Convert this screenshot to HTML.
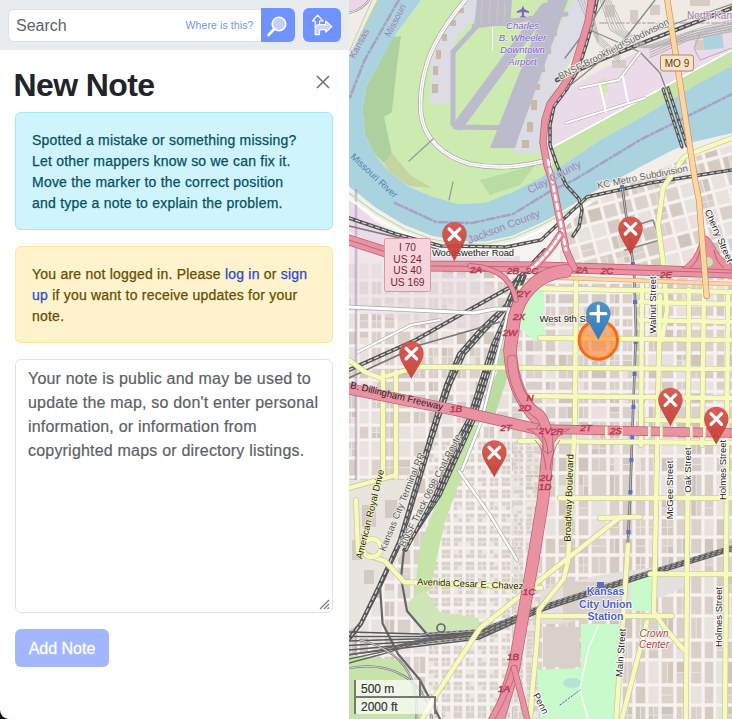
<!DOCTYPE html>
<html><head><meta charset="utf-8">
<style>
*{box-sizing:border-box;margin:0;padding:0}
html,body{width:732px;height:719px;overflow:hidden;background:#111;font-family:"Liberation Sans",sans-serif;color:#212529}
#side{position:absolute;left:0;top:0;width:349px;height:719px;background:#fff;border-bottom-left-radius:9px;overflow:hidden}
#hdr{position:absolute;left:0;top:0;width:349px;height:50px;background:#e9ecef}
#sin{position:absolute;left:7.5px;top:8.5px;width:254px;height:33px;background:#fff;border:1px solid #dee2e6;border-right:none;border-radius:6px 0 0 6px}
#sin .ph{position:absolute;left:7.5px;top:7.5px;font-size:16px;color:#5c6166;line-height:18px}
#sin .wh{position:absolute;right:8px;top:8px;font-size:10.5px;color:#7092ff;line-height:14px;letter-spacing:0.1px}
#sbtn{position:absolute;left:261px;top:8px;width:34px;height:34px;background:#7092ff;border-radius:0 6px 6px 0}
#dbtn{position:absolute;left:303px;top:8px;width:38px;height:34px;background:#7092ff;border-radius:6px}
h1{position:absolute;left:13.5px;top:64.5px;font-size:32px;font-weight:bold;line-height:40px;letter-spacing:-0.6px;color:#212529}
#close{position:absolute;left:316px;top:75px;width:14px;height:14px}
.al{position:absolute;left:15px;width:318px;padding:17px 16px 15px;-webkit-text-stroke:0.25px currentColor;font-size:14px;line-height:21px;border:1px solid;border-radius:6px;letter-spacing:0.22px;white-space:nowrap}
#a1{top:112px;background:#cff4fc;border-color:#9eeaf9;color:#055160}
#a2{top:246px;background:#fff3cd;border-color:#ffe69c;color:#664d03}
#a2 a{color:#2a47d6;text-decoration:none}
#ta{position:absolute;left:15px;top:359px;width:318px;height:254px;border:1px solid #dee2e6;border-radius:6px;padding:6.5px 12px;-webkit-text-stroke:0.2px currentColor;font-size:16px;line-height:24px;color:#5c6166;letter-spacing:0.2px;white-space:nowrap}
#grip{position:absolute;right:2px;bottom:2px;width:12px;height:12px}
#btn{position:absolute;left:15px;top:629px;width:94px;height:38px;background:#a2b7ff;border-radius:6px;color:#fff;font-size:16px;line-height:40px;text-align:center;-webkit-text-stroke:0.3px #fff}
#map{position:absolute;left:349px;top:0;width:383px;height:719px;background:#f2efe9;overflow:hidden}

.sc{position:absolute;left:5px;font-size:12px;line-height:12px;padding:3px 5px 0;-webkit-text-stroke:0.2px #333;color:#333;background:rgba(255,255,255,0.7);border:2px solid #777;white-space:nowrap;text-shadow:1px 1px #fff}
</style></head><body>
<div id="map">
<svg width="383" height="719" viewBox="349 0 383 719" style="position:absolute;left:0;top:0;font-family:'Liberation Sans',sans-serif">
<rect x="349" y="0" width="383" height="719" fill="#f2efe9"/>
<clipPath id="urb"><polygon points="349.0,195.0 376.0,216.0 404.0,232.0 431.0,243.0 458.0,249.0 486.0,249.0 513.0,243.0 540.0,231.0 590.0,204.0 640.0,178.0 671.0,164.0 732.0,145.0 732.0,719.0 349.0,719.0"/></clipPath>
<polygon points="349.0,195.0 376.0,216.0 404.0,232.0 431.0,243.0 458.0,249.0 486.0,249.0 513.0,243.0 540.0,231.0 590.0,204.0 640.0,178.0 671.0,164.0 732.0,145.0 732.0,719.0 349.0,719.0" fill="#f6f2ef" />
<g clip-path="url(#urb)"><rect x="511.4" y="277.4" width="11.2" height="3.2" fill="#e9e1dd"/><rect x="512.0" y="278.0" width="4.4" height="2.0" fill="#d9d0c9"/><rect x="517.6" y="278.0" width="4.4" height="2.0" fill="#d9d0c9"/><rect x="511.4" y="283.4" width="11.2" height="7.7" fill="#e9e1dd"/><rect x="512.0" y="284.0" width="10.0" height="6.5" fill="#dbd2cb"/><rect x="511.4" y="293.9" width="11.2" height="9.7" fill="#eddfdd"/><rect x="512.0" y="294.5" width="10.0" height="8.5" fill="#cfc5bd"/><rect x="511.4" y="306.4" width="11.2" height="9.7" fill="#e9e1dd"/><rect x="512.0" y="307.0" width="10.0" height="8.5" fill="#d9d0c9"/><rect x="511.4" y="318.9" width="11.2" height="7.7" fill="#e8e3df"/><rect x="512.0" y="319.5" width="10.0" height="6.5" fill="#d9d0c9"/><rect x="511.4" y="329.4" width="11.2" height="7.9" fill="#e8e3df"/><rect x="512.0" y="330.0" width="4.4" height="6.7" fill="#d5cbc3"/><rect x="517.6" y="330.0" width="4.4" height="6.7" fill="#dbd2cb"/><rect x="511.4" y="340.1" width="11.2" height="11.5" fill="#e9e1dd"/><rect x="512.0" y="340.7" width="10.0" height="10.3" fill="#dbd2cb"/><rect x="511.4" y="354.4" width="11.2" height="12.0" fill="#e9e1dd"/><rect x="511.4" y="369.2" width="11.2" height="9.4" fill="#e8e3df"/><rect x="512.0" y="369.8" width="4.4" height="8.2" fill="#d9d0c9"/><rect x="517.6" y="369.8" width="4.4" height="8.2" fill="#d9d0c9"/><rect x="511.4" y="381.4" width="11.2" height="8.7" fill="#e8e3df"/><rect x="512.0" y="382.0" width="4.4" height="7.5" fill="#d9d0c9"/><rect x="517.6" y="382.0" width="4.4" height="7.5" fill="#d9d0c9"/><rect x="511.4" y="392.9" width="11.2" height="10.7" fill="#eddfdd"/><rect x="512.0" y="393.5" width="10.0" height="9.5" fill="#cfc5bd"/><rect x="511.4" y="406.4" width="11.2" height="12.2" fill="#e9e1dd"/><rect x="512.0" y="407.0" width="10.0" height="4.9" fill="#d9d0c9"/><rect x="512.0" y="413.1" width="10.0" height="4.9" fill="#d9d0c9"/><rect x="511.4" y="421.4" width="11.2" height="17.6" fill="#e9e1dd"/><rect x="512.0" y="422.0" width="10.0" height="16.4" fill="#d9d0c9"/><rect x="511.4" y="441.8" width="11.2" height="12.8" fill="#e8e3df"/><rect x="512.0" y="442.4" width="4.4" height="11.6" fill="#d5cbc3"/><rect x="517.6" y="442.4" width="4.4" height="11.6" fill="#d5cbc3"/><rect x="511.4" y="457.4" width="11.2" height="14.2" fill="#eddfdd"/><rect x="512.0" y="458.0" width="4.4" height="13.0" fill="#d5cbc3"/><rect x="511.4" y="474.4" width="11.2" height="22.8" fill="#e6e2de"/><rect x="511.4" y="500.0" width="11.2" height="16.1" fill="#e8e3df"/><rect x="512.0" y="500.6" width="4.4" height="6.9" fill="#d9d0c9"/><rect x="517.6" y="500.6" width="4.4" height="6.9" fill="#cfc5bd"/><rect x="517.6" y="508.7" width="4.4" height="6.9" fill="#d9d0c9"/><rect x="511.4" y="518.9" width="11.2" height="16.7" fill="#e6e2de"/><rect x="517.6" y="519.5" width="4.4" height="15.5" fill="#d5cbc3"/><rect x="511.4" y="538.4" width="11.2" height="15.2" fill="#e8e3df"/><rect x="512.0" y="539.0" width="4.4" height="6.4" fill="#d9d0c9"/><rect x="512.0" y="546.6" width="4.4" height="6.4" fill="#d9d0c9"/><rect x="517.6" y="539.0" width="4.4" height="6.4" fill="#cfc5bd"/><rect x="517.6" y="546.6" width="4.4" height="6.4" fill="#d5cbc3"/><rect x="511.4" y="556.4" width="11.2" height="17.2" fill="#e6e2de"/><rect x="511.4" y="576.4" width="11.2" height="17.2" fill="#eddfdd"/><rect x="512.0" y="577.0" width="10.0" height="7.4" fill="#d9d0c9"/><rect x="512.0" y="585.6" width="10.0" height="7.4" fill="#cfc5bd"/><rect x="511.4" y="596.4" width="11.2" height="18.2" fill="#e9e1dd"/><rect x="512.0" y="597.0" width="4.4" height="17.0" fill="#d9d0c9"/><rect x="517.6" y="597.0" width="4.4" height="17.0" fill="#dbd2cb"/><rect x="511.4" y="617.4" width="11.2" height="21.2" fill="#eddfdd"/><rect x="512.0" y="618.0" width="4.4" height="20.0" fill="#d9d0c9"/><rect x="517.6" y="618.0" width="4.4" height="20.0" fill="#d9d0c9"/><rect x="511.4" y="641.4" width="11.2" height="17.2" fill="#eddfdd"/><rect x="511.4" y="661.4" width="11.2" height="22.2" fill="#e8e3df"/><rect x="512.0" y="662.0" width="4.4" height="9.9" fill="#d9d0c9"/><rect x="512.0" y="673.1" width="4.4" height="9.9" fill="#dbd2cb"/><rect x="517.6" y="662.0" width="4.4" height="9.9" fill="#d5cbc3"/><rect x="517.6" y="673.1" width="4.4" height="9.9" fill="#d9d0c9"/><rect x="511.4" y="686.4" width="11.2" height="17.2" fill="#e6e2de"/><rect x="511.4" y="706.4" width="11.2" height="17.2" fill="#e6e2de"/><rect x="512.0" y="707.0" width="10.0" height="16.0" fill="#cfc5bd"/><rect x="525.4" y="277.4" width="17.2" height="3.2" fill="#e6e2de"/><rect x="526.0" y="278.0" width="16.0" height="2.0" fill="#d9d0c9"/><rect x="525.4" y="283.4" width="17.2" height="7.7" fill="#e9e1dd"/><rect x="525.4" y="293.9" width="17.2" height="9.7" fill="#e6e2de"/><rect x="525.4" y="306.4" width="17.2" height="9.7" fill="#e8e3df"/><rect x="526.0" y="307.0" width="16.0" height="8.5" fill="#dbd2cb"/><rect x="525.4" y="318.9" width="17.2" height="7.7" fill="#e6e2de"/><rect x="525.4" y="329.4" width="17.2" height="7.9" fill="#e6e2de"/><rect x="526.0" y="330.0" width="16.0" height="6.7" fill="#dbd2cb"/><rect x="525.4" y="340.1" width="17.2" height="11.5" fill="#e6e2de"/><rect x="526.0" y="340.7" width="7.4" height="10.3" fill="#cfc5bd"/><rect x="534.6" y="340.7" width="7.4" height="10.3" fill="#d9d0c9"/><rect x="525.4" y="354.4" width="17.2" height="12.0" fill="#e9e1dd"/><rect x="526.0" y="355.0" width="7.4" height="10.8" fill="#d9d0c9"/><rect x="525.4" y="369.2" width="17.2" height="9.4" fill="#e8e3df"/><rect x="526.0" y="369.8" width="7.4" height="8.2" fill="#dbd2cb"/><rect x="534.6" y="369.8" width="7.4" height="8.2" fill="#d9d0c9"/><rect x="525.4" y="381.4" width="17.2" height="8.7" fill="#e9e1dd"/><rect x="526.0" y="382.0" width="16.0" height="7.5" fill="#d9d0c9"/><rect x="525.4" y="392.9" width="17.2" height="10.7" fill="#e8e3df"/><rect x="526.0" y="393.5" width="16.0" height="9.5" fill="#d5cbc3"/><rect x="525.4" y="406.4" width="17.2" height="12.2" fill="#e8e3df"/><rect x="526.0" y="407.0" width="7.4" height="11.0" fill="#dbd2cb"/><rect x="534.6" y="407.0" width="7.4" height="11.0" fill="#d9d0c9"/><rect x="525.4" y="421.4" width="17.2" height="17.6" fill="#eddfdd"/><rect x="526.0" y="422.0" width="7.4" height="7.6" fill="#cfc5bd"/><rect x="526.0" y="430.8" width="7.4" height="7.6" fill="#dbd2cb"/><rect x="534.6" y="422.0" width="7.4" height="7.6" fill="#dbd2cb"/><rect x="534.6" y="430.8" width="7.4" height="7.6" fill="#cfc5bd"/><rect x="525.4" y="441.8" width="17.2" height="12.8" fill="#eddfdd"/><rect x="526.0" y="442.4" width="7.4" height="11.6" fill="#dbd2cb"/><rect x="534.6" y="442.4" width="7.4" height="11.6" fill="#d5cbc3"/><rect x="525.4" y="457.4" width="17.2" height="14.2" fill="#e9e1dd"/><rect x="526.0" y="465.1" width="16.0" height="5.9" fill="#d5cbc3"/><rect x="525.4" y="474.4" width="17.2" height="22.8" fill="#e8e3df"/><rect x="526.0" y="475.0" width="7.4" height="21.6" fill="#cfc5bd"/><rect x="534.6" y="475.0" width="7.4" height="21.6" fill="#cfc5bd"/><rect x="525.4" y="500.0" width="17.2" height="16.1" fill="#e6e2de"/><rect x="525.4" y="518.9" width="17.2" height="16.7" fill="#e8e3df"/><rect x="526.0" y="519.5" width="7.4" height="7.2" fill="#d9d0c9"/><rect x="534.6" y="519.5" width="7.4" height="7.2" fill="#cfc5bd"/><rect x="534.6" y="527.9" width="7.4" height="7.2" fill="#dbd2cb"/><rect x="525.4" y="538.4" width="17.2" height="15.2" fill="#eddfdd"/><rect x="526.0" y="539.0" width="16.0" height="6.4" fill="#d9d0c9"/><rect x="526.0" y="546.6" width="16.0" height="6.4" fill="#dbd2cb"/><rect x="525.4" y="556.4" width="17.2" height="17.2" fill="#e8e3df"/><rect x="526.0" y="557.0" width="16.0" height="16.0" fill="#d9d0c9"/><rect x="525.4" y="576.4" width="17.2" height="17.2" fill="#e9e1dd"/><rect x="526.0" y="577.0" width="16.0" height="16.0" fill="#dbd2cb"/><rect x="525.4" y="596.4" width="17.2" height="18.2" fill="#eddfdd"/><rect x="526.0" y="597.0" width="16.0" height="17.0" fill="#cfc5bd"/><rect x="525.4" y="617.4" width="17.2" height="21.2" fill="#eddfdd"/><rect x="526.0" y="618.0" width="16.0" height="9.4" fill="#d9d0c9"/><rect x="526.0" y="628.6" width="16.0" height="9.4" fill="#d9d0c9"/><rect x="525.4" y="641.4" width="17.2" height="17.2" fill="#e6e2de"/><rect x="526.0" y="642.0" width="16.0" height="16.0" fill="#d9d0c9"/><rect x="525.4" y="661.4" width="17.2" height="22.2" fill="#eddfdd"/><rect x="526.0" y="662.0" width="7.4" height="21.0" fill="#d9d0c9"/><rect x="534.6" y="662.0" width="7.4" height="21.0" fill="#dbd2cb"/><rect x="525.4" y="686.4" width="17.2" height="17.2" fill="#e6e2de"/><rect x="525.4" y="706.4" width="17.2" height="17.2" fill="#e8e3df"/><rect x="526.0" y="707.0" width="16.0" height="16.0" fill="#d9d0c9"/><rect x="545.4" y="277.4" width="10.2" height="3.2" fill="#e9e1dd"/><rect x="546.0" y="278.0" width="3.9" height="2.0" fill="#d5cbc3"/><rect x="551.1" y="278.0" width="3.9" height="2.0" fill="#d9d0c9"/><rect x="545.4" y="283.4" width="10.2" height="7.7" fill="#e9e1dd"/><rect x="546.0" y="284.0" width="9.0" height="6.5" fill="#d5cbc3"/><rect x="545.4" y="293.9" width="10.2" height="9.7" fill="#e9e1dd"/><rect x="546.0" y="294.5" width="3.9" height="8.5" fill="#cfc5bd"/><rect x="551.1" y="294.5" width="3.9" height="8.5" fill="#d9d0c9"/><rect x="545.4" y="306.4" width="10.2" height="9.7" fill="#eddfdd"/><rect x="546.0" y="307.0" width="3.9" height="8.5" fill="#d9d0c9"/><rect x="551.1" y="307.0" width="3.9" height="8.5" fill="#d9d0c9"/><rect x="545.4" y="318.9" width="10.2" height="7.7" fill="#e6e2de"/><rect x="546.0" y="319.5" width="3.9" height="6.5" fill="#d9d0c9"/><rect x="551.1" y="319.5" width="3.9" height="6.5" fill="#d5cbc3"/><rect x="545.4" y="329.4" width="10.2" height="7.9" fill="#e6e2de"/><rect x="546.0" y="330.0" width="9.0" height="6.7" fill="#d9d0c9"/><rect x="545.4" y="340.1" width="10.2" height="11.5" fill="#e8e3df"/><rect x="546.0" y="340.7" width="9.0" height="10.3" fill="#d9d0c9"/><rect x="545.4" y="354.4" width="10.2" height="12.0" fill="#e9e1dd"/><rect x="546.0" y="355.0" width="9.0" height="10.8" fill="#d5cbc3"/><rect x="545.4" y="369.2" width="10.2" height="9.4" fill="#e8e3df"/><rect x="545.4" y="381.4" width="10.2" height="8.7" fill="#e9e1dd"/><rect x="546.0" y="382.0" width="3.9" height="7.5" fill="#cfc5bd"/><rect x="551.1" y="382.0" width="3.9" height="7.5" fill="#dbd2cb"/><rect x="545.4" y="392.9" width="10.2" height="10.7" fill="#e9e1dd"/><rect x="545.4" y="406.4" width="10.2" height="12.2" fill="#e9e1dd"/><rect x="546.0" y="407.0" width="9.0" height="11.0" fill="#d9d0c9"/><rect x="545.4" y="421.4" width="10.2" height="17.6" fill="#e6e2de"/><rect x="546.0" y="422.0" width="9.0" height="16.4" fill="#d5cbc3"/><rect x="545.4" y="441.8" width="10.2" height="12.8" fill="#e8e3df"/><rect x="546.0" y="442.4" width="3.9" height="5.2" fill="#d9d0c9"/><rect x="546.0" y="448.8" width="3.9" height="5.2" fill="#cfc5bd"/><rect x="551.1" y="442.4" width="3.9" height="5.2" fill="#d9d0c9"/><rect x="551.1" y="448.8" width="3.9" height="5.2" fill="#d9d0c9"/><rect x="545.4" y="457.4" width="10.2" height="14.2" fill="#e6e2de"/><rect x="546.0" y="458.0" width="3.9" height="13.0" fill="#cfc5bd"/><rect x="551.1" y="458.0" width="3.9" height="13.0" fill="#d9d0c9"/><rect x="545.4" y="474.4" width="10.2" height="22.8" fill="#eddfdd"/><rect x="546.0" y="475.0" width="9.0" height="10.2" fill="#d9d0c9"/><rect x="546.0" y="486.4" width="9.0" height="10.2" fill="#d5cbc3"/><rect x="545.4" y="500.0" width="10.2" height="16.1" fill="#eddfdd"/><rect x="545.4" y="518.9" width="10.2" height="16.7" fill="#e6e2de"/><rect x="545.4" y="538.4" width="10.2" height="15.2" fill="#e6e2de"/><rect x="546.0" y="539.0" width="9.0" height="14.0" fill="#d5cbc3"/><rect x="545.4" y="556.4" width="10.2" height="17.2" fill="#e8e3df"/><rect x="546.0" y="557.0" width="9.0" height="16.0" fill="#dbd2cb"/><rect x="545.4" y="576.4" width="10.2" height="17.2" fill="#e9e1dd"/><rect x="546.0" y="577.0" width="3.9" height="7.4" fill="#d5cbc3"/><rect x="546.0" y="585.6" width="3.9" height="7.4" fill="#d9d0c9"/><rect x="551.1" y="577.0" width="3.9" height="7.4" fill="#d9d0c9"/><rect x="551.1" y="585.6" width="3.9" height="7.4" fill="#dbd2cb"/><rect x="545.4" y="596.4" width="10.2" height="18.2" fill="#e8e3df"/><rect x="546.0" y="597.0" width="3.9" height="7.9" fill="#d5cbc3"/><rect x="546.0" y="606.1" width="3.9" height="7.9" fill="#cfc5bd"/><rect x="551.1" y="597.0" width="3.9" height="7.9" fill="#d9d0c9"/><rect x="551.1" y="606.1" width="3.9" height="7.9" fill="#d9d0c9"/><rect x="545.4" y="617.4" width="10.2" height="21.2" fill="#e9e1dd"/><rect x="546.0" y="618.0" width="9.0" height="20.0" fill="#d5cbc3"/><rect x="545.4" y="641.4" width="10.2" height="17.2" fill="#e6e2de"/><rect x="545.4" y="661.4" width="10.2" height="22.2" fill="#e8e3df"/><rect x="546.0" y="662.0" width="9.0" height="9.9" fill="#d9d0c9"/><rect x="546.0" y="673.1" width="9.0" height="9.9" fill="#cfc5bd"/><rect x="545.4" y="686.4" width="10.2" height="17.2" fill="#e9e1dd"/><rect x="546.0" y="687.0" width="3.9" height="16.0" fill="#d9d0c9"/><rect x="551.1" y="687.0" width="3.9" height="16.0" fill="#d9d0c9"/><rect x="545.4" y="706.4" width="10.2" height="17.2" fill="#eddfdd"/><rect x="546.0" y="707.0" width="3.9" height="16.0" fill="#cfc5bd"/><rect x="551.1" y="707.0" width="3.9" height="16.0" fill="#d9d0c9"/><rect x="558.4" y="277.4" width="17.2" height="3.2" fill="#eddfdd"/><rect x="559.0" y="278.0" width="16.0" height="2.0" fill="#d9d0c9"/><rect x="558.4" y="283.4" width="17.2" height="7.7" fill="#e9e1dd"/><rect x="559.0" y="284.0" width="16.0" height="6.5" fill="#dbd2cb"/><rect x="558.4" y="293.9" width="17.2" height="9.7" fill="#e6e2de"/><rect x="559.0" y="294.5" width="16.0" height="8.5" fill="#d5cbc3"/><rect x="558.4" y="306.4" width="17.2" height="9.7" fill="#e9e1dd"/><rect x="559.0" y="307.0" width="7.4" height="8.5" fill="#dbd2cb"/><rect x="567.6" y="307.0" width="7.4" height="8.5" fill="#d5cbc3"/><rect x="558.4" y="318.9" width="17.2" height="7.7" fill="#e9e1dd"/><rect x="558.4" y="329.4" width="17.2" height="7.9" fill="#e6e2de"/><rect x="558.4" y="340.1" width="17.2" height="11.5" fill="#e6e2de"/><rect x="558.4" y="354.4" width="17.2" height="12.0" fill="#e8e3df"/><rect x="559.0" y="355.0" width="7.4" height="10.8" fill="#cfc5bd"/><rect x="567.6" y="355.0" width="7.4" height="10.8" fill="#d9d0c9"/><rect x="558.4" y="369.2" width="17.2" height="9.4" fill="#e8e3df"/><rect x="559.0" y="369.8" width="7.4" height="8.2" fill="#d9d0c9"/><rect x="567.6" y="369.8" width="7.4" height="8.2" fill="#d9d0c9"/><rect x="558.4" y="381.4" width="17.2" height="8.7" fill="#e8e3df"/><rect x="559.0" y="382.0" width="16.0" height="7.5" fill="#dbd2cb"/><rect x="558.4" y="392.9" width="17.2" height="10.7" fill="#e9e1dd"/><rect x="559.0" y="393.5" width="16.0" height="9.5" fill="#cfc5bd"/><rect x="558.4" y="406.4" width="17.2" height="12.2" fill="#e8e3df"/><rect x="559.0" y="407.0" width="7.4" height="11.0" fill="#d9d0c9"/><rect x="567.6" y="407.0" width="7.4" height="11.0" fill="#cfc5bd"/><rect x="558.4" y="421.4" width="17.2" height="17.6" fill="#e8e3df"/><rect x="559.0" y="422.0" width="16.0" height="7.6" fill="#d9d0c9"/><rect x="559.0" y="430.8" width="16.0" height="7.6" fill="#d5cbc3"/><rect x="558.4" y="441.8" width="17.2" height="12.8" fill="#e9e1dd"/><rect x="559.0" y="442.4" width="16.0" height="11.6" fill="#d9d0c9"/><rect x="558.4" y="457.4" width="17.2" height="14.2" fill="#e8e3df"/><rect x="559.0" y="458.0" width="7.4" height="13.0" fill="#cfc5bd"/><rect x="567.6" y="458.0" width="7.4" height="13.0" fill="#dbd2cb"/><rect x="558.4" y="474.4" width="17.2" height="22.8" fill="#e6e2de"/><rect x="559.0" y="475.0" width="7.4" height="10.2" fill="#dbd2cb"/><rect x="567.6" y="475.0" width="7.4" height="10.2" fill="#d9d0c9"/><rect x="558.4" y="500.0" width="17.2" height="16.1" fill="#eddfdd"/><rect x="559.0" y="500.6" width="7.4" height="14.9" fill="#cfc5bd"/><rect x="558.4" y="518.9" width="17.2" height="16.7" fill="#e6e2de"/><rect x="559.0" y="519.5" width="16.0" height="15.5" fill="#dbd2cb"/><rect x="558.4" y="538.4" width="17.2" height="15.2" fill="#eddfdd"/><rect x="559.0" y="539.0" width="16.0" height="6.4" fill="#d5cbc3"/><rect x="559.0" y="546.6" width="16.0" height="6.4" fill="#d5cbc3"/><rect x="558.4" y="556.4" width="17.2" height="17.2" fill="#e8e3df"/><rect x="559.0" y="557.0" width="7.4" height="16.0" fill="#d9d0c9"/><rect x="567.6" y="557.0" width="7.4" height="16.0" fill="#d5cbc3"/><rect x="558.4" y="576.4" width="17.2" height="17.2" fill="#e8e3df"/><rect x="559.0" y="577.0" width="16.0" height="7.4" fill="#d9d0c9"/><rect x="559.0" y="585.6" width="16.0" height="7.4" fill="#d9d0c9"/><rect x="558.4" y="596.4" width="17.2" height="18.2" fill="#e9e1dd"/><rect x="559.0" y="597.0" width="16.0" height="17.0" fill="#d5cbc3"/><rect x="558.4" y="617.4" width="17.2" height="21.2" fill="#e9e1dd"/><rect x="559.0" y="618.0" width="7.4" height="9.4" fill="#dbd2cb"/><rect x="559.0" y="628.6" width="7.4" height="9.4" fill="#d9d0c9"/><rect x="567.6" y="618.0" width="7.4" height="9.4" fill="#d9d0c9"/><rect x="567.6" y="628.6" width="7.4" height="9.4" fill="#d5cbc3"/><rect x="558.4" y="641.4" width="17.2" height="17.2" fill="#e6e2de"/><rect x="559.0" y="642.0" width="16.0" height="16.0" fill="#d5cbc3"/><rect x="558.4" y="661.4" width="17.2" height="22.2" fill="#e8e3df"/><rect x="559.0" y="662.0" width="16.0" height="21.0" fill="#d9d0c9"/><rect x="558.4" y="686.4" width="17.2" height="17.2" fill="#e8e3df"/><rect x="559.0" y="687.0" width="7.4" height="16.0" fill="#d5cbc3"/><rect x="567.6" y="687.0" width="7.4" height="16.0" fill="#dbd2cb"/><rect x="558.4" y="706.4" width="17.2" height="17.2" fill="#e9e1dd"/><rect x="559.0" y="707.0" width="16.0" height="16.0" fill="#d5cbc3"/><rect x="578.4" y="277.4" width="10.2" height="3.2" fill="#e8e3df"/><rect x="579.0" y="278.0" width="3.9" height="2.0" fill="#d9d0c9"/><rect x="584.1" y="278.0" width="3.9" height="2.0" fill="#d5cbc3"/><rect x="578.4" y="283.4" width="10.2" height="7.7" fill="#e9e1dd"/><rect x="579.0" y="284.0" width="3.9" height="6.5" fill="#d5cbc3"/><rect x="584.1" y="284.0" width="3.9" height="6.5" fill="#d9d0c9"/><rect x="578.4" y="293.9" width="10.2" height="9.7" fill="#e6e2de"/><rect x="579.0" y="294.5" width="9.0" height="8.5" fill="#dbd2cb"/><rect x="578.4" y="306.4" width="10.2" height="9.7" fill="#e8e3df"/><rect x="584.1" y="307.0" width="3.9" height="8.5" fill="#d9d0c9"/><rect x="578.4" y="318.9" width="10.2" height="7.7" fill="#e9e1dd"/><rect x="579.0" y="319.5" width="3.9" height="6.5" fill="#d9d0c9"/><rect x="578.4" y="329.4" width="10.2" height="7.9" fill="#eddfdd"/><rect x="578.4" y="340.1" width="10.2" height="11.5" fill="#e8e3df"/><rect x="579.0" y="340.7" width="3.9" height="10.3" fill="#dbd2cb"/><rect x="584.1" y="340.7" width="3.9" height="10.3" fill="#d5cbc3"/><rect x="578.4" y="354.4" width="10.2" height="12.0" fill="#eddfdd"/><rect x="579.0" y="355.0" width="3.9" height="10.8" fill="#dbd2cb"/><rect x="584.1" y="355.0" width="3.9" height="10.8" fill="#d9d0c9"/><rect x="578.4" y="369.2" width="10.2" height="9.4" fill="#e6e2de"/><rect x="579.0" y="369.8" width="3.9" height="8.2" fill="#d5cbc3"/><rect x="584.1" y="369.8" width="3.9" height="8.2" fill="#d9d0c9"/><rect x="578.4" y="381.4" width="10.2" height="8.7" fill="#eddfdd"/><rect x="584.1" y="382.0" width="3.9" height="7.5" fill="#d9d0c9"/><rect x="578.4" y="392.9" width="10.2" height="10.7" fill="#e9e1dd"/><rect x="579.0" y="393.5" width="3.9" height="9.5" fill="#d9d0c9"/><rect x="584.1" y="393.5" width="3.9" height="9.5" fill="#d9d0c9"/><rect x="578.4" y="406.4" width="10.2" height="12.2" fill="#eddfdd"/><rect x="579.0" y="407.0" width="3.9" height="11.0" fill="#d5cbc3"/><rect x="584.1" y="407.0" width="3.9" height="11.0" fill="#d9d0c9"/><rect x="578.4" y="421.4" width="10.2" height="17.6" fill="#eddfdd"/><rect x="579.0" y="422.0" width="9.0" height="7.6" fill="#cfc5bd"/><rect x="578.4" y="441.8" width="10.2" height="12.8" fill="#e6e2de"/><rect x="579.0" y="442.4" width="9.0" height="11.6" fill="#d9d0c9"/><rect x="578.4" y="457.4" width="10.2" height="14.2" fill="#e6e2de"/><rect x="579.0" y="458.0" width="9.0" height="13.0" fill="#cfc5bd"/><rect x="578.4" y="474.4" width="10.2" height="22.8" fill="#eddfdd"/><rect x="579.0" y="475.0" width="3.9" height="10.2" fill="#cfc5bd"/><rect x="579.0" y="486.4" width="3.9" height="10.2" fill="#dbd2cb"/><rect x="584.1" y="475.0" width="3.9" height="10.2" fill="#dbd2cb"/><rect x="584.1" y="486.4" width="3.9" height="10.2" fill="#cfc5bd"/><rect x="578.4" y="500.0" width="10.2" height="16.1" fill="#e9e1dd"/><rect x="579.0" y="500.6" width="9.0" height="6.9" fill="#d9d0c9"/><rect x="579.0" y="508.7" width="9.0" height="6.9" fill="#dbd2cb"/><rect x="578.4" y="518.9" width="10.2" height="16.7" fill="#e8e3df"/><rect x="579.0" y="519.5" width="9.0" height="15.5" fill="#d9d0c9"/><rect x="578.4" y="538.4" width="10.2" height="15.2" fill="#e6e2de"/><rect x="579.0" y="539.0" width="9.0" height="14.0" fill="#d5cbc3"/><rect x="578.4" y="556.4" width="10.2" height="17.2" fill="#eddfdd"/><rect x="579.0" y="557.0" width="3.9" height="7.4" fill="#d5cbc3"/><rect x="579.0" y="565.6" width="3.9" height="7.4" fill="#d9d0c9"/><rect x="584.1" y="557.0" width="3.9" height="7.4" fill="#d9d0c9"/><rect x="584.1" y="565.6" width="3.9" height="7.4" fill="#d9d0c9"/><rect x="578.4" y="576.4" width="10.2" height="17.2" fill="#e6e2de"/><rect x="579.0" y="577.0" width="9.0" height="16.0" fill="#d9d0c9"/><rect x="578.4" y="596.4" width="10.2" height="18.2" fill="#e9e1dd"/><rect x="578.4" y="617.4" width="10.2" height="21.2" fill="#e8e3df"/><rect x="579.0" y="618.0" width="9.0" height="20.0" fill="#d9d0c9"/><rect x="578.4" y="641.4" width="10.2" height="17.2" fill="#eddfdd"/><rect x="579.0" y="642.0" width="3.9" height="7.4" fill="#cfc5bd"/><rect x="579.0" y="650.6" width="3.9" height="7.4" fill="#dbd2cb"/><rect x="584.1" y="642.0" width="3.9" height="7.4" fill="#dbd2cb"/><rect x="584.1" y="650.6" width="3.9" height="7.4" fill="#d9d0c9"/><rect x="578.4" y="661.4" width="10.2" height="22.2" fill="#e9e1dd"/><rect x="579.0" y="662.0" width="3.9" height="21.0" fill="#dbd2cb"/><rect x="584.1" y="662.0" width="3.9" height="21.0" fill="#d9d0c9"/><rect x="578.4" y="686.4" width="10.2" height="17.2" fill="#e9e1dd"/><rect x="579.0" y="687.0" width="3.9" height="16.0" fill="#d5cbc3"/><rect x="584.1" y="687.0" width="3.9" height="16.0" fill="#cfc5bd"/><rect x="578.4" y="706.4" width="10.2" height="17.2" fill="#e6e2de"/><rect x="579.0" y="707.0" width="9.0" height="7.4" fill="#d9d0c9"/><rect x="579.0" y="715.6" width="9.0" height="7.4" fill="#dbd2cb"/><rect x="591.4" y="277.4" width="15.2" height="3.2" fill="#e9e1dd"/><rect x="592.0" y="278.0" width="6.4" height="2.0" fill="#d5cbc3"/><rect x="599.6" y="278.0" width="6.4" height="2.0" fill="#dbd2cb"/><rect x="591.4" y="283.4" width="15.2" height="7.7" fill="#eddfdd"/><rect x="592.0" y="284.0" width="14.0" height="6.5" fill="#d9d0c9"/><rect x="591.4" y="293.9" width="15.2" height="9.7" fill="#e6e2de"/><rect x="592.0" y="294.5" width="14.0" height="8.5" fill="#d5cbc3"/><rect x="591.4" y="306.4" width="15.2" height="9.7" fill="#e8e3df"/><rect x="592.0" y="307.0" width="14.0" height="8.5" fill="#d9d0c9"/><rect x="591.4" y="318.9" width="15.2" height="7.7" fill="#e6e2de"/><rect x="592.0" y="319.5" width="14.0" height="6.5" fill="#cfc5bd"/><rect x="591.4" y="329.4" width="15.2" height="7.9" fill="#e8e3df"/><rect x="591.4" y="340.1" width="15.2" height="11.5" fill="#e6e2de"/><rect x="592.0" y="340.7" width="14.0" height="10.3" fill="#d9d0c9"/><rect x="591.4" y="354.4" width="15.2" height="12.0" fill="#e9e1dd"/><rect x="592.0" y="355.0" width="6.4" height="4.8" fill="#dbd2cb"/><rect x="592.0" y="361.0" width="6.4" height="4.8" fill="#cfc5bd"/><rect x="599.6" y="361.0" width="6.4" height="4.8" fill="#cfc5bd"/><rect x="591.4" y="369.2" width="15.2" height="9.4" fill="#e8e3df"/><rect x="592.0" y="369.8" width="14.0" height="8.2" fill="#cfc5bd"/><rect x="591.4" y="381.4" width="15.2" height="8.7" fill="#e9e1dd"/><rect x="592.0" y="382.0" width="14.0" height="7.5" fill="#d9d0c9"/><rect x="591.4" y="392.9" width="15.2" height="10.7" fill="#e9e1dd"/><rect x="592.0" y="393.5" width="6.4" height="9.5" fill="#d9d0c9"/><rect x="599.6" y="393.5" width="6.4" height="9.5" fill="#d9d0c9"/><rect x="591.4" y="406.4" width="15.2" height="12.2" fill="#eddfdd"/><rect x="591.4" y="421.4" width="15.2" height="17.6" fill="#eddfdd"/><rect x="592.0" y="422.0" width="6.4" height="7.6" fill="#dbd2cb"/><rect x="592.0" y="430.8" width="6.4" height="7.6" fill="#d9d0c9"/><rect x="599.6" y="422.0" width="6.4" height="7.6" fill="#dbd2cb"/><rect x="599.6" y="430.8" width="6.4" height="7.6" fill="#cfc5bd"/><rect x="591.4" y="441.8" width="15.2" height="12.8" fill="#e8e3df"/><rect x="592.0" y="442.4" width="6.4" height="5.2" fill="#dbd2cb"/><rect x="592.0" y="448.8" width="6.4" height="5.2" fill="#cfc5bd"/><rect x="599.6" y="442.4" width="6.4" height="5.2" fill="#d5cbc3"/><rect x="599.6" y="448.8" width="6.4" height="5.2" fill="#d5cbc3"/><rect x="591.4" y="457.4" width="15.2" height="14.2" fill="#eddfdd"/><rect x="592.0" y="458.0" width="6.4" height="13.0" fill="#d9d0c9"/><rect x="599.6" y="458.0" width="6.4" height="13.0" fill="#d9d0c9"/><rect x="591.4" y="474.4" width="15.2" height="22.8" fill="#eddfdd"/><rect x="592.0" y="475.0" width="14.0" height="21.6" fill="#d9d0c9"/><rect x="591.4" y="500.0" width="15.2" height="16.1" fill="#e6e2de"/><rect x="591.4" y="518.9" width="15.2" height="16.7" fill="#e9e1dd"/><rect x="591.4" y="538.4" width="15.2" height="15.2" fill="#eddfdd"/><rect x="592.0" y="539.0" width="14.0" height="6.4" fill="#dbd2cb"/><rect x="592.0" y="546.6" width="14.0" height="6.4" fill="#d9d0c9"/><rect x="591.4" y="556.4" width="15.2" height="17.2" fill="#e8e3df"/><rect x="592.0" y="557.0" width="6.4" height="16.0" fill="#d9d0c9"/><rect x="599.6" y="557.0" width="6.4" height="16.0" fill="#dbd2cb"/><rect x="591.4" y="576.4" width="15.2" height="17.2" fill="#e6e2de"/><rect x="592.0" y="577.0" width="6.4" height="7.4" fill="#d9d0c9"/><rect x="592.0" y="585.6" width="6.4" height="7.4" fill="#d9d0c9"/><rect x="599.6" y="577.0" width="6.4" height="7.4" fill="#dbd2cb"/><rect x="599.6" y="585.6" width="6.4" height="7.4" fill="#d9d0c9"/><rect x="591.4" y="596.4" width="15.2" height="18.2" fill="#eddfdd"/><rect x="592.0" y="597.0" width="6.4" height="7.9" fill="#d9d0c9"/><rect x="592.0" y="606.1" width="6.4" height="7.9" fill="#d5cbc3"/><rect x="599.6" y="597.0" width="6.4" height="7.9" fill="#d5cbc3"/><rect x="599.6" y="606.1" width="6.4" height="7.9" fill="#d9d0c9"/><rect x="591.4" y="617.4" width="15.2" height="21.2" fill="#eddfdd"/><rect x="592.0" y="618.0" width="14.0" height="9.4" fill="#d9d0c9"/><rect x="592.0" y="628.6" width="14.0" height="9.4" fill="#cfc5bd"/><rect x="591.4" y="641.4" width="15.2" height="17.2" fill="#e9e1dd"/><rect x="592.0" y="642.0" width="6.4" height="16.0" fill="#dbd2cb"/><rect x="599.6" y="642.0" width="6.4" height="16.0" fill="#d9d0c9"/><rect x="591.4" y="661.4" width="15.2" height="22.2" fill="#e9e1dd"/><rect x="591.4" y="686.4" width="15.2" height="17.2" fill="#eddfdd"/><rect x="592.0" y="687.0" width="14.0" height="7.4" fill="#d5cbc3"/><rect x="592.0" y="695.6" width="14.0" height="7.4" fill="#dbd2cb"/><rect x="591.4" y="706.4" width="15.2" height="17.2" fill="#eddfdd"/><rect x="592.0" y="707.0" width="14.0" height="16.0" fill="#dbd2cb"/><rect x="609.4" y="277.4" width="10.2" height="3.2" fill="#eddfdd"/><rect x="610.0" y="278.0" width="3.9" height="2.0" fill="#d5cbc3"/><rect x="615.1" y="278.0" width="3.9" height="2.0" fill="#d9d0c9"/><rect x="609.4" y="283.4" width="10.2" height="7.7" fill="#e9e1dd"/><rect x="610.0" y="284.0" width="9.0" height="6.5" fill="#d5cbc3"/><rect x="609.4" y="293.9" width="10.2" height="9.7" fill="#e6e2de"/><rect x="610.0" y="294.5" width="3.9" height="8.5" fill="#d9d0c9"/><rect x="615.1" y="294.5" width="3.9" height="8.5" fill="#cfc5bd"/><rect x="609.4" y="306.4" width="10.2" height="9.7" fill="#e9e1dd"/><rect x="610.0" y="307.0" width="3.9" height="8.5" fill="#cfc5bd"/><rect x="615.1" y="307.0" width="3.9" height="8.5" fill="#d9d0c9"/><rect x="609.4" y="318.9" width="10.2" height="7.7" fill="#eddfdd"/><rect x="615.1" y="319.5" width="3.9" height="6.5" fill="#d5cbc3"/><rect x="609.4" y="329.4" width="10.2" height="7.9" fill="#e9e1dd"/><rect x="609.4" y="340.1" width="10.2" height="11.5" fill="#e8e3df"/><rect x="610.0" y="340.7" width="3.9" height="10.3" fill="#d9d0c9"/><rect x="615.1" y="340.7" width="3.9" height="10.3" fill="#dbd2cb"/><rect x="609.4" y="354.4" width="10.2" height="12.0" fill="#e9e1dd"/><rect x="610.0" y="355.0" width="3.9" height="4.8" fill="#cfc5bd"/><rect x="610.0" y="361.0" width="3.9" height="4.8" fill="#d9d0c9"/><rect x="615.1" y="355.0" width="3.9" height="4.8" fill="#d9d0c9"/><rect x="615.1" y="361.0" width="3.9" height="4.8" fill="#d9d0c9"/><rect x="609.4" y="369.2" width="10.2" height="9.4" fill="#e9e1dd"/><rect x="610.0" y="369.8" width="9.0" height="8.2" fill="#d9d0c9"/><rect x="609.4" y="381.4" width="10.2" height="8.7" fill="#e6e2de"/><rect x="610.0" y="382.0" width="3.9" height="7.5" fill="#d9d0c9"/><rect x="615.1" y="382.0" width="3.9" height="7.5" fill="#dbd2cb"/><rect x="609.4" y="392.9" width="10.2" height="10.7" fill="#e8e3df"/><rect x="610.0" y="393.5" width="3.9" height="9.5" fill="#cfc5bd"/><rect x="615.1" y="393.5" width="3.9" height="9.5" fill="#cfc5bd"/><rect x="609.4" y="406.4" width="10.2" height="12.2" fill="#e8e3df"/><rect x="610.0" y="407.0" width="9.0" height="4.9" fill="#cfc5bd"/><rect x="610.0" y="413.1" width="9.0" height="4.9" fill="#d9d0c9"/><rect x="609.4" y="421.4" width="10.2" height="17.6" fill="#e6e2de"/><rect x="610.0" y="422.0" width="3.9" height="7.6" fill="#d5cbc3"/><rect x="610.0" y="430.8" width="3.9" height="7.6" fill="#cfc5bd"/><rect x="615.1" y="422.0" width="3.9" height="7.6" fill="#d9d0c9"/><rect x="615.1" y="430.8" width="3.9" height="7.6" fill="#d5cbc3"/><rect x="609.4" y="441.8" width="10.2" height="12.8" fill="#e8e3df"/><rect x="610.0" y="442.4" width="3.9" height="11.6" fill="#dbd2cb"/><rect x="609.4" y="457.4" width="10.2" height="14.2" fill="#eddfdd"/><rect x="610.0" y="458.0" width="3.9" height="5.9" fill="#dbd2cb"/><rect x="610.0" y="465.1" width="3.9" height="5.9" fill="#d5cbc3"/><rect x="609.4" y="474.4" width="10.2" height="22.8" fill="#e6e2de"/><rect x="610.0" y="475.0" width="3.9" height="21.6" fill="#cfc5bd"/><rect x="615.1" y="475.0" width="3.9" height="21.6" fill="#d5cbc3"/><rect x="609.4" y="500.0" width="10.2" height="16.1" fill="#e6e2de"/><rect x="610.0" y="500.6" width="9.0" height="14.9" fill="#dbd2cb"/><rect x="609.4" y="518.9" width="10.2" height="16.7" fill="#e9e1dd"/><rect x="610.0" y="519.5" width="9.0" height="7.2" fill="#d5cbc3"/><rect x="610.0" y="527.9" width="9.0" height="7.2" fill="#d9d0c9"/><rect x="609.4" y="538.4" width="10.2" height="15.2" fill="#e8e3df"/><rect x="610.0" y="539.0" width="3.9" height="14.0" fill="#d5cbc3"/><rect x="615.1" y="539.0" width="3.9" height="14.0" fill="#cfc5bd"/><rect x="609.4" y="556.4" width="10.2" height="17.2" fill="#e9e1dd"/><rect x="610.0" y="557.0" width="9.0" height="16.0" fill="#d5cbc3"/><rect x="609.4" y="576.4" width="10.2" height="17.2" fill="#e6e2de"/><rect x="610.0" y="577.0" width="9.0" height="7.4" fill="#dbd2cb"/><rect x="610.0" y="585.6" width="9.0" height="7.4" fill="#d9d0c9"/><rect x="609.4" y="596.4" width="10.2" height="18.2" fill="#e8e3df"/><rect x="610.0" y="597.0" width="9.0" height="17.0" fill="#d5cbc3"/><rect x="609.4" y="617.4" width="10.2" height="21.2" fill="#eddfdd"/><rect x="610.0" y="618.0" width="9.0" height="20.0" fill="#cfc5bd"/><rect x="609.4" y="641.4" width="10.2" height="17.2" fill="#e8e3df"/><rect x="610.0" y="642.0" width="9.0" height="16.0" fill="#dbd2cb"/><rect x="609.4" y="661.4" width="10.2" height="22.2" fill="#e6e2de"/><rect x="610.0" y="662.0" width="9.0" height="21.0" fill="#d5cbc3"/><rect x="609.4" y="686.4" width="10.2" height="17.2" fill="#eddfdd"/><rect x="610.0" y="687.0" width="9.0" height="16.0" fill="#d5cbc3"/><rect x="609.4" y="706.4" width="10.2" height="17.2" fill="#e8e3df"/><rect x="610.0" y="707.0" width="3.9" height="16.0" fill="#cfc5bd"/><rect x="622.4" y="277.4" width="10.2" height="3.2" fill="#e8e3df"/><rect x="623.0" y="278.0" width="3.9" height="2.0" fill="#cfc5bd"/><rect x="628.1" y="278.0" width="3.9" height="2.0" fill="#d9d0c9"/><rect x="622.4" y="283.4" width="10.2" height="7.7" fill="#e6e2de"/><rect x="623.0" y="284.0" width="9.0" height="6.5" fill="#d5cbc3"/><rect x="622.4" y="293.9" width="10.2" height="9.7" fill="#e8e3df"/><rect x="623.0" y="294.5" width="9.0" height="8.5" fill="#d9d0c9"/><rect x="622.4" y="306.4" width="10.2" height="9.7" fill="#e6e2de"/><rect x="623.0" y="307.0" width="9.0" height="8.5" fill="#d9d0c9"/><rect x="622.4" y="318.9" width="10.2" height="7.7" fill="#eddfdd"/><rect x="623.0" y="319.5" width="3.9" height="6.5" fill="#d5cbc3"/><rect x="628.1" y="319.5" width="3.9" height="6.5" fill="#d9d0c9"/><rect x="622.4" y="329.4" width="10.2" height="7.9" fill="#e9e1dd"/><rect x="623.0" y="330.0" width="9.0" height="6.7" fill="#d9d0c9"/><rect x="622.4" y="340.1" width="10.2" height="11.5" fill="#e8e3df"/><rect x="623.0" y="340.7" width="3.9" height="10.3" fill="#dbd2cb"/><rect x="628.1" y="340.7" width="3.9" height="10.3" fill="#d9d0c9"/><rect x="622.4" y="354.4" width="10.2" height="12.0" fill="#e8e3df"/><rect x="623.0" y="355.0" width="9.0" height="4.8" fill="#d9d0c9"/><rect x="623.0" y="361.0" width="9.0" height="4.8" fill="#d5cbc3"/><rect x="622.4" y="369.2" width="10.2" height="9.4" fill="#eddfdd"/><rect x="628.1" y="369.8" width="3.9" height="8.2" fill="#d9d0c9"/><rect x="622.4" y="381.4" width="10.2" height="8.7" fill="#e6e2de"/><rect x="623.0" y="382.0" width="3.9" height="7.5" fill="#d9d0c9"/><rect x="628.1" y="382.0" width="3.9" height="7.5" fill="#dbd2cb"/><rect x="622.4" y="392.9" width="10.2" height="10.7" fill="#eddfdd"/><rect x="628.1" y="393.5" width="3.9" height="9.5" fill="#dbd2cb"/><rect x="622.4" y="406.4" width="10.2" height="12.2" fill="#eddfdd"/><rect x="623.0" y="407.0" width="9.0" height="11.0" fill="#d9d0c9"/><rect x="622.4" y="421.4" width="10.2" height="17.6" fill="#eddfdd"/><rect x="623.0" y="422.0" width="3.9" height="7.6" fill="#d9d0c9"/><rect x="628.1" y="422.0" width="3.9" height="7.6" fill="#d9d0c9"/><rect x="628.1" y="430.8" width="3.9" height="7.6" fill="#cfc5bd"/><rect x="622.4" y="441.8" width="10.2" height="12.8" fill="#e6e2de"/><rect x="623.0" y="442.4" width="9.0" height="11.6" fill="#d9d0c9"/><rect x="622.4" y="457.4" width="10.2" height="14.2" fill="#eddfdd"/><rect x="623.0" y="458.0" width="9.0" height="5.9" fill="#cfc5bd"/><rect x="623.0" y="465.1" width="9.0" height="5.9" fill="#d5cbc3"/><rect x="622.4" y="474.4" width="10.2" height="22.8" fill="#e6e2de"/><rect x="623.0" y="475.0" width="9.0" height="21.6" fill="#d9d0c9"/><rect x="622.4" y="500.0" width="10.2" height="16.1" fill="#e8e3df"/><rect x="623.0" y="500.6" width="9.0" height="14.9" fill="#d5cbc3"/><rect x="622.4" y="518.9" width="10.2" height="16.7" fill="#e9e1dd"/><rect x="623.0" y="519.5" width="9.0" height="15.5" fill="#d5cbc3"/><rect x="622.4" y="538.4" width="10.2" height="15.2" fill="#eddfdd"/><rect x="623.0" y="539.0" width="9.0" height="14.0" fill="#d5cbc3"/><rect x="622.4" y="556.4" width="10.2" height="17.2" fill="#e9e1dd"/><rect x="623.0" y="557.0" width="3.9" height="16.0" fill="#d5cbc3"/><rect x="628.1" y="557.0" width="3.9" height="16.0" fill="#d5cbc3"/><rect x="622.4" y="576.4" width="10.2" height="17.2" fill="#e9e1dd"/><rect x="623.0" y="577.0" width="9.0" height="7.4" fill="#dbd2cb"/><rect x="623.0" y="585.6" width="9.0" height="7.4" fill="#d9d0c9"/><rect x="622.4" y="596.4" width="10.2" height="18.2" fill="#eddfdd"/><rect x="623.0" y="597.0" width="3.9" height="7.9" fill="#d5cbc3"/><rect x="623.0" y="606.1" width="3.9" height="7.9" fill="#dbd2cb"/><rect x="628.1" y="606.1" width="3.9" height="7.9" fill="#dbd2cb"/><rect x="622.4" y="617.4" width="10.2" height="21.2" fill="#eddfdd"/><rect x="623.0" y="618.0" width="9.0" height="20.0" fill="#cfc5bd"/><rect x="622.4" y="641.4" width="10.2" height="17.2" fill="#e9e1dd"/><rect x="623.0" y="642.0" width="3.9" height="16.0" fill="#d9d0c9"/><rect x="628.1" y="642.0" width="3.9" height="16.0" fill="#dbd2cb"/><rect x="622.4" y="661.4" width="10.2" height="22.2" fill="#e9e1dd"/><rect x="623.0" y="662.0" width="3.9" height="21.0" fill="#d9d0c9"/><rect x="628.1" y="662.0" width="3.9" height="21.0" fill="#d9d0c9"/><rect x="622.4" y="686.4" width="10.2" height="17.2" fill="#eddfdd"/><rect x="623.0" y="687.0" width="3.9" height="16.0" fill="#d5cbc3"/><rect x="628.1" y="687.0" width="3.9" height="16.0" fill="#d9d0c9"/><rect x="622.4" y="706.4" width="10.2" height="17.2" fill="#e6e2de"/><rect x="623.0" y="707.0" width="3.9" height="7.4" fill="#d5cbc3"/><rect x="623.0" y="715.6" width="3.9" height="7.4" fill="#d9d0c9"/><rect x="628.1" y="707.0" width="3.9" height="7.4" fill="#cfc5bd"/><rect x="628.1" y="715.6" width="3.9" height="7.4" fill="#d9d0c9"/><rect x="635.4" y="277.4" width="10.2" height="3.2" fill="#e6e2de"/><rect x="636.0" y="278.0" width="3.9" height="2.0" fill="#d9d0c9"/><rect x="641.1" y="278.0" width="3.9" height="2.0" fill="#d9d0c9"/><rect x="635.4" y="283.4" width="10.2" height="7.7" fill="#e8e3df"/><rect x="636.0" y="284.0" width="3.9" height="6.5" fill="#dbd2cb"/><rect x="641.1" y="284.0" width="3.9" height="6.5" fill="#d9d0c9"/><rect x="635.4" y="293.9" width="10.2" height="9.7" fill="#eddfdd"/><rect x="636.0" y="294.5" width="3.9" height="8.5" fill="#dbd2cb"/><rect x="641.1" y="294.5" width="3.9" height="8.5" fill="#dbd2cb"/><rect x="635.4" y="306.4" width="10.2" height="9.7" fill="#e8e3df"/><rect x="636.0" y="307.0" width="9.0" height="8.5" fill="#d9d0c9"/><rect x="635.4" y="318.9" width="10.2" height="7.7" fill="#e9e1dd"/><rect x="636.0" y="319.5" width="3.9" height="6.5" fill="#dbd2cb"/><rect x="641.1" y="319.5" width="3.9" height="6.5" fill="#cfc5bd"/><rect x="635.4" y="329.4" width="10.2" height="7.9" fill="#eddfdd"/><rect x="636.0" y="330.0" width="9.0" height="6.7" fill="#d5cbc3"/><rect x="635.4" y="340.1" width="10.2" height="11.5" fill="#e8e3df"/><rect x="636.0" y="340.7" width="3.9" height="10.3" fill="#cfc5bd"/><rect x="641.1" y="340.7" width="3.9" height="10.3" fill="#d9d0c9"/><rect x="635.4" y="354.4" width="10.2" height="12.0" fill="#e6e2de"/><rect x="636.0" y="355.0" width="9.0" height="10.8" fill="#d9d0c9"/><rect x="635.4" y="369.2" width="10.2" height="9.4" fill="#e9e1dd"/><rect x="636.0" y="369.8" width="3.9" height="8.2" fill="#d9d0c9"/><rect x="641.1" y="369.8" width="3.9" height="8.2" fill="#dbd2cb"/><rect x="635.4" y="381.4" width="10.2" height="8.7" fill="#e6e2de"/><rect x="636.0" y="382.0" width="9.0" height="7.5" fill="#dbd2cb"/><rect x="635.4" y="392.9" width="10.2" height="10.7" fill="#e6e2de"/><rect x="636.0" y="393.5" width="9.0" height="9.5" fill="#cfc5bd"/><rect x="635.4" y="406.4" width="10.2" height="12.2" fill="#e6e2de"/><rect x="635.4" y="421.4" width="10.2" height="17.6" fill="#e6e2de"/><rect x="636.0" y="422.0" width="9.0" height="16.4" fill="#d9d0c9"/><rect x="635.4" y="441.8" width="10.2" height="12.8" fill="#e9e1dd"/><rect x="635.4" y="457.4" width="10.2" height="14.2" fill="#e9e1dd"/><rect x="641.1" y="458.0" width="3.9" height="13.0" fill="#d9d0c9"/><rect x="635.4" y="474.4" width="10.2" height="22.8" fill="#e6e2de"/><rect x="636.0" y="475.0" width="3.9" height="21.6" fill="#d5cbc3"/><rect x="641.1" y="475.0" width="3.9" height="21.6" fill="#dbd2cb"/><rect x="635.4" y="500.0" width="10.2" height="16.1" fill="#eddfdd"/><rect x="636.0" y="500.6" width="9.0" height="14.9" fill="#d9d0c9"/><rect x="635.4" y="518.9" width="10.2" height="16.7" fill="#e9e1dd"/><rect x="636.0" y="519.5" width="3.9" height="7.2" fill="#d9d0c9"/><rect x="636.0" y="527.9" width="3.9" height="7.2" fill="#d9d0c9"/><rect x="641.1" y="519.5" width="3.9" height="7.2" fill="#dbd2cb"/><rect x="641.1" y="527.9" width="3.9" height="7.2" fill="#d9d0c9"/><rect x="635.4" y="538.4" width="10.2" height="15.2" fill="#e8e3df"/><rect x="636.0" y="539.0" width="9.0" height="6.4" fill="#d5cbc3"/><rect x="636.0" y="546.6" width="9.0" height="6.4" fill="#d5cbc3"/><rect x="635.4" y="556.4" width="10.2" height="17.2" fill="#eddfdd"/><rect x="636.0" y="557.0" width="3.9" height="7.4" fill="#cfc5bd"/><rect x="636.0" y="565.6" width="3.9" height="7.4" fill="#d9d0c9"/><rect x="641.1" y="557.0" width="3.9" height="7.4" fill="#d5cbc3"/><rect x="641.1" y="565.6" width="3.9" height="7.4" fill="#d5cbc3"/><rect x="635.4" y="576.4" width="10.2" height="17.2" fill="#eddfdd"/><rect x="636.0" y="577.0" width="9.0" height="16.0" fill="#dbd2cb"/><rect x="635.4" y="596.4" width="10.2" height="18.2" fill="#e8e3df"/><rect x="636.0" y="597.0" width="3.9" height="17.0" fill="#cfc5bd"/><rect x="641.1" y="597.0" width="3.9" height="17.0" fill="#d9d0c9"/><rect x="635.4" y="617.4" width="10.2" height="21.2" fill="#e6e2de"/><rect x="636.0" y="618.0" width="3.9" height="20.0" fill="#dbd2cb"/><rect x="641.1" y="618.0" width="3.9" height="20.0" fill="#dbd2cb"/><rect x="635.4" y="641.4" width="10.2" height="17.2" fill="#eddfdd"/><rect x="636.0" y="642.0" width="9.0" height="7.4" fill="#d9d0c9"/><rect x="636.0" y="650.6" width="9.0" height="7.4" fill="#d5cbc3"/><rect x="635.4" y="661.4" width="10.2" height="22.2" fill="#e6e2de"/><rect x="636.0" y="662.0" width="9.0" height="21.0" fill="#dbd2cb"/><rect x="635.4" y="686.4" width="10.2" height="17.2" fill="#eddfdd"/><rect x="636.0" y="687.0" width="9.0" height="16.0" fill="#d5cbc3"/><rect x="635.4" y="706.4" width="10.2" height="17.2" fill="#e6e2de"/><rect x="636.0" y="707.0" width="3.9" height="16.0" fill="#cfc5bd"/><rect x="641.1" y="707.0" width="3.9" height="16.0" fill="#d5cbc3"/><rect x="648.4" y="277.4" width="10.2" height="3.2" fill="#e8e3df"/><rect x="649.0" y="278.0" width="9.0" height="2.0" fill="#d5cbc3"/><rect x="648.4" y="283.4" width="10.2" height="7.7" fill="#e6e2de"/><rect x="649.0" y="284.0" width="9.0" height="6.5" fill="#d9d0c9"/><rect x="648.4" y="293.9" width="10.2" height="9.7" fill="#e9e1dd"/><rect x="649.0" y="294.5" width="9.0" height="8.5" fill="#dbd2cb"/><rect x="648.4" y="306.4" width="10.2" height="9.7" fill="#eddfdd"/><rect x="649.0" y="307.0" width="3.9" height="8.5" fill="#d9d0c9"/><rect x="654.1" y="307.0" width="3.9" height="8.5" fill="#d5cbc3"/><rect x="648.4" y="318.9" width="10.2" height="7.7" fill="#e6e2de"/><rect x="649.0" y="319.5" width="9.0" height="6.5" fill="#d9d0c9"/><rect x="648.4" y="329.4" width="10.2" height="7.9" fill="#e6e2de"/><rect x="649.0" y="330.0" width="3.9" height="6.7" fill="#dbd2cb"/><rect x="654.1" y="330.0" width="3.9" height="6.7" fill="#dbd2cb"/><rect x="648.4" y="340.1" width="10.2" height="11.5" fill="#eddfdd"/><rect x="649.0" y="340.7" width="3.9" height="10.3" fill="#d5cbc3"/><rect x="654.1" y="340.7" width="3.9" height="10.3" fill="#d5cbc3"/><rect x="648.4" y="354.4" width="10.2" height="12.0" fill="#e6e2de"/><rect x="648.4" y="369.2" width="10.2" height="9.4" fill="#e6e2de"/><rect x="649.0" y="369.8" width="9.0" height="8.2" fill="#cfc5bd"/><rect x="648.4" y="381.4" width="10.2" height="8.7" fill="#eddfdd"/><rect x="648.4" y="392.9" width="10.2" height="10.7" fill="#eddfdd"/><rect x="648.4" y="406.4" width="10.2" height="12.2" fill="#e9e1dd"/><rect x="649.0" y="407.0" width="3.9" height="11.0" fill="#cfc5bd"/><rect x="654.1" y="407.0" width="3.9" height="11.0" fill="#d5cbc3"/><rect x="648.4" y="421.4" width="10.2" height="17.6" fill="#e6e2de"/><rect x="649.0" y="422.0" width="3.9" height="16.4" fill="#cfc5bd"/><rect x="654.1" y="422.0" width="3.9" height="16.4" fill="#d9d0c9"/><rect x="648.4" y="441.8" width="10.2" height="12.8" fill="#eddfdd"/><rect x="649.0" y="442.4" width="9.0" height="5.2" fill="#d9d0c9"/><rect x="649.0" y="448.8" width="9.0" height="5.2" fill="#d9d0c9"/><rect x="648.4" y="457.4" width="10.2" height="14.2" fill="#e6e2de"/><rect x="649.0" y="458.0" width="3.9" height="13.0" fill="#d9d0c9"/><rect x="654.1" y="458.0" width="3.9" height="13.0" fill="#d9d0c9"/><rect x="648.4" y="474.4" width="10.2" height="22.8" fill="#e6e2de"/><rect x="649.0" y="475.0" width="3.9" height="21.6" fill="#d9d0c9"/><rect x="654.1" y="475.0" width="3.9" height="21.6" fill="#d9d0c9"/><rect x="648.4" y="500.0" width="10.2" height="16.1" fill="#e9e1dd"/><rect x="649.0" y="500.6" width="3.9" height="14.9" fill="#d9d0c9"/><rect x="648.4" y="518.9" width="10.2" height="16.7" fill="#eddfdd"/><rect x="649.0" y="519.5" width="3.9" height="7.2" fill="#dbd2cb"/><rect x="649.0" y="527.9" width="3.9" height="7.2" fill="#dbd2cb"/><rect x="654.1" y="519.5" width="3.9" height="7.2" fill="#cfc5bd"/><rect x="654.1" y="527.9" width="3.9" height="7.2" fill="#dbd2cb"/><rect x="648.4" y="538.4" width="10.2" height="15.2" fill="#e8e3df"/><rect x="648.4" y="556.4" width="10.2" height="17.2" fill="#e6e2de"/><rect x="649.0" y="557.0" width="3.9" height="16.0" fill="#d5cbc3"/><rect x="654.1" y="557.0" width="3.9" height="16.0" fill="#d5cbc3"/><rect x="648.4" y="576.4" width="10.2" height="17.2" fill="#e6e2de"/><rect x="649.0" y="577.0" width="9.0" height="16.0" fill="#d5cbc3"/><rect x="648.4" y="596.4" width="10.2" height="18.2" fill="#e6e2de"/><rect x="654.1" y="597.0" width="3.9" height="17.0" fill="#cfc5bd"/><rect x="648.4" y="617.4" width="10.2" height="21.2" fill="#e8e3df"/><rect x="649.0" y="618.0" width="9.0" height="20.0" fill="#dbd2cb"/><rect x="648.4" y="641.4" width="10.2" height="17.2" fill="#e8e3df"/><rect x="649.0" y="642.0" width="9.0" height="7.4" fill="#cfc5bd"/><rect x="649.0" y="650.6" width="9.0" height="7.4" fill="#d5cbc3"/><rect x="648.4" y="661.4" width="10.2" height="22.2" fill="#e9e1dd"/><rect x="648.4" y="686.4" width="10.2" height="17.2" fill="#e9e1dd"/><rect x="648.4" y="706.4" width="10.2" height="17.2" fill="#e6e2de"/><rect x="649.0" y="707.0" width="3.9" height="7.4" fill="#d5cbc3"/><rect x="649.0" y="715.6" width="3.9" height="7.4" fill="#cfc5bd"/><rect x="654.1" y="707.0" width="3.9" height="7.4" fill="#d9d0c9"/><rect x="654.1" y="715.6" width="3.9" height="7.4" fill="#d9d0c9"/><rect x="661.4" y="277.4" width="12.2" height="3.2" fill="#e6e2de"/><rect x="662.0" y="278.0" width="4.9" height="2.0" fill="#d9d0c9"/><rect x="668.1" y="278.0" width="4.9" height="2.0" fill="#d9d0c9"/><rect x="661.4" y="283.4" width="12.2" height="7.7" fill="#e9e1dd"/><rect x="662.0" y="284.0" width="4.9" height="6.5" fill="#cfc5bd"/><rect x="668.1" y="284.0" width="4.9" height="6.5" fill="#cfc5bd"/><rect x="661.4" y="293.9" width="12.2" height="9.7" fill="#e8e3df"/><rect x="662.0" y="294.5" width="11.0" height="8.5" fill="#cfc5bd"/><rect x="661.4" y="306.4" width="12.2" height="9.7" fill="#e9e1dd"/><rect x="662.0" y="307.0" width="11.0" height="8.5" fill="#dbd2cb"/><rect x="661.4" y="318.9" width="12.2" height="7.7" fill="#eddfdd"/><rect x="662.0" y="319.5" width="4.9" height="6.5" fill="#d9d0c9"/><rect x="668.1" y="319.5" width="4.9" height="6.5" fill="#cfc5bd"/><rect x="661.4" y="329.4" width="12.2" height="7.9" fill="#e9e1dd"/><rect x="662.0" y="330.0" width="11.0" height="6.7" fill="#cfc5bd"/><rect x="661.4" y="340.1" width="12.2" height="11.5" fill="#e8e3df"/><rect x="662.0" y="340.7" width="11.0" height="10.3" fill="#d9d0c9"/><rect x="661.4" y="354.4" width="12.2" height="12.0" fill="#e6e2de"/><rect x="661.4" y="369.2" width="12.2" height="9.4" fill="#e8e3df"/><rect x="662.0" y="369.8" width="11.0" height="8.2" fill="#dbd2cb"/><rect x="661.4" y="381.4" width="12.2" height="8.7" fill="#e6e2de"/><rect x="662.0" y="382.0" width="11.0" height="7.5" fill="#d5cbc3"/><rect x="661.4" y="392.9" width="12.2" height="10.7" fill="#e9e1dd"/><rect x="661.4" y="406.4" width="12.2" height="12.2" fill="#e9e1dd"/><rect x="668.1" y="407.0" width="4.9" height="11.0" fill="#d9d0c9"/><rect x="661.4" y="421.4" width="12.2" height="17.6" fill="#e8e3df"/><rect x="662.0" y="422.0" width="11.0" height="16.4" fill="#dbd2cb"/><rect x="661.4" y="441.8" width="12.2" height="12.8" fill="#e8e3df"/><rect x="661.4" y="457.4" width="12.2" height="14.2" fill="#eddfdd"/><rect x="662.0" y="458.0" width="11.0" height="13.0" fill="#cfc5bd"/><rect x="661.4" y="474.4" width="12.2" height="22.8" fill="#e8e3df"/><rect x="668.1" y="475.0" width="4.9" height="21.6" fill="#d5cbc3"/><rect x="661.4" y="500.0" width="12.2" height="16.1" fill="#e6e2de"/><rect x="662.0" y="500.6" width="11.0" height="6.9" fill="#cfc5bd"/><rect x="662.0" y="508.7" width="11.0" height="6.9" fill="#dbd2cb"/><rect x="661.4" y="518.9" width="12.2" height="16.7" fill="#e6e2de"/><rect x="662.0" y="519.5" width="4.9" height="7.2" fill="#d5cbc3"/><rect x="662.0" y="527.9" width="4.9" height="7.2" fill="#d5cbc3"/><rect x="668.1" y="519.5" width="4.9" height="7.2" fill="#d9d0c9"/><rect x="668.1" y="527.9" width="4.9" height="7.2" fill="#d5cbc3"/><rect x="661.4" y="538.4" width="12.2" height="15.2" fill="#e6e2de"/><rect x="662.0" y="539.0" width="4.9" height="6.4" fill="#dbd2cb"/><rect x="662.0" y="546.6" width="4.9" height="6.4" fill="#d9d0c9"/><rect x="668.1" y="539.0" width="4.9" height="6.4" fill="#dbd2cb"/><rect x="668.1" y="546.6" width="4.9" height="6.4" fill="#cfc5bd"/><rect x="661.4" y="556.4" width="12.2" height="17.2" fill="#eddfdd"/><rect x="662.0" y="557.0" width="4.9" height="16.0" fill="#d9d0c9"/><rect x="668.1" y="557.0" width="4.9" height="16.0" fill="#cfc5bd"/><rect x="661.4" y="576.4" width="12.2" height="17.2" fill="#eddfdd"/><rect x="662.0" y="577.0" width="11.0" height="16.0" fill="#cfc5bd"/><rect x="661.4" y="596.4" width="12.2" height="18.2" fill="#eddfdd"/><rect x="662.0" y="597.0" width="11.0" height="17.0" fill="#dbd2cb"/><rect x="661.4" y="617.4" width="12.2" height="21.2" fill="#e8e3df"/><rect x="662.0" y="618.0" width="4.9" height="20.0" fill="#cfc5bd"/><rect x="668.1" y="618.0" width="4.9" height="20.0" fill="#cfc5bd"/><rect x="661.4" y="641.4" width="12.2" height="17.2" fill="#eddfdd"/><rect x="662.0" y="642.0" width="11.0" height="16.0" fill="#dbd2cb"/><rect x="661.4" y="661.4" width="12.2" height="22.2" fill="#e9e1dd"/><rect x="662.0" y="662.0" width="4.9" height="21.0" fill="#d9d0c9"/><rect x="668.1" y="662.0" width="4.9" height="21.0" fill="#d5cbc3"/><rect x="661.4" y="686.4" width="12.2" height="17.2" fill="#e8e3df"/><rect x="662.0" y="687.0" width="11.0" height="7.4" fill="#dbd2cb"/><rect x="662.0" y="695.6" width="11.0" height="7.4" fill="#dbd2cb"/><rect x="661.4" y="706.4" width="12.2" height="17.2" fill="#e6e2de"/><rect x="662.0" y="707.0" width="11.0" height="7.4" fill="#cfc5bd"/><rect x="662.0" y="715.6" width="11.0" height="7.4" fill="#d9d0c9"/><rect x="676.4" y="277.4" width="11.7" height="3.2" fill="#e6e2de"/><rect x="677.0" y="278.0" width="10.5" height="2.0" fill="#dbd2cb"/><rect x="676.4" y="283.4" width="11.7" height="7.7" fill="#e8e3df"/><rect x="677.0" y="284.0" width="10.5" height="6.5" fill="#dbd2cb"/><rect x="676.4" y="293.9" width="11.7" height="9.7" fill="#eddfdd"/><rect x="677.0" y="294.5" width="4.7" height="8.5" fill="#d9d0c9"/><rect x="676.4" y="306.4" width="11.7" height="9.7" fill="#eddfdd"/><rect x="676.4" y="318.9" width="11.7" height="7.7" fill="#e9e1dd"/><rect x="677.0" y="319.5" width="10.5" height="6.5" fill="#d9d0c9"/><rect x="676.4" y="329.4" width="11.7" height="7.9" fill="#e8e3df"/><rect x="677.0" y="330.0" width="4.7" height="6.7" fill="#d5cbc3"/><rect x="682.9" y="330.0" width="4.7" height="6.7" fill="#d9d0c9"/><rect x="676.4" y="340.1" width="11.7" height="11.5" fill="#eddfdd"/><rect x="677.0" y="340.7" width="10.5" height="10.3" fill="#d9d0c9"/><rect x="676.4" y="354.4" width="11.7" height="12.0" fill="#e8e3df"/><rect x="677.0" y="355.0" width="4.7" height="4.8" fill="#cfc5bd"/><rect x="677.0" y="361.0" width="4.7" height="4.8" fill="#d9d0c9"/><rect x="682.9" y="355.0" width="4.7" height="4.8" fill="#d5cbc3"/><rect x="676.4" y="369.2" width="11.7" height="9.4" fill="#e6e2de"/><rect x="676.4" y="381.4" width="11.7" height="8.7" fill="#e8e3df"/><rect x="677.0" y="382.0" width="4.7" height="7.5" fill="#d9d0c9"/><rect x="682.9" y="382.0" width="4.7" height="7.5" fill="#d9d0c9"/><rect x="676.4" y="392.9" width="11.7" height="10.7" fill="#e6e2de"/><rect x="676.4" y="406.4" width="11.7" height="12.2" fill="#e8e3df"/><rect x="677.0" y="407.0" width="10.5" height="11.0" fill="#d9d0c9"/><rect x="676.4" y="421.4" width="11.7" height="17.6" fill="#e6e2de"/><rect x="677.0" y="422.0" width="10.5" height="16.4" fill="#cfc5bd"/><rect x="676.4" y="441.8" width="11.7" height="12.8" fill="#e8e3df"/><rect x="676.4" y="457.4" width="11.7" height="14.2" fill="#e9e1dd"/><rect x="677.0" y="458.0" width="10.5" height="13.0" fill="#d9d0c9"/><rect x="676.4" y="474.4" width="11.7" height="22.8" fill="#eddfdd"/><rect x="677.0" y="475.0" width="10.5" height="21.6" fill="#d9d0c9"/><rect x="676.4" y="500.0" width="11.7" height="16.1" fill="#e9e1dd"/><rect x="677.0" y="500.6" width="10.5" height="14.9" fill="#d9d0c9"/><rect x="676.4" y="518.9" width="11.7" height="16.7" fill="#e9e1dd"/><rect x="677.0" y="519.5" width="10.5" height="15.5" fill="#dbd2cb"/><rect x="676.4" y="538.4" width="11.7" height="15.2" fill="#e8e3df"/><rect x="677.0" y="539.0" width="4.7" height="14.0" fill="#d9d0c9"/><rect x="682.9" y="539.0" width="4.7" height="14.0" fill="#cfc5bd"/><rect x="676.4" y="556.4" width="11.7" height="17.2" fill="#e6e2de"/><rect x="677.0" y="557.0" width="10.5" height="7.4" fill="#d9d0c9"/><rect x="677.0" y="565.6" width="10.5" height="7.4" fill="#d9d0c9"/><rect x="676.4" y="576.4" width="11.7" height="17.2" fill="#e8e3df"/><rect x="677.0" y="577.0" width="4.7" height="16.0" fill="#dbd2cb"/><rect x="682.9" y="577.0" width="4.7" height="16.0" fill="#d9d0c9"/><rect x="676.4" y="596.4" width="11.7" height="18.2" fill="#e9e1dd"/><rect x="677.0" y="597.0" width="4.7" height="17.0" fill="#dbd2cb"/><rect x="682.9" y="597.0" width="4.7" height="17.0" fill="#d9d0c9"/><rect x="676.4" y="617.4" width="11.7" height="21.2" fill="#e6e2de"/><rect x="677.0" y="618.0" width="10.5" height="20.0" fill="#d9d0c9"/><rect x="676.4" y="641.4" width="11.7" height="17.2" fill="#e6e2de"/><rect x="677.0" y="642.0" width="10.5" height="7.4" fill="#dbd2cb"/><rect x="676.4" y="661.4" width="11.7" height="22.2" fill="#e6e2de"/><rect x="677.0" y="662.0" width="10.5" height="9.9" fill="#cfc5bd"/><rect x="677.0" y="673.1" width="10.5" height="9.9" fill="#dbd2cb"/><rect x="676.4" y="686.4" width="11.7" height="17.2" fill="#e9e1dd"/><rect x="677.0" y="687.0" width="10.5" height="16.0" fill="#dbd2cb"/><rect x="676.4" y="706.4" width="11.7" height="17.2" fill="#eddfdd"/><rect x="677.0" y="707.0" width="4.7" height="16.0" fill="#d9d0c9"/><rect x="690.9" y="277.4" width="10.7" height="3.2" fill="#eddfdd"/><rect x="696.9" y="278.0" width="4.2" height="2.0" fill="#dbd2cb"/><rect x="690.9" y="283.4" width="10.7" height="7.7" fill="#e6e2de"/><rect x="691.5" y="284.0" width="4.2" height="6.5" fill="#dbd2cb"/><rect x="696.9" y="284.0" width="4.2" height="6.5" fill="#dbd2cb"/><rect x="690.9" y="293.9" width="10.7" height="9.7" fill="#e8e3df"/><rect x="691.5" y="294.5" width="9.5" height="8.5" fill="#dbd2cb"/><rect x="690.9" y="306.4" width="10.7" height="9.7" fill="#e8e3df"/><rect x="691.5" y="307.0" width="9.5" height="8.5" fill="#dbd2cb"/><rect x="690.9" y="318.9" width="10.7" height="7.7" fill="#e8e3df"/><rect x="690.9" y="329.4" width="10.7" height="7.9" fill="#e9e1dd"/><rect x="691.5" y="330.0" width="9.5" height="6.7" fill="#dbd2cb"/><rect x="690.9" y="340.1" width="10.7" height="11.5" fill="#e8e3df"/><rect x="691.5" y="340.7" width="9.5" height="10.3" fill="#d9d0c9"/><rect x="690.9" y="354.4" width="10.7" height="12.0" fill="#e9e1dd"/><rect x="691.5" y="355.0" width="9.5" height="10.8" fill="#cfc5bd"/><rect x="690.9" y="369.2" width="10.7" height="9.4" fill="#eddfdd"/><rect x="691.5" y="369.8" width="4.2" height="8.2" fill="#d9d0c9"/><rect x="696.9" y="369.8" width="4.2" height="8.2" fill="#d9d0c9"/><rect x="690.9" y="381.4" width="10.7" height="8.7" fill="#e8e3df"/><rect x="690.9" y="392.9" width="10.7" height="10.7" fill="#e6e2de"/><rect x="691.5" y="393.5" width="9.5" height="9.5" fill="#cfc5bd"/><rect x="690.9" y="406.4" width="10.7" height="12.2" fill="#e6e2de"/><rect x="691.5" y="407.0" width="9.5" height="11.0" fill="#dbd2cb"/><rect x="690.9" y="421.4" width="10.7" height="17.6" fill="#eddfdd"/><rect x="691.5" y="422.0" width="9.5" height="16.4" fill="#cfc5bd"/><rect x="690.9" y="441.8" width="10.7" height="12.8" fill="#e9e1dd"/><rect x="691.5" y="442.4" width="4.2" height="11.6" fill="#cfc5bd"/><rect x="696.9" y="442.4" width="4.2" height="11.6" fill="#cfc5bd"/><rect x="690.9" y="457.4" width="10.7" height="14.2" fill="#e9e1dd"/><rect x="691.5" y="458.0" width="9.5" height="5.9" fill="#d9d0c9"/><rect x="691.5" y="465.1" width="9.5" height="5.9" fill="#d5cbc3"/><rect x="690.9" y="474.4" width="10.7" height="22.8" fill="#e6e2de"/><rect x="691.5" y="475.0" width="4.2" height="21.6" fill="#cfc5bd"/><rect x="696.9" y="475.0" width="4.2" height="21.6" fill="#d9d0c9"/><rect x="690.9" y="500.0" width="10.7" height="16.1" fill="#eddfdd"/><rect x="691.5" y="500.6" width="4.2" height="14.9" fill="#cfc5bd"/><rect x="696.9" y="500.6" width="4.2" height="14.9" fill="#dbd2cb"/><rect x="690.9" y="518.9" width="10.7" height="16.7" fill="#e6e2de"/><rect x="691.5" y="519.5" width="9.5" height="15.5" fill="#dbd2cb"/><rect x="690.9" y="538.4" width="10.7" height="15.2" fill="#e9e1dd"/><rect x="691.5" y="539.0" width="9.5" height="14.0" fill="#d9d0c9"/><rect x="690.9" y="556.4" width="10.7" height="17.2" fill="#eddfdd"/><rect x="690.9" y="576.4" width="10.7" height="17.2" fill="#e9e1dd"/><rect x="691.5" y="577.0" width="9.5" height="16.0" fill="#d9d0c9"/><rect x="690.9" y="596.4" width="10.7" height="18.2" fill="#e8e3df"/><rect x="691.5" y="597.0" width="9.5" height="17.0" fill="#dbd2cb"/><rect x="690.9" y="617.4" width="10.7" height="21.2" fill="#eddfdd"/><rect x="691.5" y="618.0" width="4.2" height="20.0" fill="#dbd2cb"/><rect x="696.9" y="618.0" width="4.2" height="20.0" fill="#d9d0c9"/><rect x="690.9" y="641.4" width="10.7" height="17.2" fill="#eddfdd"/><rect x="691.5" y="642.0" width="9.5" height="16.0" fill="#d9d0c9"/><rect x="690.9" y="661.4" width="10.7" height="22.2" fill="#e6e2de"/><rect x="691.5" y="662.0" width="9.5" height="9.9" fill="#dbd2cb"/><rect x="691.5" y="673.1" width="9.5" height="9.9" fill="#dbd2cb"/><rect x="690.9" y="686.4" width="10.7" height="17.2" fill="#e8e3df"/><rect x="690.9" y="706.4" width="10.7" height="17.2" fill="#e6e2de"/><rect x="691.5" y="707.0" width="4.2" height="16.0" fill="#d9d0c9"/><rect x="696.9" y="707.0" width="4.2" height="16.0" fill="#dbd2cb"/><rect x="704.4" y="277.4" width="9.2" height="3.2" fill="#e6e2de"/><rect x="705.0" y="278.0" width="8.0" height="2.0" fill="#dbd2cb"/><rect x="704.4" y="283.4" width="9.2" height="7.7" fill="#e9e1dd"/><rect x="704.4" y="293.9" width="9.2" height="9.7" fill="#e6e2de"/><rect x="704.4" y="306.4" width="9.2" height="9.7" fill="#eddfdd"/><rect x="705.0" y="307.0" width="8.0" height="8.5" fill="#d9d0c9"/><rect x="704.4" y="318.9" width="9.2" height="7.7" fill="#eddfdd"/><rect x="705.0" y="319.5" width="8.0" height="6.5" fill="#d5cbc3"/><rect x="704.4" y="329.4" width="9.2" height="7.9" fill="#e6e2de"/><rect x="705.0" y="330.0" width="8.0" height="6.7" fill="#dbd2cb"/><rect x="704.4" y="340.1" width="9.2" height="11.5" fill="#eddfdd"/><rect x="705.0" y="340.7" width="8.0" height="10.3" fill="#dbd2cb"/><rect x="704.4" y="354.4" width="9.2" height="12.0" fill="#eddfdd"/><rect x="704.4" y="369.2" width="9.2" height="9.4" fill="#e6e2de"/><rect x="705.0" y="369.8" width="8.0" height="8.2" fill="#d5cbc3"/><rect x="704.4" y="381.4" width="9.2" height="8.7" fill="#e8e3df"/><rect x="704.4" y="392.9" width="9.2" height="10.7" fill="#e8e3df"/><rect x="705.0" y="393.5" width="8.0" height="9.5" fill="#d9d0c9"/><rect x="704.4" y="406.4" width="9.2" height="12.2" fill="#e6e2de"/><rect x="704.4" y="421.4" width="9.2" height="17.6" fill="#e8e3df"/><rect x="704.4" y="441.8" width="9.2" height="12.8" fill="#e8e3df"/><rect x="705.0" y="442.4" width="8.0" height="11.6" fill="#d5cbc3"/><rect x="704.4" y="457.4" width="9.2" height="14.2" fill="#e8e3df"/><rect x="704.4" y="474.4" width="9.2" height="22.8" fill="#e8e3df"/><rect x="705.0" y="475.0" width="8.0" height="21.6" fill="#d9d0c9"/><rect x="704.4" y="500.0" width="9.2" height="16.1" fill="#e8e3df"/><rect x="705.0" y="500.6" width="8.0" height="6.9" fill="#d9d0c9"/><rect x="705.0" y="508.7" width="8.0" height="6.9" fill="#d9d0c9"/><rect x="704.4" y="518.9" width="9.2" height="16.7" fill="#e9e1dd"/><rect x="704.4" y="538.4" width="9.2" height="15.2" fill="#e8e3df"/><rect x="705.0" y="539.0" width="8.0" height="14.0" fill="#cfc5bd"/><rect x="704.4" y="556.4" width="9.2" height="17.2" fill="#e8e3df"/><rect x="705.0" y="557.0" width="8.0" height="7.4" fill="#dbd2cb"/><rect x="705.0" y="565.6" width="8.0" height="7.4" fill="#d5cbc3"/><rect x="704.4" y="576.4" width="9.2" height="17.2" fill="#e6e2de"/><rect x="704.4" y="596.4" width="9.2" height="18.2" fill="#eddfdd"/><rect x="705.0" y="597.0" width="8.0" height="17.0" fill="#d9d0c9"/><rect x="704.4" y="617.4" width="9.2" height="21.2" fill="#e6e2de"/><rect x="704.4" y="641.4" width="9.2" height="17.2" fill="#e8e3df"/><rect x="705.0" y="642.0" width="8.0" height="16.0" fill="#d9d0c9"/><rect x="704.4" y="661.4" width="9.2" height="22.2" fill="#e8e3df"/><rect x="705.0" y="662.0" width="8.0" height="21.0" fill="#d9d0c9"/><rect x="704.4" y="686.4" width="9.2" height="17.2" fill="#e9e1dd"/><rect x="705.0" y="687.0" width="8.0" height="16.0" fill="#d9d0c9"/><rect x="704.4" y="706.4" width="9.2" height="17.2" fill="#e8e3df"/><rect x="705.0" y="707.0" width="8.0" height="16.0" fill="#d5cbc3"/><rect x="716.4" y="277.4" width="8.2" height="3.2" fill="#e9e1dd"/><rect x="717.0" y="278.0" width="7.0" height="2.0" fill="#dbd2cb"/><rect x="716.4" y="283.4" width="8.2" height="7.7" fill="#eddfdd"/><rect x="716.4" y="293.9" width="8.2" height="9.7" fill="#eddfdd"/><rect x="717.0" y="294.5" width="7.0" height="8.5" fill="#d9d0c9"/><rect x="716.4" y="306.4" width="8.2" height="9.7" fill="#e6e2de"/><rect x="717.0" y="307.0" width="7.0" height="8.5" fill="#d5cbc3"/><rect x="716.4" y="318.9" width="8.2" height="7.7" fill="#e9e1dd"/><rect x="717.0" y="319.5" width="7.0" height="6.5" fill="#dbd2cb"/><rect x="716.4" y="329.4" width="8.2" height="7.9" fill="#e9e1dd"/><rect x="717.0" y="330.0" width="7.0" height="6.7" fill="#dbd2cb"/><rect x="716.4" y="340.1" width="8.2" height="11.5" fill="#eddfdd"/><rect x="717.0" y="340.7" width="7.0" height="10.3" fill="#dbd2cb"/><rect x="716.4" y="354.4" width="8.2" height="12.0" fill="#e6e2de"/><rect x="717.0" y="355.0" width="7.0" height="10.8" fill="#d5cbc3"/><rect x="716.4" y="369.2" width="8.2" height="9.4" fill="#e8e3df"/><rect x="717.0" y="369.8" width="7.0" height="8.2" fill="#d5cbc3"/><rect x="716.4" y="381.4" width="8.2" height="8.7" fill="#e8e3df"/><rect x="717.0" y="382.0" width="7.0" height="7.5" fill="#d9d0c9"/><rect x="716.4" y="392.9" width="8.2" height="10.7" fill="#eddfdd"/><rect x="716.4" y="406.4" width="8.2" height="12.2" fill="#eddfdd"/><rect x="716.4" y="421.4" width="8.2" height="17.6" fill="#e8e3df"/><rect x="716.4" y="441.8" width="8.2" height="12.8" fill="#e9e1dd"/><rect x="716.4" y="457.4" width="8.2" height="14.2" fill="#e9e1dd"/><rect x="717.0" y="458.0" width="7.0" height="13.0" fill="#d5cbc3"/><rect x="716.4" y="474.4" width="8.2" height="22.8" fill="#e9e1dd"/><rect x="716.4" y="500.0" width="8.2" height="16.1" fill="#e8e3df"/><rect x="716.4" y="518.9" width="8.2" height="16.7" fill="#e8e3df"/><rect x="717.0" y="519.5" width="7.0" height="15.5" fill="#d5cbc3"/><rect x="716.4" y="538.4" width="8.2" height="15.2" fill="#eddfdd"/><rect x="717.0" y="539.0" width="7.0" height="14.0" fill="#d5cbc3"/><rect x="716.4" y="556.4" width="8.2" height="17.2" fill="#e6e2de"/><rect x="717.0" y="557.0" width="7.0" height="16.0" fill="#dbd2cb"/><rect x="716.4" y="576.4" width="8.2" height="17.2" fill="#e8e3df"/><rect x="717.0" y="577.0" width="7.0" height="16.0" fill="#d5cbc3"/><rect x="716.4" y="596.4" width="8.2" height="18.2" fill="#e9e1dd"/><rect x="717.0" y="597.0" width="7.0" height="7.9" fill="#dbd2cb"/><rect x="717.0" y="606.1" width="7.0" height="7.9" fill="#d9d0c9"/><rect x="716.4" y="617.4" width="8.2" height="21.2" fill="#eddfdd"/><rect x="717.0" y="628.6" width="7.0" height="9.4" fill="#d5cbc3"/><rect x="716.4" y="641.4" width="8.2" height="17.2" fill="#e8e3df"/><rect x="717.0" y="642.0" width="7.0" height="7.4" fill="#d9d0c9"/><rect x="717.0" y="650.6" width="7.0" height="7.4" fill="#d9d0c9"/><rect x="716.4" y="661.4" width="8.2" height="22.2" fill="#e6e2de"/><rect x="716.4" y="686.4" width="8.2" height="17.2" fill="#e8e3df"/><rect x="716.4" y="706.4" width="8.2" height="17.2" fill="#e6e2de"/><rect x="727.4" y="277.4" width="11.2" height="3.2" fill="#eddfdd"/><rect x="728.0" y="278.0" width="4.4" height="2.0" fill="#d9d0c9"/><rect x="733.6" y="278.0" width="4.4" height="2.0" fill="#d9d0c9"/><rect x="727.4" y="283.4" width="11.2" height="7.7" fill="#e9e1dd"/><rect x="728.0" y="284.0" width="4.4" height="6.5" fill="#d5cbc3"/><rect x="733.6" y="284.0" width="4.4" height="6.5" fill="#cfc5bd"/><rect x="727.4" y="293.9" width="11.2" height="9.7" fill="#e8e3df"/><rect x="728.0" y="294.5" width="4.4" height="8.5" fill="#dbd2cb"/><rect x="733.6" y="294.5" width="4.4" height="8.5" fill="#d5cbc3"/><rect x="727.4" y="306.4" width="11.2" height="9.7" fill="#e9e1dd"/><rect x="728.0" y="307.0" width="10.0" height="8.5" fill="#d9d0c9"/><rect x="727.4" y="318.9" width="11.2" height="7.7" fill="#eddfdd"/><rect x="728.0" y="319.5" width="4.4" height="6.5" fill="#d9d0c9"/><rect x="733.6" y="319.5" width="4.4" height="6.5" fill="#d5cbc3"/><rect x="727.4" y="329.4" width="11.2" height="7.9" fill="#e6e2de"/><rect x="728.0" y="330.0" width="4.4" height="6.7" fill="#dbd2cb"/><rect x="733.6" y="330.0" width="4.4" height="6.7" fill="#d9d0c9"/><rect x="727.4" y="340.1" width="11.2" height="11.5" fill="#e6e2de"/><rect x="728.0" y="340.7" width="4.4" height="10.3" fill="#dbd2cb"/><rect x="733.6" y="340.7" width="4.4" height="10.3" fill="#d5cbc3"/><rect x="727.4" y="354.4" width="11.2" height="12.0" fill="#e9e1dd"/><rect x="728.0" y="355.0" width="4.4" height="10.8" fill="#cfc5bd"/><rect x="733.6" y="355.0" width="4.4" height="10.8" fill="#d9d0c9"/><rect x="727.4" y="369.2" width="11.2" height="9.4" fill="#eddfdd"/><rect x="728.0" y="369.8" width="4.4" height="8.2" fill="#dbd2cb"/><rect x="733.6" y="369.8" width="4.4" height="8.2" fill="#d9d0c9"/><rect x="727.4" y="381.4" width="11.2" height="8.7" fill="#e9e1dd"/><rect x="728.0" y="382.0" width="4.4" height="7.5" fill="#d9d0c9"/><rect x="733.6" y="382.0" width="4.4" height="7.5" fill="#d9d0c9"/><rect x="727.4" y="392.9" width="11.2" height="10.7" fill="#e6e2de"/><rect x="728.0" y="393.5" width="10.0" height="9.5" fill="#d9d0c9"/><rect x="727.4" y="406.4" width="11.2" height="12.2" fill="#e9e1dd"/><rect x="728.0" y="407.0" width="4.4" height="11.0" fill="#d9d0c9"/><rect x="733.6" y="407.0" width="4.4" height="11.0" fill="#d9d0c9"/><rect x="727.4" y="421.4" width="11.2" height="17.6" fill="#e9e1dd"/><rect x="728.0" y="422.0" width="4.4" height="16.4" fill="#d9d0c9"/><rect x="733.6" y="422.0" width="4.4" height="16.4" fill="#d9d0c9"/><rect x="727.4" y="441.8" width="11.2" height="12.8" fill="#e6e2de"/><rect x="728.0" y="442.4" width="10.0" height="11.6" fill="#d9d0c9"/><rect x="727.4" y="457.4" width="11.2" height="14.2" fill="#eddfdd"/><rect x="728.0" y="458.0" width="4.4" height="13.0" fill="#d9d0c9"/><rect x="733.6" y="458.0" width="4.4" height="13.0" fill="#dbd2cb"/><rect x="727.4" y="474.4" width="11.2" height="22.8" fill="#e8e3df"/><rect x="727.4" y="500.0" width="11.2" height="16.1" fill="#e9e1dd"/><rect x="728.0" y="500.6" width="10.0" height="14.9" fill="#d9d0c9"/><rect x="727.4" y="518.9" width="11.2" height="16.7" fill="#e6e2de"/><rect x="727.4" y="538.4" width="11.2" height="15.2" fill="#eddfdd"/><rect x="728.0" y="539.0" width="4.4" height="14.0" fill="#d5cbc3"/><rect x="733.6" y="539.0" width="4.4" height="14.0" fill="#dbd2cb"/><rect x="727.4" y="556.4" width="11.2" height="17.2" fill="#e6e2de"/><rect x="728.0" y="557.0" width="10.0" height="16.0" fill="#dbd2cb"/><rect x="727.4" y="576.4" width="11.2" height="17.2" fill="#eddfdd"/><rect x="728.0" y="577.0" width="10.0" height="7.4" fill="#cfc5bd"/><rect x="728.0" y="585.6" width="10.0" height="7.4" fill="#d9d0c9"/><rect x="727.4" y="596.4" width="11.2" height="18.2" fill="#e9e1dd"/><rect x="727.4" y="617.4" width="11.2" height="21.2" fill="#e8e3df"/><rect x="727.4" y="641.4" width="11.2" height="17.2" fill="#eddfdd"/><rect x="728.0" y="642.0" width="4.4" height="16.0" fill="#d5cbc3"/><rect x="733.6" y="642.0" width="4.4" height="16.0" fill="#dbd2cb"/><rect x="727.4" y="661.4" width="11.2" height="22.2" fill="#eddfdd"/><rect x="728.0" y="662.0" width="10.0" height="21.0" fill="#cfc5bd"/><rect x="727.4" y="686.4" width="11.2" height="17.2" fill="#e8e3df"/><rect x="728.0" y="687.0" width="4.4" height="7.4" fill="#d5cbc3"/><rect x="728.0" y="695.6" width="4.4" height="7.4" fill="#dbd2cb"/><rect x="733.6" y="695.6" width="4.4" height="7.4" fill="#cfc5bd"/><rect x="727.4" y="706.4" width="11.2" height="17.2" fill="#eddfdd"/><rect x="728.0" y="707.0" width="10.0" height="7.4" fill="#cfc5bd"/><rect x="728.0" y="715.6" width="10.0" height="7.4" fill="#dbd2cb"/><rect x="346.4" y="263.4" width="10.2" height="15.2" fill="#eddfdd"/><rect x="347.0" y="264.0" width="3.9" height="6.4" fill="#d9d0c9"/><rect x="347.0" y="271.6" width="3.9" height="6.4" fill="#d9d0c9"/><rect x="352.1" y="264.0" width="3.9" height="6.4" fill="#dbd2cb"/><rect x="352.1" y="271.6" width="3.9" height="6.4" fill="#d9d0c9"/><rect x="346.4" y="281.4" width="10.2" height="13.2" fill="#e6e2de"/><rect x="346.4" y="297.4" width="10.2" height="13.2" fill="#e8e3df"/><rect x="347.0" y="298.0" width="3.9" height="12.0" fill="#cfc5bd"/><rect x="346.4" y="313.4" width="10.2" height="15.2" fill="#e8e3df"/><rect x="346.4" y="331.4" width="10.2" height="13.2" fill="#e8e3df"/><rect x="347.0" y="332.0" width="9.0" height="12.0" fill="#d9d0c9"/><rect x="346.4" y="347.4" width="10.2" height="18.2" fill="#e6e2de"/><rect x="346.4" y="368.4" width="10.2" height="10.2" fill="#e6e2de"/><rect x="347.0" y="369.0" width="3.9" height="9.0" fill="#d5cbc3"/><rect x="352.1" y="369.0" width="3.9" height="9.0" fill="#d9d0c9"/><rect x="346.4" y="381.4" width="10.2" height="10.2" fill="#e8e3df"/><rect x="347.0" y="382.0" width="3.9" height="9.0" fill="#d9d0c9"/><rect x="352.1" y="382.0" width="3.9" height="9.0" fill="#d9d0c9"/><rect x="346.4" y="394.4" width="10.2" height="14.2" fill="#e6e2de"/><rect x="347.0" y="395.0" width="3.9" height="13.0" fill="#d5cbc3"/><rect x="352.1" y="395.0" width="3.9" height="13.0" fill="#d9d0c9"/><rect x="346.4" y="411.4" width="10.2" height="12.2" fill="#eddfdd"/><rect x="347.0" y="412.0" width="3.9" height="4.9" fill="#dbd2cb"/><rect x="347.0" y="418.1" width="3.9" height="4.9" fill="#d9d0c9"/><rect x="352.1" y="412.0" width="3.9" height="4.9" fill="#cfc5bd"/><rect x="346.4" y="426.4" width="10.2" height="12.2" fill="#e8e3df"/><rect x="359.4" y="263.4" width="9.2" height="15.2" fill="#eddfdd"/><rect x="359.4" y="281.4" width="9.2" height="13.2" fill="#e8e3df"/><rect x="360.0" y="282.0" width="8.0" height="12.0" fill="#d9d0c9"/><rect x="359.4" y="297.4" width="9.2" height="13.2" fill="#e9e1dd"/><rect x="359.4" y="313.4" width="9.2" height="15.2" fill="#e9e1dd"/><rect x="360.0" y="314.0" width="8.0" height="6.4" fill="#d5cbc3"/><rect x="360.0" y="321.6" width="8.0" height="6.4" fill="#d9d0c9"/><rect x="359.4" y="331.4" width="9.2" height="13.2" fill="#e9e1dd"/><rect x="360.0" y="332.0" width="8.0" height="5.4" fill="#d5cbc3"/><rect x="359.4" y="347.4" width="9.2" height="18.2" fill="#e9e1dd"/><rect x="359.4" y="368.4" width="9.2" height="10.2" fill="#e9e1dd"/><rect x="360.0" y="369.0" width="8.0" height="9.0" fill="#d5cbc3"/><rect x="359.4" y="381.4" width="9.2" height="10.2" fill="#eddfdd"/><rect x="359.4" y="394.4" width="9.2" height="14.2" fill="#e9e1dd"/><rect x="359.4" y="411.4" width="9.2" height="12.2" fill="#e6e2de"/><rect x="359.4" y="426.4" width="9.2" height="12.2" fill="#e8e3df"/><rect x="360.0" y="427.0" width="8.0" height="11.0" fill="#d9d0c9"/><rect x="371.4" y="263.4" width="10.2" height="15.2" fill="#e9e1dd"/><rect x="371.4" y="281.4" width="10.2" height="13.2" fill="#e8e3df"/><rect x="372.0" y="282.0" width="3.9" height="12.0" fill="#cfc5bd"/><rect x="377.1" y="282.0" width="3.9" height="12.0" fill="#cfc5bd"/><rect x="371.4" y="297.4" width="10.2" height="13.2" fill="#e6e2de"/><rect x="372.0" y="298.0" width="9.0" height="12.0" fill="#d9d0c9"/><rect x="371.4" y="313.4" width="10.2" height="15.2" fill="#e8e3df"/><rect x="372.0" y="314.0" width="3.9" height="6.4" fill="#cfc5bd"/><rect x="372.0" y="321.6" width="3.9" height="6.4" fill="#d9d0c9"/><rect x="377.1" y="314.0" width="3.9" height="6.4" fill="#cfc5bd"/><rect x="377.1" y="321.6" width="3.9" height="6.4" fill="#d9d0c9"/><rect x="371.4" y="331.4" width="10.2" height="13.2" fill="#eddfdd"/><rect x="372.0" y="332.0" width="3.9" height="12.0" fill="#dbd2cb"/><rect x="377.1" y="332.0" width="3.9" height="12.0" fill="#d9d0c9"/><rect x="371.4" y="347.4" width="10.2" height="18.2" fill="#e6e2de"/><rect x="372.0" y="348.0" width="3.9" height="17.0" fill="#dbd2cb"/><rect x="377.1" y="348.0" width="3.9" height="17.0" fill="#dbd2cb"/><rect x="371.4" y="368.4" width="10.2" height="10.2" fill="#e8e3df"/><rect x="372.0" y="369.0" width="9.0" height="9.0" fill="#dbd2cb"/><rect x="371.4" y="381.4" width="10.2" height="10.2" fill="#eddfdd"/><rect x="377.1" y="382.0" width="3.9" height="9.0" fill="#d5cbc3"/><rect x="371.4" y="394.4" width="10.2" height="14.2" fill="#e9e1dd"/><rect x="372.0" y="395.0" width="3.9" height="5.9" fill="#cfc5bd"/><rect x="372.0" y="402.1" width="3.9" height="5.9" fill="#d9d0c9"/><rect x="377.1" y="395.0" width="3.9" height="5.9" fill="#d5cbc3"/><rect x="377.1" y="402.1" width="3.9" height="5.9" fill="#d5cbc3"/><rect x="371.4" y="411.4" width="10.2" height="12.2" fill="#e6e2de"/><rect x="371.4" y="426.4" width="10.2" height="12.2" fill="#e8e3df"/><rect x="372.0" y="427.0" width="3.9" height="4.9" fill="#dbd2cb"/><rect x="372.0" y="433.1" width="3.9" height="4.9" fill="#cfc5bd"/><rect x="377.1" y="427.0" width="3.9" height="4.9" fill="#dbd2cb"/><rect x="377.1" y="433.1" width="3.9" height="4.9" fill="#cfc5bd"/><rect x="384.4" y="263.4" width="10.2" height="15.2" fill="#eddfdd"/><rect x="385.0" y="264.0" width="9.0" height="14.0" fill="#d9d0c9"/><rect x="384.4" y="281.4" width="10.2" height="13.2" fill="#e9e1dd"/><rect x="385.0" y="282.0" width="3.9" height="12.0" fill="#d9d0c9"/><rect x="384.4" y="297.4" width="10.2" height="13.2" fill="#e6e2de"/><rect x="385.0" y="298.0" width="9.0" height="5.4" fill="#d5cbc3"/><rect x="385.0" y="304.6" width="9.0" height="5.4" fill="#dbd2cb"/><rect x="384.4" y="313.4" width="10.2" height="15.2" fill="#eddfdd"/><rect x="385.0" y="314.0" width="9.0" height="6.4" fill="#cfc5bd"/><rect x="385.0" y="321.6" width="9.0" height="6.4" fill="#dbd2cb"/><rect x="384.4" y="331.4" width="10.2" height="13.2" fill="#eddfdd"/><rect x="385.0" y="332.0" width="9.0" height="12.0" fill="#d9d0c9"/><rect x="384.4" y="347.4" width="10.2" height="18.2" fill="#eddfdd"/><rect x="385.0" y="348.0" width="3.9" height="17.0" fill="#d9d0c9"/><rect x="390.1" y="348.0" width="3.9" height="17.0" fill="#dbd2cb"/><rect x="384.4" y="368.4" width="10.2" height="10.2" fill="#e6e2de"/><rect x="385.0" y="369.0" width="3.9" height="9.0" fill="#dbd2cb"/><rect x="390.1" y="369.0" width="3.9" height="9.0" fill="#d5cbc3"/><rect x="384.4" y="381.4" width="10.2" height="10.2" fill="#e9e1dd"/><rect x="385.0" y="382.0" width="9.0" height="9.0" fill="#d9d0c9"/><rect x="384.4" y="394.4" width="10.2" height="14.2" fill="#e6e2de"/><rect x="385.0" y="395.0" width="3.9" height="13.0" fill="#d9d0c9"/><rect x="390.1" y="395.0" width="3.9" height="13.0" fill="#d5cbc3"/><rect x="384.4" y="411.4" width="10.2" height="12.2" fill="#e6e2de"/><rect x="385.0" y="412.0" width="3.9" height="11.0" fill="#d9d0c9"/><rect x="390.1" y="412.0" width="3.9" height="11.0" fill="#d5cbc3"/><rect x="384.4" y="426.4" width="10.2" height="12.2" fill="#e9e1dd"/><rect x="385.0" y="427.0" width="3.9" height="11.0" fill="#dbd2cb"/><rect x="390.1" y="427.0" width="3.9" height="11.0" fill="#d5cbc3"/><rect x="397.4" y="263.4" width="13.2" height="15.2" fill="#e9e1dd"/><rect x="398.0" y="264.0" width="12.0" height="14.0" fill="#d9d0c9"/><rect x="397.4" y="281.4" width="13.2" height="13.2" fill="#e8e3df"/><rect x="398.0" y="282.0" width="12.0" height="12.0" fill="#d9d0c9"/><rect x="397.4" y="297.4" width="13.2" height="13.2" fill="#e6e2de"/><rect x="398.0" y="298.0" width="5.4" height="5.4" fill="#cfc5bd"/><rect x="404.6" y="298.0" width="5.4" height="5.4" fill="#d9d0c9"/><rect x="404.6" y="304.6" width="5.4" height="5.4" fill="#d9d0c9"/><rect x="397.4" y="313.4" width="13.2" height="15.2" fill="#eddfdd"/><rect x="398.0" y="314.0" width="12.0" height="6.4" fill="#dbd2cb"/><rect x="397.4" y="331.4" width="13.2" height="13.2" fill="#e6e2de"/><rect x="398.0" y="332.0" width="12.0" height="12.0" fill="#d9d0c9"/><rect x="397.4" y="347.4" width="13.2" height="18.2" fill="#eddfdd"/><rect x="397.4" y="368.4" width="13.2" height="10.2" fill="#e6e2de"/><rect x="398.0" y="369.0" width="12.0" height="9.0" fill="#cfc5bd"/><rect x="397.4" y="381.4" width="13.2" height="10.2" fill="#eddfdd"/><rect x="398.0" y="382.0" width="12.0" height="9.0" fill="#d9d0c9"/><rect x="397.4" y="394.4" width="13.2" height="14.2" fill="#e9e1dd"/><rect x="398.0" y="395.0" width="12.0" height="13.0" fill="#d9d0c9"/><rect x="397.4" y="411.4" width="13.2" height="12.2" fill="#e9e1dd"/><rect x="398.0" y="412.0" width="12.0" height="11.0" fill="#dbd2cb"/><rect x="397.4" y="426.4" width="13.2" height="12.2" fill="#e6e2de"/><rect x="413.4" y="263.4" width="12.2" height="15.2" fill="#e6e2de"/><rect x="414.0" y="264.0" width="11.0" height="6.4" fill="#d9d0c9"/><rect x="414.0" y="271.6" width="11.0" height="6.4" fill="#d9d0c9"/><rect x="413.4" y="281.4" width="12.2" height="13.2" fill="#e9e1dd"/><rect x="414.0" y="282.0" width="4.9" height="12.0" fill="#d9d0c9"/><rect x="420.1" y="282.0" width="4.9" height="12.0" fill="#d9d0c9"/><rect x="413.4" y="297.4" width="12.2" height="13.2" fill="#eddfdd"/><rect x="414.0" y="298.0" width="11.0" height="5.4" fill="#d9d0c9"/><rect x="414.0" y="304.6" width="11.0" height="5.4" fill="#d9d0c9"/><rect x="413.4" y="313.4" width="12.2" height="15.2" fill="#e6e2de"/><rect x="414.0" y="314.0" width="4.9" height="6.4" fill="#d9d0c9"/><rect x="414.0" y="321.6" width="4.9" height="6.4" fill="#d9d0c9"/><rect x="420.1" y="321.6" width="4.9" height="6.4" fill="#cfc5bd"/><rect x="413.4" y="331.4" width="12.2" height="13.2" fill="#e8e3df"/><rect x="414.0" y="332.0" width="4.9" height="5.4" fill="#d9d0c9"/><rect x="420.1" y="332.0" width="4.9" height="5.4" fill="#d9d0c9"/><rect x="420.1" y="338.6" width="4.9" height="5.4" fill="#d5cbc3"/><rect x="413.4" y="347.4" width="12.2" height="18.2" fill="#e9e1dd"/><rect x="414.0" y="348.0" width="4.9" height="7.9" fill="#dbd2cb"/><rect x="414.0" y="357.1" width="4.9" height="7.9" fill="#d9d0c9"/><rect x="420.1" y="357.1" width="4.9" height="7.9" fill="#d5cbc3"/><rect x="413.4" y="368.4" width="12.2" height="10.2" fill="#e8e3df"/><rect x="414.0" y="369.0" width="4.9" height="9.0" fill="#d9d0c9"/><rect x="420.1" y="369.0" width="4.9" height="9.0" fill="#d5cbc3"/><rect x="413.4" y="381.4" width="12.2" height="10.2" fill="#e6e2de"/><rect x="414.0" y="382.0" width="11.0" height="9.0" fill="#d9d0c9"/><rect x="413.4" y="394.4" width="12.2" height="14.2" fill="#e6e2de"/><rect x="414.0" y="395.0" width="11.0" height="13.0" fill="#d5cbc3"/><rect x="413.4" y="411.4" width="12.2" height="12.2" fill="#e9e1dd"/><rect x="414.0" y="412.0" width="4.9" height="11.0" fill="#d5cbc3"/><rect x="420.1" y="412.0" width="4.9" height="11.0" fill="#d9d0c9"/><rect x="413.4" y="426.4" width="12.2" height="12.2" fill="#e8e3df"/><rect x="428.4" y="263.4" width="10.2" height="15.2" fill="#e8e3df"/><rect x="428.4" y="281.4" width="10.2" height="13.2" fill="#e6e2de"/><rect x="429.0" y="282.0" width="3.9" height="12.0" fill="#d5cbc3"/><rect x="434.1" y="282.0" width="3.9" height="12.0" fill="#d9d0c9"/><rect x="428.4" y="297.4" width="10.2" height="13.2" fill="#eddfdd"/><rect x="429.0" y="298.0" width="3.9" height="12.0" fill="#d9d0c9"/><rect x="434.1" y="298.0" width="3.9" height="12.0" fill="#d5cbc3"/><rect x="428.4" y="313.4" width="10.2" height="15.2" fill="#e9e1dd"/><rect x="429.0" y="314.0" width="9.0" height="6.4" fill="#cfc5bd"/><rect x="429.0" y="321.6" width="9.0" height="6.4" fill="#dbd2cb"/><rect x="428.4" y="331.4" width="10.2" height="13.2" fill="#e9e1dd"/><rect x="429.0" y="332.0" width="3.9" height="12.0" fill="#d9d0c9"/><rect x="434.1" y="332.0" width="3.9" height="12.0" fill="#d9d0c9"/><rect x="428.4" y="347.4" width="10.2" height="18.2" fill="#e8e3df"/><rect x="429.0" y="348.0" width="3.9" height="7.9" fill="#d5cbc3"/><rect x="429.0" y="357.1" width="3.9" height="7.9" fill="#d9d0c9"/><rect x="434.1" y="348.0" width="3.9" height="7.9" fill="#d9d0c9"/><rect x="428.4" y="368.4" width="10.2" height="10.2" fill="#eddfdd"/><rect x="429.0" y="369.0" width="3.9" height="9.0" fill="#d9d0c9"/><rect x="434.1" y="369.0" width="3.9" height="9.0" fill="#d9d0c9"/><rect x="428.4" y="381.4" width="10.2" height="10.2" fill="#eddfdd"/><rect x="429.0" y="382.0" width="3.9" height="9.0" fill="#cfc5bd"/><rect x="434.1" y="382.0" width="3.9" height="9.0" fill="#d5cbc3"/><rect x="428.4" y="394.4" width="10.2" height="14.2" fill="#e6e2de"/><rect x="429.0" y="395.0" width="9.0" height="13.0" fill="#d5cbc3"/><rect x="428.4" y="411.4" width="10.2" height="12.2" fill="#e6e2de"/><rect x="429.0" y="412.0" width="9.0" height="11.0" fill="#cfc5bd"/><rect x="428.4" y="426.4" width="10.2" height="12.2" fill="#eddfdd"/><rect x="429.0" y="427.0" width="9.0" height="11.0" fill="#d9d0c9"/><rect x="441.4" y="263.4" width="12.2" height="15.2" fill="#e8e3df"/><rect x="442.0" y="264.0" width="11.0" height="14.0" fill="#cfc5bd"/><rect x="441.4" y="281.4" width="12.2" height="13.2" fill="#e8e3df"/><rect x="442.0" y="282.0" width="11.0" height="5.4" fill="#d9d0c9"/><rect x="442.0" y="288.6" width="11.0" height="5.4" fill="#d9d0c9"/><rect x="441.4" y="297.4" width="12.2" height="13.2" fill="#e9e1dd"/><rect x="442.0" y="298.0" width="4.9" height="5.4" fill="#d9d0c9"/><rect x="442.0" y="304.6" width="4.9" height="5.4" fill="#cfc5bd"/><rect x="448.1" y="298.0" width="4.9" height="5.4" fill="#d9d0c9"/><rect x="441.4" y="313.4" width="12.2" height="15.2" fill="#e6e2de"/><rect x="441.4" y="331.4" width="12.2" height="13.2" fill="#e9e1dd"/><rect x="441.4" y="347.4" width="12.2" height="18.2" fill="#e9e1dd"/><rect x="442.0" y="348.0" width="4.9" height="7.9" fill="#cfc5bd"/><rect x="442.0" y="357.1" width="4.9" height="7.9" fill="#dbd2cb"/><rect x="448.1" y="348.0" width="4.9" height="7.9" fill="#d9d0c9"/><rect x="448.1" y="357.1" width="4.9" height="7.9" fill="#d9d0c9"/><rect x="441.4" y="368.4" width="12.2" height="10.2" fill="#e6e2de"/><rect x="442.0" y="369.0" width="4.9" height="9.0" fill="#d9d0c9"/><rect x="448.1" y="369.0" width="4.9" height="9.0" fill="#d5cbc3"/><rect x="441.4" y="381.4" width="12.2" height="10.2" fill="#e9e1dd"/><rect x="441.4" y="394.4" width="12.2" height="14.2" fill="#e6e2de"/><rect x="442.0" y="395.0" width="11.0" height="5.9" fill="#cfc5bd"/><rect x="442.0" y="402.1" width="11.0" height="5.9" fill="#dbd2cb"/><rect x="441.4" y="411.4" width="12.2" height="12.2" fill="#e6e2de"/><rect x="441.4" y="426.4" width="12.2" height="12.2" fill="#e9e1dd"/><rect x="442.0" y="427.0" width="11.0" height="11.0" fill="#d9d0c9"/><rect x="456.4" y="263.4" width="10.2" height="15.2" fill="#e8e3df"/><rect x="457.0" y="264.0" width="9.0" height="14.0" fill="#dbd2cb"/><rect x="456.4" y="281.4" width="10.2" height="13.2" fill="#eddfdd"/><rect x="457.0" y="282.0" width="3.9" height="12.0" fill="#d9d0c9"/><rect x="462.1" y="282.0" width="3.9" height="12.0" fill="#dbd2cb"/><rect x="456.4" y="297.4" width="10.2" height="13.2" fill="#eddfdd"/><rect x="457.0" y="298.0" width="3.9" height="12.0" fill="#d9d0c9"/><rect x="462.1" y="298.0" width="3.9" height="12.0" fill="#d9d0c9"/><rect x="456.4" y="313.4" width="10.2" height="15.2" fill="#e8e3df"/><rect x="457.0" y="314.0" width="9.0" height="6.4" fill="#dbd2cb"/><rect x="457.0" y="321.6" width="9.0" height="6.4" fill="#d9d0c9"/><rect x="456.4" y="331.4" width="10.2" height="13.2" fill="#e8e3df"/><rect x="457.0" y="332.0" width="9.0" height="12.0" fill="#cfc5bd"/><rect x="456.4" y="347.4" width="10.2" height="18.2" fill="#e9e1dd"/><rect x="456.4" y="368.4" width="10.2" height="10.2" fill="#e9e1dd"/><rect x="457.0" y="369.0" width="3.9" height="9.0" fill="#cfc5bd"/><rect x="462.1" y="369.0" width="3.9" height="9.0" fill="#d9d0c9"/><rect x="456.4" y="381.4" width="10.2" height="10.2" fill="#eddfdd"/><rect x="456.4" y="394.4" width="10.2" height="14.2" fill="#eddfdd"/><rect x="457.0" y="402.1" width="9.0" height="5.9" fill="#d5cbc3"/><rect x="456.4" y="411.4" width="10.2" height="12.2" fill="#eddfdd"/><rect x="457.0" y="418.1" width="3.9" height="4.9" fill="#d9d0c9"/><rect x="462.1" y="412.0" width="3.9" height="4.9" fill="#dbd2cb"/><rect x="462.1" y="418.1" width="3.9" height="4.9" fill="#d9d0c9"/><rect x="456.4" y="426.4" width="10.2" height="12.2" fill="#e9e1dd"/><rect x="469.4" y="263.4" width="11.2" height="15.2" fill="#e6e2de"/><rect x="469.4" y="281.4" width="11.2" height="13.2" fill="#e8e3df"/><rect x="470.0" y="282.0" width="10.0" height="12.0" fill="#d9d0c9"/><rect x="469.4" y="297.4" width="11.2" height="13.2" fill="#eddfdd"/><rect x="469.4" y="313.4" width="11.2" height="15.2" fill="#eddfdd"/><rect x="470.0" y="314.0" width="10.0" height="14.0" fill="#dbd2cb"/><rect x="469.4" y="331.4" width="11.2" height="13.2" fill="#e8e3df"/><rect x="470.0" y="332.0" width="4.4" height="12.0" fill="#d9d0c9"/><rect x="475.6" y="332.0" width="4.4" height="12.0" fill="#d9d0c9"/><rect x="469.4" y="347.4" width="11.2" height="18.2" fill="#e6e2de"/><rect x="470.0" y="348.0" width="4.4" height="7.9" fill="#d5cbc3"/><rect x="475.6" y="348.0" width="4.4" height="7.9" fill="#dbd2cb"/><rect x="475.6" y="357.1" width="4.4" height="7.9" fill="#d9d0c9"/><rect x="469.4" y="368.4" width="11.2" height="10.2" fill="#eddfdd"/><rect x="470.0" y="369.0" width="10.0" height="9.0" fill="#dbd2cb"/><rect x="469.4" y="381.4" width="11.2" height="10.2" fill="#e6e2de"/><rect x="475.6" y="382.0" width="4.4" height="9.0" fill="#cfc5bd"/><rect x="469.4" y="394.4" width="11.2" height="14.2" fill="#e6e2de"/><rect x="470.0" y="395.0" width="4.4" height="13.0" fill="#dbd2cb"/><rect x="475.6" y="395.0" width="4.4" height="13.0" fill="#d9d0c9"/><rect x="469.4" y="411.4" width="11.2" height="12.2" fill="#e8e3df"/><rect x="470.0" y="412.0" width="10.0" height="4.9" fill="#cfc5bd"/><rect x="470.0" y="418.1" width="10.0" height="4.9" fill="#cfc5bd"/><rect x="469.4" y="426.4" width="11.2" height="12.2" fill="#e8e3df"/><rect x="470.0" y="427.0" width="10.0" height="11.0" fill="#dbd2cb"/><rect x="483.4" y="263.4" width="11.2" height="15.2" fill="#e6e2de"/><rect x="484.0" y="271.6" width="10.0" height="6.4" fill="#cfc5bd"/><rect x="483.4" y="281.4" width="11.2" height="13.2" fill="#eddfdd"/><rect x="484.0" y="282.0" width="10.0" height="12.0" fill="#d9d0c9"/><rect x="483.4" y="297.4" width="11.2" height="13.2" fill="#eddfdd"/><rect x="484.0" y="298.0" width="4.4" height="12.0" fill="#d9d0c9"/><rect x="489.6" y="298.0" width="4.4" height="12.0" fill="#d9d0c9"/><rect x="483.4" y="313.4" width="11.2" height="15.2" fill="#e6e2de"/><rect x="484.0" y="314.0" width="4.4" height="14.0" fill="#d9d0c9"/><rect x="489.6" y="314.0" width="4.4" height="14.0" fill="#dbd2cb"/><rect x="483.4" y="331.4" width="11.2" height="13.2" fill="#e9e1dd"/><rect x="484.0" y="332.0" width="10.0" height="12.0" fill="#d5cbc3"/><rect x="483.4" y="347.4" width="11.2" height="18.2" fill="#e9e1dd"/><rect x="484.0" y="348.0" width="4.4" height="17.0" fill="#d9d0c9"/><rect x="489.6" y="348.0" width="4.4" height="17.0" fill="#d5cbc3"/><rect x="483.4" y="368.4" width="11.2" height="10.2" fill="#e9e1dd"/><rect x="489.6" y="369.0" width="4.4" height="9.0" fill="#d9d0c9"/><rect x="483.4" y="381.4" width="11.2" height="10.2" fill="#eddfdd"/><rect x="484.0" y="382.0" width="4.4" height="9.0" fill="#d9d0c9"/><rect x="489.6" y="382.0" width="4.4" height="9.0" fill="#d5cbc3"/><rect x="483.4" y="394.4" width="11.2" height="14.2" fill="#e6e2de"/><rect x="484.0" y="395.0" width="4.4" height="5.9" fill="#d5cbc3"/><rect x="484.0" y="402.1" width="4.4" height="5.9" fill="#d9d0c9"/><rect x="489.6" y="395.0" width="4.4" height="5.9" fill="#d5cbc3"/><rect x="489.6" y="402.1" width="4.4" height="5.9" fill="#cfc5bd"/><rect x="483.4" y="411.4" width="11.2" height="12.2" fill="#e9e1dd"/><rect x="483.4" y="426.4" width="11.2" height="12.2" fill="#e9e1dd"/><rect x="484.0" y="427.0" width="4.4" height="11.0" fill="#d9d0c9"/><rect x="489.6" y="427.0" width="4.4" height="11.0" fill="#d5cbc3"/><rect x="497.4" y="263.4" width="11.2" height="15.2" fill="#e8e3df"/><rect x="498.0" y="264.0" width="4.4" height="14.0" fill="#dbd2cb"/><rect x="503.6" y="264.0" width="4.4" height="14.0" fill="#dbd2cb"/><rect x="497.4" y="281.4" width="11.2" height="13.2" fill="#e8e3df"/><rect x="498.0" y="282.0" width="4.4" height="12.0" fill="#dbd2cb"/><rect x="503.6" y="282.0" width="4.4" height="12.0" fill="#d5cbc3"/><rect x="497.4" y="297.4" width="11.2" height="13.2" fill="#e6e2de"/><rect x="498.0" y="298.0" width="10.0" height="12.0" fill="#d9d0c9"/><rect x="497.4" y="313.4" width="11.2" height="15.2" fill="#e8e3df"/><rect x="497.4" y="331.4" width="11.2" height="13.2" fill="#eddfdd"/><rect x="497.4" y="347.4" width="11.2" height="18.2" fill="#e6e2de"/><rect x="498.0" y="348.0" width="10.0" height="7.9" fill="#d9d0c9"/><rect x="498.0" y="357.1" width="10.0" height="7.9" fill="#d9d0c9"/><rect x="497.4" y="368.4" width="11.2" height="10.2" fill="#e6e2de"/><rect x="498.0" y="369.0" width="4.4" height="9.0" fill="#d9d0c9"/><rect x="503.6" y="369.0" width="4.4" height="9.0" fill="#cfc5bd"/><rect x="497.4" y="381.4" width="11.2" height="10.2" fill="#eddfdd"/><rect x="497.4" y="394.4" width="11.2" height="14.2" fill="#e9e1dd"/><rect x="497.4" y="411.4" width="11.2" height="12.2" fill="#e6e2de"/><rect x="498.0" y="412.0" width="10.0" height="11.0" fill="#dbd2cb"/><rect x="497.4" y="426.4" width="11.2" height="12.2" fill="#e9e1dd"/><rect x="346.4" y="441.4" width="10.2" height="15.2" fill="#e8e3df"/><rect x="347.0" y="442.0" width="3.9" height="6.4" fill="#dbd2cb"/><rect x="352.1" y="442.0" width="3.9" height="6.4" fill="#dbd2cb"/><rect x="352.1" y="449.6" width="3.9" height="6.4" fill="#d5cbc3"/><rect x="346.4" y="459.4" width="10.2" height="16.2" fill="#e6e2de"/><rect x="347.0" y="460.0" width="9.0" height="15.0" fill="#d9d0c9"/><rect x="346.4" y="478.4" width="10.2" height="15.2" fill="#eddfdd"/><rect x="347.0" y="479.0" width="9.0" height="6.4" fill="#cfc5bd"/><rect x="347.0" y="486.6" width="9.0" height="6.4" fill="#dbd2cb"/><rect x="346.4" y="496.4" width="10.2" height="14.2" fill="#e6e2de"/><rect x="347.0" y="497.0" width="3.9" height="13.0" fill="#d9d0c9"/><rect x="352.1" y="497.0" width="3.9" height="13.0" fill="#dbd2cb"/><rect x="346.4" y="513.4" width="10.2" height="15.2" fill="#e8e3df"/><rect x="347.0" y="514.0" width="3.9" height="6.4" fill="#d9d0c9"/><rect x="347.0" y="521.6" width="3.9" height="6.4" fill="#cfc5bd"/><rect x="352.1" y="514.0" width="3.9" height="6.4" fill="#d5cbc3"/><rect x="352.1" y="521.6" width="3.9" height="6.4" fill="#d5cbc3"/><rect x="346.4" y="531.4" width="10.2" height="15.2" fill="#e6e2de"/><rect x="347.0" y="532.0" width="9.0" height="14.0" fill="#d9d0c9"/><rect x="346.4" y="549.4" width="10.2" height="15.2" fill="#e6e2de"/><rect x="347.0" y="550.0" width="3.9" height="14.0" fill="#cfc5bd"/><rect x="346.4" y="567.4" width="10.2" height="13.2" fill="#e9e1dd"/><rect x="347.0" y="568.0" width="9.0" height="12.0" fill="#d9d0c9"/><rect x="346.4" y="583.4" width="10.2" height="15.2" fill="#eddfdd"/><rect x="347.0" y="584.0" width="9.0" height="14.0" fill="#dbd2cb"/><rect x="346.4" y="601.4" width="10.2" height="15.2" fill="#e8e3df"/><rect x="347.0" y="602.0" width="9.0" height="6.4" fill="#d5cbc3"/><rect x="347.0" y="609.6" width="9.0" height="6.4" fill="#d9d0c9"/><rect x="346.4" y="619.4" width="10.2" height="15.2" fill="#e9e1dd"/><rect x="347.0" y="620.0" width="9.0" height="6.4" fill="#d5cbc3"/><rect x="347.0" y="627.6" width="9.0" height="6.4" fill="#cfc5bd"/><rect x="346.4" y="637.4" width="10.2" height="16.2" fill="#eddfdd"/><rect x="347.0" y="638.0" width="3.9" height="6.9" fill="#d9d0c9"/><rect x="347.0" y="646.1" width="3.9" height="6.9" fill="#cfc5bd"/><rect x="352.1" y="638.0" width="3.9" height="6.9" fill="#d9d0c9"/><rect x="352.1" y="646.1" width="3.9" height="6.9" fill="#cfc5bd"/><rect x="346.4" y="656.4" width="10.2" height="17.2" fill="#eddfdd"/><rect x="346.4" y="676.4" width="10.2" height="17.2" fill="#e8e3df"/><rect x="347.0" y="677.0" width="3.9" height="16.0" fill="#d9d0c9"/><rect x="352.1" y="677.0" width="3.9" height="16.0" fill="#dbd2cb"/><rect x="346.4" y="696.4" width="10.2" height="22.2" fill="#e9e1dd"/><rect x="347.0" y="697.0" width="3.9" height="9.9" fill="#d5cbc3"/><rect x="352.1" y="697.0" width="3.9" height="9.9" fill="#dbd2cb"/><rect x="352.1" y="708.1" width="3.9" height="9.9" fill="#d9d0c9"/><rect x="359.4" y="441.4" width="9.2" height="15.2" fill="#e8e3df"/><rect x="359.4" y="459.4" width="9.2" height="16.2" fill="#eddfdd"/><rect x="359.4" y="478.4" width="9.2" height="15.2" fill="#e8e3df"/><rect x="360.0" y="479.0" width="8.0" height="14.0" fill="#dbd2cb"/><rect x="359.4" y="496.4" width="9.2" height="14.2" fill="#eddfdd"/><rect x="360.0" y="497.0" width="8.0" height="5.9" fill="#cfc5bd"/><rect x="360.0" y="504.1" width="8.0" height="5.9" fill="#d5cbc3"/><rect x="359.4" y="513.4" width="9.2" height="15.2" fill="#e8e3df"/><rect x="360.0" y="514.0" width="8.0" height="14.0" fill="#d5cbc3"/><rect x="359.4" y="531.4" width="9.2" height="15.2" fill="#eddfdd"/><rect x="360.0" y="532.0" width="8.0" height="14.0" fill="#cfc5bd"/><rect x="359.4" y="549.4" width="9.2" height="15.2" fill="#e6e2de"/><rect x="360.0" y="550.0" width="8.0" height="14.0" fill="#dbd2cb"/><rect x="359.4" y="567.4" width="9.2" height="13.2" fill="#e8e3df"/><rect x="360.0" y="568.0" width="8.0" height="12.0" fill="#d9d0c9"/><rect x="359.4" y="583.4" width="9.2" height="15.2" fill="#e6e2de"/><rect x="359.4" y="601.4" width="9.2" height="15.2" fill="#e8e3df"/><rect x="359.4" y="619.4" width="9.2" height="15.2" fill="#e6e2de"/><rect x="359.4" y="637.4" width="9.2" height="16.2" fill="#e8e3df"/><rect x="360.0" y="638.0" width="8.0" height="15.0" fill="#d5cbc3"/><rect x="359.4" y="656.4" width="9.2" height="17.2" fill="#e8e3df"/><rect x="359.4" y="676.4" width="9.2" height="17.2" fill="#e6e2de"/><rect x="360.0" y="677.0" width="8.0" height="16.0" fill="#d9d0c9"/><rect x="359.4" y="696.4" width="9.2" height="22.2" fill="#e8e3df"/><rect x="360.0" y="697.0" width="8.0" height="21.0" fill="#cfc5bd"/><rect x="371.4" y="441.4" width="10.2" height="15.2" fill="#e9e1dd"/><rect x="371.4" y="459.4" width="10.2" height="16.2" fill="#e9e1dd"/><rect x="372.0" y="460.0" width="9.0" height="15.0" fill="#dbd2cb"/><rect x="371.4" y="478.4" width="10.2" height="15.2" fill="#e9e1dd"/><rect x="372.0" y="479.0" width="9.0" height="14.0" fill="#dbd2cb"/><rect x="371.4" y="496.4" width="10.2" height="14.2" fill="#e6e2de"/><rect x="377.1" y="497.0" width="3.9" height="13.0" fill="#dbd2cb"/><rect x="371.4" y="513.4" width="10.2" height="15.2" fill="#e9e1dd"/><rect x="372.0" y="514.0" width="9.0" height="14.0" fill="#d9d0c9"/><rect x="371.4" y="531.4" width="10.2" height="15.2" fill="#e6e2de"/><rect x="372.0" y="532.0" width="9.0" height="14.0" fill="#cfc5bd"/><rect x="371.4" y="549.4" width="10.2" height="15.2" fill="#e8e3df"/><rect x="371.4" y="567.4" width="10.2" height="13.2" fill="#eddfdd"/><rect x="372.0" y="568.0" width="9.0" height="12.0" fill="#d9d0c9"/><rect x="371.4" y="583.4" width="10.2" height="15.2" fill="#e9e1dd"/><rect x="372.0" y="584.0" width="3.9" height="14.0" fill="#d5cbc3"/><rect x="377.1" y="584.0" width="3.9" height="14.0" fill="#cfc5bd"/><rect x="371.4" y="601.4" width="10.2" height="15.2" fill="#e8e3df"/><rect x="371.4" y="619.4" width="10.2" height="15.2" fill="#e8e3df"/><rect x="371.4" y="637.4" width="10.2" height="16.2" fill="#eddfdd"/><rect x="371.4" y="656.4" width="10.2" height="17.2" fill="#e6e2de"/><rect x="372.0" y="657.0" width="3.9" height="16.0" fill="#dbd2cb"/><rect x="377.1" y="657.0" width="3.9" height="16.0" fill="#cfc5bd"/><rect x="371.4" y="676.4" width="10.2" height="17.2" fill="#e8e3df"/><rect x="372.0" y="677.0" width="3.9" height="7.4" fill="#dbd2cb"/><rect x="372.0" y="685.6" width="3.9" height="7.4" fill="#cfc5bd"/><rect x="377.1" y="677.0" width="3.9" height="7.4" fill="#d9d0c9"/><rect x="377.1" y="685.6" width="3.9" height="7.4" fill="#d9d0c9"/><rect x="371.4" y="696.4" width="10.2" height="22.2" fill="#e8e3df"/><rect x="372.0" y="697.0" width="3.9" height="21.0" fill="#d9d0c9"/><rect x="377.1" y="697.0" width="3.9" height="21.0" fill="#cfc5bd"/><rect x="384.4" y="441.4" width="10.2" height="15.2" fill="#e9e1dd"/><rect x="385.0" y="442.0" width="3.9" height="14.0" fill="#d9d0c9"/><rect x="390.1" y="442.0" width="3.9" height="14.0" fill="#dbd2cb"/><rect x="384.4" y="459.4" width="10.2" height="16.2" fill="#e9e1dd"/><rect x="385.0" y="460.0" width="3.9" height="6.9" fill="#d9d0c9"/><rect x="385.0" y="468.1" width="3.9" height="6.9" fill="#d9d0c9"/><rect x="390.1" y="460.0" width="3.9" height="6.9" fill="#d9d0c9"/><rect x="390.1" y="468.1" width="3.9" height="6.9" fill="#d5cbc3"/><rect x="384.4" y="478.4" width="10.2" height="15.2" fill="#eddfdd"/><rect x="385.0" y="479.0" width="3.9" height="6.4" fill="#dbd2cb"/><rect x="385.0" y="486.6" width="3.9" height="6.4" fill="#d9d0c9"/><rect x="390.1" y="479.0" width="3.9" height="6.4" fill="#d5cbc3"/><rect x="390.1" y="486.6" width="3.9" height="6.4" fill="#d9d0c9"/><rect x="384.4" y="496.4" width="10.2" height="14.2" fill="#eddfdd"/><rect x="385.0" y="497.0" width="9.0" height="13.0" fill="#dbd2cb"/><rect x="384.4" y="513.4" width="10.2" height="15.2" fill="#e8e3df"/><rect x="385.0" y="514.0" width="3.9" height="6.4" fill="#d5cbc3"/><rect x="385.0" y="521.6" width="3.9" height="6.4" fill="#d9d0c9"/><rect x="390.1" y="514.0" width="3.9" height="6.4" fill="#d9d0c9"/><rect x="390.1" y="521.6" width="3.9" height="6.4" fill="#dbd2cb"/><rect x="384.4" y="531.4" width="10.2" height="15.2" fill="#eddfdd"/><rect x="385.0" y="532.0" width="9.0" height="14.0" fill="#d9d0c9"/><rect x="384.4" y="549.4" width="10.2" height="15.2" fill="#e8e3df"/><rect x="384.4" y="567.4" width="10.2" height="13.2" fill="#e9e1dd"/><rect x="384.4" y="583.4" width="10.2" height="15.2" fill="#e6e2de"/><rect x="385.0" y="584.0" width="9.0" height="6.4" fill="#d9d0c9"/><rect x="384.4" y="601.4" width="10.2" height="15.2" fill="#e8e3df"/><rect x="385.0" y="602.0" width="3.9" height="14.0" fill="#cfc5bd"/><rect x="390.1" y="602.0" width="3.9" height="14.0" fill="#d5cbc3"/><rect x="384.4" y="619.4" width="10.2" height="15.2" fill="#e6e2de"/><rect x="385.0" y="620.0" width="3.9" height="14.0" fill="#d9d0c9"/><rect x="390.1" y="620.0" width="3.9" height="14.0" fill="#cfc5bd"/><rect x="384.4" y="637.4" width="10.2" height="16.2" fill="#e9e1dd"/><rect x="385.0" y="638.0" width="9.0" height="15.0" fill="#d9d0c9"/><rect x="384.4" y="656.4" width="10.2" height="17.2" fill="#e8e3df"/><rect x="385.0" y="657.0" width="3.9" height="16.0" fill="#d5cbc3"/><rect x="390.1" y="657.0" width="3.9" height="16.0" fill="#cfc5bd"/><rect x="384.4" y="676.4" width="10.2" height="17.2" fill="#eddfdd"/><rect x="385.0" y="677.0" width="9.0" height="7.4" fill="#d9d0c9"/><rect x="385.0" y="685.6" width="9.0" height="7.4" fill="#dbd2cb"/><rect x="384.4" y="696.4" width="10.2" height="22.2" fill="#eddfdd"/><rect x="385.0" y="708.1" width="3.9" height="9.9" fill="#d9d0c9"/><rect x="390.1" y="697.0" width="3.9" height="9.9" fill="#d9d0c9"/><rect x="390.1" y="708.1" width="3.9" height="9.9" fill="#cfc5bd"/><rect x="397.4" y="441.4" width="13.2" height="15.2" fill="#e9e1dd"/><rect x="397.4" y="459.4" width="13.2" height="16.2" fill="#e9e1dd"/><rect x="398.0" y="460.0" width="12.0" height="6.9" fill="#d5cbc3"/><rect x="398.0" y="468.1" width="12.0" height="6.9" fill="#d9d0c9"/><rect x="397.4" y="478.4" width="13.2" height="15.2" fill="#e6e2de"/><rect x="398.0" y="479.0" width="12.0" height="6.4" fill="#d9d0c9"/><rect x="398.0" y="486.6" width="12.0" height="6.4" fill="#cfc5bd"/><rect x="397.4" y="496.4" width="13.2" height="14.2" fill="#eddfdd"/><rect x="397.4" y="513.4" width="13.2" height="15.2" fill="#eddfdd"/><rect x="398.0" y="521.6" width="5.4" height="6.4" fill="#dbd2cb"/><rect x="404.6" y="521.6" width="5.4" height="6.4" fill="#dbd2cb"/><rect x="397.4" y="531.4" width="13.2" height="15.2" fill="#e6e2de"/><rect x="398.0" y="532.0" width="12.0" height="6.4" fill="#cfc5bd"/><rect x="398.0" y="539.6" width="12.0" height="6.4" fill="#d9d0c9"/><rect x="397.4" y="549.4" width="13.2" height="15.2" fill="#e9e1dd"/><rect x="398.0" y="550.0" width="12.0" height="14.0" fill="#d5cbc3"/><rect x="397.4" y="567.4" width="13.2" height="13.2" fill="#e6e2de"/><rect x="398.0" y="568.0" width="12.0" height="5.4" fill="#dbd2cb"/><rect x="398.0" y="574.6" width="12.0" height="5.4" fill="#d9d0c9"/><rect x="397.4" y="583.4" width="13.2" height="15.2" fill="#e6e2de"/><rect x="398.0" y="584.0" width="5.4" height="14.0" fill="#dbd2cb"/><rect x="404.6" y="584.0" width="5.4" height="14.0" fill="#d9d0c9"/><rect x="397.4" y="601.4" width="13.2" height="15.2" fill="#eddfdd"/><rect x="397.4" y="619.4" width="13.2" height="15.2" fill="#e9e1dd"/><rect x="398.0" y="620.0" width="12.0" height="14.0" fill="#d9d0c9"/><rect x="397.4" y="637.4" width="13.2" height="16.2" fill="#eddfdd"/><rect x="397.4" y="656.4" width="13.2" height="17.2" fill="#e8e3df"/><rect x="398.0" y="657.0" width="5.4" height="16.0" fill="#dbd2cb"/><rect x="404.6" y="657.0" width="5.4" height="16.0" fill="#dbd2cb"/><rect x="397.4" y="676.4" width="13.2" height="17.2" fill="#e8e3df"/><rect x="397.4" y="696.4" width="13.2" height="22.2" fill="#e9e1dd"/><rect x="413.4" y="441.4" width="12.2" height="15.2" fill="#e8e3df"/><rect x="414.0" y="442.0" width="11.0" height="14.0" fill="#d9d0c9"/><rect x="413.4" y="459.4" width="12.2" height="16.2" fill="#e9e1dd"/><rect x="414.0" y="460.0" width="11.0" height="6.9" fill="#dbd2cb"/><rect x="414.0" y="468.1" width="11.0" height="6.9" fill="#dbd2cb"/><rect x="413.4" y="478.4" width="12.2" height="15.2" fill="#e8e3df"/><rect x="414.0" y="479.0" width="11.0" height="14.0" fill="#d5cbc3"/><rect x="413.4" y="496.4" width="12.2" height="14.2" fill="#eddfdd"/><rect x="413.4" y="513.4" width="12.2" height="15.2" fill="#e9e1dd"/><rect x="413.4" y="531.4" width="12.2" height="15.2" fill="#e9e1dd"/><rect x="414.0" y="532.0" width="4.9" height="14.0" fill="#d9d0c9"/><rect x="420.1" y="532.0" width="4.9" height="14.0" fill="#d9d0c9"/><rect x="413.4" y="549.4" width="12.2" height="15.2" fill="#e6e2de"/><rect x="414.0" y="550.0" width="4.9" height="14.0" fill="#d9d0c9"/><rect x="420.1" y="550.0" width="4.9" height="14.0" fill="#d9d0c9"/><rect x="413.4" y="567.4" width="12.2" height="13.2" fill="#e6e2de"/><rect x="413.4" y="583.4" width="12.2" height="15.2" fill="#e6e2de"/><rect x="414.0" y="584.0" width="4.9" height="14.0" fill="#d9d0c9"/><rect x="420.1" y="584.0" width="4.9" height="14.0" fill="#d9d0c9"/><rect x="413.4" y="601.4" width="12.2" height="15.2" fill="#e9e1dd"/><rect x="414.0" y="602.0" width="11.0" height="14.0" fill="#dbd2cb"/><rect x="413.4" y="619.4" width="12.2" height="15.2" fill="#e9e1dd"/><rect x="413.4" y="637.4" width="12.2" height="16.2" fill="#e6e2de"/><rect x="413.4" y="656.4" width="12.2" height="17.2" fill="#e8e3df"/><rect x="414.0" y="657.0" width="4.9" height="16.0" fill="#dbd2cb"/><rect x="420.1" y="657.0" width="4.9" height="16.0" fill="#d5cbc3"/><rect x="413.4" y="676.4" width="12.2" height="17.2" fill="#e9e1dd"/><rect x="414.0" y="677.0" width="11.0" height="16.0" fill="#d9d0c9"/><rect x="413.4" y="696.4" width="12.2" height="22.2" fill="#e8e3df"/><rect x="414.0" y="697.0" width="11.0" height="21.0" fill="#d5cbc3"/><rect x="428.4" y="441.4" width="10.2" height="9.2" fill="#ebe7e3"/><rect x="429.0" y="441.9" width="3.2" height="3.4" fill="#d9d0c9"/><rect x="433.5" y="441.9" width="4.5" height="3.4" fill="#d9d0c9"/><rect x="429.0" y="446.5" width="3.9" height="3.4" fill="#d9d0c9"/><rect x="428.4" y="453.4" width="10.2" height="9.2" fill="#ebe7e3"/><rect x="429.0" y="453.9" width="4.4" height="3.4" fill="#d9d0c9"/><rect x="429.0" y="458.5" width="3.1" height="3.4" fill="#d9d0c9"/><rect x="434.4" y="458.5" width="3.6" height="3.4" fill="#d9d0c9"/><rect x="428.4" y="465.4" width="10.2" height="9.2" fill="#ebe7e3"/><rect x="434.7" y="465.9" width="3.3" height="3.4" fill="#d9d0c9"/><rect x="429.0" y="470.5" width="4.0" height="3.4" fill="#d9d0c9"/><rect x="434.8" y="470.5" width="3.2" height="3.4" fill="#d9d0c9"/><rect x="428.4" y="477.4" width="10.2" height="9.2" fill="#ebe7e3"/><rect x="429.0" y="477.9" width="3.1" height="3.4" fill="#d9d0c9"/><rect x="433.7" y="477.9" width="4.3" height="3.4" fill="#d9d0c9"/><rect x="429.0" y="482.5" width="4.3" height="3.4" fill="#d9d0c9"/><rect x="434.4" y="482.5" width="3.6" height="3.4" fill="#d9d0c9"/><rect x="428.4" y="489.4" width="10.2" height="9.2" fill="#ebe7e3"/><rect x="429.0" y="489.9" width="3.0" height="3.4" fill="#d9d0c9"/><rect x="434.1" y="489.9" width="3.9" height="3.4" fill="#d9d0c9"/><rect x="429.0" y="494.5" width="4.5" height="3.4" fill="#d9d0c9"/><rect x="434.6" y="494.5" width="3.4" height="3.4" fill="#d9d0c9"/><rect x="428.4" y="501.4" width="10.2" height="9.2" fill="#ebe7e3"/><rect x="429.0" y="501.9" width="3.8" height="3.4" fill="#d9d0c9"/><rect x="434.1" y="501.9" width="3.9" height="3.4" fill="#d9d0c9"/><rect x="434.3" y="506.5" width="3.7" height="3.4" fill="#d9d0c9"/><rect x="428.4" y="513.4" width="10.2" height="9.2" fill="#ebe7e3"/><rect x="429.0" y="518.5" width="4.4" height="3.4" fill="#d9d0c9"/><rect x="434.4" y="518.5" width="3.6" height="3.4" fill="#d9d0c9"/><rect x="428.4" y="525.4" width="10.2" height="9.2" fill="#ebe7e3"/><rect x="429.0" y="525.9" width="3.3" height="3.4" fill="#d9d0c9"/><rect x="433.5" y="525.9" width="4.5" height="3.4" fill="#d9d0c9"/><rect x="429.0" y="530.5" width="3.0" height="3.4" fill="#d9d0c9"/><rect x="428.4" y="537.4" width="10.2" height="9.2" fill="#ebe7e3"/><rect x="434.0" y="537.9" width="4.0" height="3.4" fill="#d9d0c9"/><rect x="429.0" y="542.5" width="3.2" height="3.4" fill="#d9d0c9"/><rect x="434.8" y="542.5" width="3.2" height="3.4" fill="#d9d0c9"/><rect x="428.4" y="549.4" width="10.2" height="9.2" fill="#ebe7e3"/><rect x="434.0" y="549.9" width="4.0" height="3.4" fill="#d9d0c9"/><rect x="429.0" y="554.5" width="4.3" height="3.4" fill="#d9d0c9"/><rect x="428.4" y="561.4" width="10.2" height="9.2" fill="#ebe7e3"/><rect x="429.0" y="561.9" width="3.2" height="3.4" fill="#d9d0c9"/><rect x="435.0" y="561.9" width="3.0" height="3.4" fill="#d9d0c9"/><rect x="429.0" y="566.5" width="4.1" height="3.4" fill="#d9d0c9"/><rect x="434.2" y="566.5" width="3.8" height="3.4" fill="#d9d0c9"/><rect x="428.4" y="573.4" width="10.2" height="9.2" fill="#ebe7e3"/><rect x="429.0" y="573.9" width="4.3" height="3.4" fill="#d9d0c9"/><rect x="433.7" y="573.9" width="4.3" height="3.4" fill="#d9d0c9"/><rect x="429.0" y="578.5" width="3.5" height="3.4" fill="#d9d0c9"/><rect x="428.4" y="585.4" width="10.2" height="9.2" fill="#ebe7e3"/><rect x="429.0" y="585.9" width="3.8" height="3.4" fill="#d9d0c9"/><rect x="434.5" y="585.9" width="3.5" height="3.4" fill="#d9d0c9"/><rect x="429.0" y="590.5" width="4.4" height="3.4" fill="#d9d0c9"/><rect x="433.8" y="590.5" width="4.2" height="3.4" fill="#d9d0c9"/><rect x="428.4" y="597.4" width="10.2" height="9.2" fill="#ebe7e3"/><rect x="429.0" y="597.9" width="4.5" height="3.4" fill="#d9d0c9"/><rect x="434.0" y="597.9" width="4.0" height="3.4" fill="#d9d0c9"/><rect x="433.5" y="602.5" width="4.5" height="3.4" fill="#d9d0c9"/><rect x="428.4" y="609.4" width="10.2" height="9.2" fill="#ebe7e3"/><rect x="429.0" y="609.9" width="3.2" height="3.4" fill="#d9d0c9"/><rect x="434.9" y="609.9" width="3.1" height="3.4" fill="#d9d0c9"/><rect x="429.0" y="614.5" width="3.1" height="3.4" fill="#d9d0c9"/><rect x="433.7" y="614.5" width="4.3" height="3.4" fill="#d9d0c9"/><rect x="428.4" y="621.4" width="10.2" height="9.2" fill="#ebe7e3"/><rect x="429.0" y="621.9" width="4.4" height="3.4" fill="#d9d0c9"/><rect x="434.3" y="621.9" width="3.7" height="3.4" fill="#d9d0c9"/><rect x="434.1" y="626.5" width="3.9" height="3.4" fill="#d9d0c9"/><rect x="428.4" y="633.4" width="10.2" height="9.2" fill="#ebe7e3"/><rect x="429.0" y="633.9" width="3.2" height="3.4" fill="#d9d0c9"/><rect x="434.9" y="633.9" width="3.1" height="3.4" fill="#d9d0c9"/><rect x="428.4" y="645.4" width="10.2" height="9.2" fill="#ebe7e3"/><rect x="429.0" y="645.9" width="3.2" height="3.4" fill="#d9d0c9"/><rect x="434.0" y="645.9" width="4.0" height="3.4" fill="#d9d0c9"/><rect x="429.0" y="650.5" width="3.9" height="3.4" fill="#d9d0c9"/><rect x="434.6" y="650.5" width="3.4" height="3.4" fill="#d9d0c9"/><rect x="428.4" y="657.4" width="10.2" height="9.2" fill="#ebe7e3"/><rect x="429.0" y="657.9" width="3.9" height="3.4" fill="#d9d0c9"/><rect x="434.0" y="657.9" width="4.0" height="3.4" fill="#d9d0c9"/><rect x="434.3" y="662.5" width="3.7" height="3.4" fill="#d9d0c9"/><rect x="428.4" y="669.4" width="10.2" height="9.2" fill="#ebe7e3"/><rect x="429.0" y="669.9" width="4.5" height="3.4" fill="#d9d0c9"/><rect x="434.6" y="669.9" width="3.4" height="3.4" fill="#d9d0c9"/><rect x="434.3" y="674.5" width="3.7" height="3.4" fill="#d9d0c9"/><rect x="428.4" y="681.4" width="10.2" height="9.2" fill="#ebe7e3"/><rect x="429.0" y="681.9" width="3.3" height="3.4" fill="#d9d0c9"/><rect x="435.0" y="681.9" width="3.0" height="3.4" fill="#d9d0c9"/><rect x="433.6" y="686.5" width="4.4" height="3.4" fill="#d9d0c9"/><rect x="428.4" y="693.4" width="10.2" height="9.2" fill="#ebe7e3"/><rect x="429.0" y="693.9" width="3.0" height="3.4" fill="#d9d0c9"/><rect x="434.6" y="693.9" width="3.4" height="3.4" fill="#d9d0c9"/><rect x="429.0" y="698.5" width="4.4" height="3.4" fill="#d9d0c9"/><rect x="434.6" y="698.5" width="3.4" height="3.4" fill="#d9d0c9"/><rect x="428.4" y="705.4" width="10.2" height="13.2" fill="#ebe7e3"/><rect x="429.0" y="705.9" width="3.5" height="5.4" fill="#d9d0c9"/><rect x="434.6" y="705.9" width="3.4" height="5.4" fill="#d9d0c9"/><rect x="429.0" y="712.5" width="4.1" height="5.4" fill="#d9d0c9"/><rect x="434.5" y="712.5" width="3.5" height="5.4" fill="#d9d0c9"/><rect x="441.4" y="441.4" width="9.2" height="9.2" fill="#ebe7e3"/><rect x="442.0" y="441.9" width="3.7" height="3.4" fill="#d9d0c9"/><rect x="446.3" y="441.9" width="3.7" height="3.4" fill="#d9d0c9"/><rect x="442.0" y="446.5" width="3.1" height="3.4" fill="#d9d0c9"/><rect x="441.4" y="453.4" width="9.2" height="9.2" fill="#ebe7e3"/><rect x="442.0" y="453.9" width="3.3" height="3.4" fill="#d9d0c9"/><rect x="442.0" y="458.5" width="3.2" height="3.4" fill="#d9d0c9"/><rect x="446.7" y="458.5" width="3.3" height="3.4" fill="#d9d0c9"/><rect x="441.4" y="465.4" width="9.2" height="9.2" fill="#ebe7e3"/><rect x="442.0" y="465.9" width="4.1" height="3.4" fill="#d9d0c9"/><rect x="446.0" y="465.9" width="4.0" height="3.4" fill="#d9d0c9"/><rect x="442.0" y="470.5" width="3.7" height="3.4" fill="#d9d0c9"/><rect x="446.3" y="470.5" width="3.7" height="3.4" fill="#d9d0c9"/><rect x="441.4" y="477.4" width="9.2" height="9.2" fill="#ebe7e3"/><rect x="442.0" y="477.9" width="3.4" height="3.4" fill="#d9d0c9"/><rect x="446.4" y="477.9" width="3.6" height="3.4" fill="#d9d0c9"/><rect x="442.0" y="482.5" width="3.7" height="3.4" fill="#d9d0c9"/><rect x="446.2" y="482.5" width="3.8" height="3.4" fill="#d9d0c9"/><rect x="441.4" y="489.4" width="9.2" height="9.2" fill="#ebe7e3"/><rect x="442.0" y="489.9" width="3.0" height="3.4" fill="#d9d0c9"/><rect x="446.5" y="489.9" width="3.5" height="3.4" fill="#d9d0c9"/><rect x="442.0" y="494.5" width="3.6" height="3.4" fill="#d9d0c9"/><rect x="446.3" y="494.5" width="3.7" height="3.4" fill="#d9d0c9"/><rect x="441.4" y="501.4" width="9.2" height="9.2" fill="#ebe7e3"/><rect x="442.0" y="501.9" width="3.8" height="3.4" fill="#d9d0c9"/><rect x="446.4" y="501.9" width="3.6" height="3.4" fill="#d9d0c9"/><rect x="442.0" y="506.5" width="3.1" height="3.4" fill="#d9d0c9"/><rect x="446.0" y="506.5" width="4.0" height="3.4" fill="#d9d0c9"/><rect x="441.4" y="513.4" width="9.2" height="9.2" fill="#ebe7e3"/><rect x="442.0" y="513.9" width="3.3" height="3.4" fill="#d9d0c9"/><rect x="446.4" y="513.9" width="3.6" height="3.4" fill="#d9d0c9"/><rect x="442.0" y="518.5" width="3.2" height="3.4" fill="#d9d0c9"/><rect x="446.9" y="518.5" width="3.1" height="3.4" fill="#d9d0c9"/><rect x="441.4" y="525.4" width="9.2" height="9.2" fill="#ebe7e3"/><rect x="442.0" y="525.9" width="3.3" height="3.4" fill="#d9d0c9"/><rect x="446.8" y="525.9" width="3.2" height="3.4" fill="#d9d0c9"/><rect x="446.8" y="530.5" width="3.2" height="3.4" fill="#d9d0c9"/><rect x="441.4" y="537.4" width="9.2" height="9.2" fill="#ebe7e3"/><rect x="442.0" y="537.9" width="3.7" height="3.4" fill="#d9d0c9"/><rect x="446.5" y="537.9" width="3.5" height="3.4" fill="#d9d0c9"/><rect x="442.0" y="542.5" width="3.3" height="3.4" fill="#d9d0c9"/><rect x="446.2" y="542.5" width="3.8" height="3.4" fill="#d9d0c9"/><rect x="441.4" y="549.4" width="9.2" height="9.2" fill="#ebe7e3"/><rect x="442.0" y="549.9" width="3.8" height="3.4" fill="#d9d0c9"/><rect x="445.9" y="549.9" width="4.1" height="3.4" fill="#d9d0c9"/><rect x="442.0" y="554.5" width="3.6" height="3.4" fill="#d9d0c9"/><rect x="446.7" y="554.5" width="3.3" height="3.4" fill="#d9d0c9"/><rect x="441.4" y="561.4" width="9.2" height="9.2" fill="#ebe7e3"/><rect x="442.0" y="561.9" width="3.5" height="3.4" fill="#d9d0c9"/><rect x="446.2" y="561.9" width="3.8" height="3.4" fill="#d9d0c9"/><rect x="442.0" y="566.5" width="4.1" height="3.4" fill="#d9d0c9"/><rect x="446.4" y="566.5" width="3.6" height="3.4" fill="#d9d0c9"/><rect x="441.4" y="573.4" width="9.2" height="9.2" fill="#ebe7e3"/><rect x="442.0" y="573.9" width="3.7" height="3.4" fill="#d9d0c9"/><rect x="446.9" y="573.9" width="3.1" height="3.4" fill="#d9d0c9"/><rect x="446.2" y="578.5" width="3.8" height="3.4" fill="#d9d0c9"/><rect x="441.4" y="585.4" width="9.2" height="9.2" fill="#ebe7e3"/><rect x="442.0" y="585.9" width="3.9" height="3.4" fill="#d9d0c9"/><rect x="446.2" y="585.9" width="3.8" height="3.4" fill="#d9d0c9"/><rect x="442.0" y="590.5" width="3.7" height="3.4" fill="#d9d0c9"/><rect x="446.2" y="590.5" width="3.8" height="3.4" fill="#d9d0c9"/><rect x="441.4" y="597.4" width="9.2" height="9.2" fill="#ebe7e3"/><rect x="442.0" y="597.9" width="3.1" height="3.4" fill="#d9d0c9"/><rect x="446.2" y="597.9" width="3.8" height="3.4" fill="#d9d0c9"/><rect x="442.0" y="602.5" width="4.1" height="3.4" fill="#d9d0c9"/><rect x="446.8" y="602.5" width="3.2" height="3.4" fill="#d9d0c9"/><rect x="441.4" y="609.4" width="9.2" height="9.2" fill="#ebe7e3"/><rect x="442.0" y="609.9" width="3.4" height="3.4" fill="#d9d0c9"/><rect x="446.0" y="609.9" width="4.0" height="3.4" fill="#d9d0c9"/><rect x="442.0" y="614.5" width="3.8" height="3.4" fill="#d9d0c9"/><rect x="446.4" y="614.5" width="3.6" height="3.4" fill="#d9d0c9"/><rect x="441.4" y="621.4" width="9.2" height="9.2" fill="#ebe7e3"/><rect x="442.0" y="621.9" width="3.1" height="3.4" fill="#d9d0c9"/><rect x="447.0" y="621.9" width="3.0" height="3.4" fill="#d9d0c9"/><rect x="442.0" y="626.5" width="4.0" height="3.4" fill="#d9d0c9"/><rect x="446.3" y="626.5" width="3.7" height="3.4" fill="#d9d0c9"/><rect x="441.4" y="633.4" width="9.2" height="9.2" fill="#ebe7e3"/><rect x="442.0" y="633.9" width="3.2" height="3.4" fill="#d9d0c9"/><rect x="446.5" y="633.9" width="3.5" height="3.4" fill="#d9d0c9"/><rect x="442.0" y="638.5" width="3.1" height="3.4" fill="#d9d0c9"/><rect x="446.5" y="638.5" width="3.5" height="3.4" fill="#d9d0c9"/><rect x="441.4" y="645.4" width="9.2" height="9.2" fill="#ebe7e3"/><rect x="442.0" y="645.9" width="3.9" height="3.4" fill="#d9d0c9"/><rect x="446.6" y="645.9" width="3.4" height="3.4" fill="#d9d0c9"/><rect x="442.0" y="650.5" width="3.7" height="3.4" fill="#d9d0c9"/><rect x="446.4" y="650.5" width="3.6" height="3.4" fill="#d9d0c9"/><rect x="441.4" y="657.4" width="9.2" height="9.2" fill="#ebe7e3"/><rect x="442.0" y="657.9" width="3.1" height="3.4" fill="#d9d0c9"/><rect x="446.4" y="657.9" width="3.6" height="3.4" fill="#d9d0c9"/><rect x="442.0" y="662.5" width="3.2" height="3.4" fill="#d9d0c9"/><rect x="446.5" y="662.5" width="3.5" height="3.4" fill="#d9d0c9"/><rect x="441.4" y="669.4" width="9.2" height="9.2" fill="#ebe7e3"/><rect x="442.0" y="669.9" width="3.7" height="3.4" fill="#d9d0c9"/><rect x="446.3" y="669.9" width="3.7" height="3.4" fill="#d9d0c9"/><rect x="442.0" y="674.5" width="3.9" height="3.4" fill="#d9d0c9"/><rect x="446.7" y="674.5" width="3.3" height="3.4" fill="#d9d0c9"/><rect x="441.4" y="681.4" width="9.2" height="9.2" fill="#ebe7e3"/><rect x="442.0" y="681.9" width="3.6" height="3.4" fill="#d9d0c9"/><rect x="446.7" y="681.9" width="3.3" height="3.4" fill="#d9d0c9"/><rect x="442.0" y="686.5" width="3.5" height="3.4" fill="#d9d0c9"/><rect x="446.7" y="686.5" width="3.3" height="3.4" fill="#d9d0c9"/><rect x="441.4" y="693.4" width="9.2" height="9.2" fill="#ebe7e3"/><rect x="442.0" y="693.9" width="3.3" height="3.4" fill="#d9d0c9"/><rect x="446.5" y="693.9" width="3.5" height="3.4" fill="#d9d0c9"/><rect x="442.0" y="698.5" width="3.7" height="3.4" fill="#d9d0c9"/><rect x="446.4" y="698.5" width="3.6" height="3.4" fill="#d9d0c9"/><rect x="441.4" y="705.4" width="9.2" height="13.2" fill="#ebe7e3"/><rect x="442.0" y="705.9" width="4.1" height="5.4" fill="#d9d0c9"/><rect x="446.9" y="705.9" width="3.1" height="5.4" fill="#d9d0c9"/><rect x="442.0" y="712.5" width="3.0" height="5.4" fill="#d9d0c9"/><rect x="453.4" y="441.4" width="9.2" height="9.2" fill="#ebe7e3"/><rect x="454.0" y="441.9" width="3.3" height="3.4" fill="#d9d0c9"/><rect x="454.0" y="446.5" width="3.6" height="3.4" fill="#d9d0c9"/><rect x="459.0" y="446.5" width="3.0" height="3.4" fill="#d9d0c9"/><rect x="453.4" y="453.4" width="9.2" height="9.2" fill="#ebe7e3"/><rect x="454.0" y="453.9" width="3.0" height="3.4" fill="#d9d0c9"/><rect x="454.0" y="458.5" width="3.6" height="3.4" fill="#d9d0c9"/><rect x="458.3" y="458.5" width="3.7" height="3.4" fill="#d9d0c9"/><rect x="453.4" y="465.4" width="9.2" height="9.2" fill="#ebe7e3"/><rect x="454.0" y="465.9" width="3.7" height="3.4" fill="#d9d0c9"/><rect x="458.2" y="465.9" width="3.8" height="3.4" fill="#d9d0c9"/><rect x="454.0" y="470.5" width="3.4" height="3.4" fill="#d9d0c9"/><rect x="458.9" y="470.5" width="3.1" height="3.4" fill="#d9d0c9"/><rect x="453.4" y="477.4" width="9.2" height="9.2" fill="#ebe7e3"/><rect x="454.0" y="477.9" width="3.6" height="3.4" fill="#d9d0c9"/><rect x="458.4" y="477.9" width="3.6" height="3.4" fill="#d9d0c9"/><rect x="454.0" y="482.5" width="3.3" height="3.4" fill="#d9d0c9"/><rect x="458.9" y="482.5" width="3.1" height="3.4" fill="#d9d0c9"/><rect x="453.4" y="489.4" width="9.2" height="9.2" fill="#ebe7e3"/><rect x="454.0" y="489.9" width="3.2" height="3.4" fill="#d9d0c9"/><rect x="458.2" y="489.9" width="3.8" height="3.4" fill="#d9d0c9"/><rect x="454.0" y="494.5" width="3.8" height="3.4" fill="#d9d0c9"/><rect x="458.1" y="494.5" width="3.9" height="3.4" fill="#d9d0c9"/><rect x="453.4" y="501.4" width="9.2" height="9.2" fill="#ebe7e3"/><rect x="454.0" y="501.9" width="3.4" height="3.4" fill="#d9d0c9"/><rect x="458.5" y="501.9" width="3.5" height="3.4" fill="#d9d0c9"/><rect x="454.0" y="506.5" width="3.2" height="3.4" fill="#d9d0c9"/><rect x="453.4" y="513.4" width="9.2" height="9.2" fill="#ebe7e3"/><rect x="454.0" y="513.9" width="3.1" height="3.4" fill="#d9d0c9"/><rect x="458.8" y="518.5" width="3.2" height="3.4" fill="#d9d0c9"/><rect x="453.4" y="525.4" width="9.2" height="9.2" fill="#ebe7e3"/><rect x="454.0" y="525.9" width="3.9" height="3.4" fill="#d9d0c9"/><rect x="458.8" y="525.9" width="3.2" height="3.4" fill="#d9d0c9"/><rect x="454.0" y="530.5" width="4.1" height="3.4" fill="#d9d0c9"/><rect x="458.5" y="530.5" width="3.5" height="3.4" fill="#d9d0c9"/><rect x="453.4" y="537.4" width="9.2" height="9.2" fill="#ebe7e3"/><rect x="454.0" y="537.9" width="3.8" height="3.4" fill="#d9d0c9"/><rect x="458.1" y="537.9" width="3.9" height="3.4" fill="#d9d0c9"/><rect x="454.0" y="542.5" width="3.9" height="3.4" fill="#d9d0c9"/><rect x="453.4" y="549.4" width="9.2" height="9.2" fill="#ebe7e3"/><rect x="458.8" y="549.9" width="3.2" height="3.4" fill="#d9d0c9"/><rect x="454.0" y="554.5" width="3.3" height="3.4" fill="#d9d0c9"/><rect x="458.5" y="554.5" width="3.5" height="3.4" fill="#d9d0c9"/><rect x="453.4" y="561.4" width="9.2" height="9.2" fill="#ebe7e3"/><rect x="454.0" y="561.9" width="4.1" height="3.4" fill="#d9d0c9"/><rect x="458.1" y="561.9" width="3.9" height="3.4" fill="#d9d0c9"/><rect x="454.0" y="566.5" width="3.5" height="3.4" fill="#d9d0c9"/><rect x="453.4" y="573.4" width="9.2" height="9.2" fill="#ebe7e3"/><rect x="454.0" y="573.9" width="4.1" height="3.4" fill="#d9d0c9"/><rect x="458.6" y="573.9" width="3.4" height="3.4" fill="#d9d0c9"/><rect x="454.0" y="578.5" width="3.4" height="3.4" fill="#d9d0c9"/><rect x="458.1" y="578.5" width="3.9" height="3.4" fill="#d9d0c9"/><rect x="453.4" y="585.4" width="9.2" height="9.2" fill="#ebe7e3"/><rect x="458.4" y="585.9" width="3.6" height="3.4" fill="#d9d0c9"/><rect x="458.7" y="590.5" width="3.3" height="3.4" fill="#d9d0c9"/><rect x="453.4" y="597.4" width="9.2" height="9.2" fill="#ebe7e3"/><rect x="454.0" y="597.9" width="3.3" height="3.4" fill="#d9d0c9"/><rect x="458.5" y="597.9" width="3.5" height="3.4" fill="#d9d0c9"/><rect x="454.0" y="602.5" width="3.5" height="3.4" fill="#d9d0c9"/><rect x="458.4" y="602.5" width="3.6" height="3.4" fill="#d9d0c9"/><rect x="453.4" y="609.4" width="9.2" height="9.2" fill="#ebe7e3"/><rect x="458.7" y="609.9" width="3.3" height="3.4" fill="#d9d0c9"/><rect x="454.0" y="614.5" width="4.1" height="3.4" fill="#d9d0c9"/><rect x="458.2" y="614.5" width="3.8" height="3.4" fill="#d9d0c9"/><rect x="453.4" y="621.4" width="9.2" height="9.2" fill="#ebe7e3"/><rect x="454.0" y="621.9" width="3.7" height="3.4" fill="#d9d0c9"/><rect x="454.0" y="626.5" width="3.1" height="3.4" fill="#d9d0c9"/><rect x="453.4" y="633.4" width="9.2" height="9.2" fill="#ebe7e3"/><rect x="454.0" y="633.9" width="4.1" height="3.4" fill="#d9d0c9"/><rect x="459.0" y="633.9" width="3.0" height="3.4" fill="#d9d0c9"/><rect x="454.0" y="638.5" width="3.8" height="3.4" fill="#d9d0c9"/><rect x="453.4" y="645.4" width="9.2" height="9.2" fill="#ebe7e3"/><rect x="454.0" y="645.9" width="3.1" height="3.4" fill="#d9d0c9"/><rect x="458.1" y="645.9" width="3.9" height="3.4" fill="#d9d0c9"/><rect x="454.0" y="650.5" width="3.3" height="3.4" fill="#d9d0c9"/><rect x="458.1" y="650.5" width="3.9" height="3.4" fill="#d9d0c9"/><rect x="453.4" y="657.4" width="9.2" height="9.2" fill="#ebe7e3"/><rect x="454.0" y="657.9" width="3.6" height="3.4" fill="#d9d0c9"/><rect x="458.9" y="657.9" width="3.1" height="3.4" fill="#d9d0c9"/><rect x="454.0" y="662.5" width="3.6" height="3.4" fill="#d9d0c9"/><rect x="458.5" y="662.5" width="3.5" height="3.4" fill="#d9d0c9"/><rect x="453.4" y="669.4" width="9.2" height="9.2" fill="#ebe7e3"/><rect x="454.0" y="669.9" width="3.6" height="3.4" fill="#d9d0c9"/><rect x="458.5" y="669.9" width="3.5" height="3.4" fill="#d9d0c9"/><rect x="454.0" y="674.5" width="3.6" height="3.4" fill="#d9d0c9"/><rect x="457.9" y="674.5" width="4.1" height="3.4" fill="#d9d0c9"/><rect x="453.4" y="681.4" width="9.2" height="9.2" fill="#ebe7e3"/><rect x="454.0" y="681.9" width="3.9" height="3.4" fill="#d9d0c9"/><rect x="458.4" y="681.9" width="3.6" height="3.4" fill="#d9d0c9"/><rect x="454.0" y="686.5" width="3.1" height="3.4" fill="#d9d0c9"/><rect x="458.7" y="686.5" width="3.3" height="3.4" fill="#d9d0c9"/><rect x="453.4" y="693.4" width="9.2" height="9.2" fill="#ebe7e3"/><rect x="454.0" y="693.9" width="3.6" height="3.4" fill="#d9d0c9"/><rect x="458.5" y="693.9" width="3.5" height="3.4" fill="#d9d0c9"/><rect x="454.0" y="698.5" width="3.3" height="3.4" fill="#d9d0c9"/><rect x="458.0" y="698.5" width="4.0" height="3.4" fill="#d9d0c9"/><rect x="453.4" y="705.4" width="9.2" height="13.2" fill="#ebe7e3"/><rect x="454.0" y="705.9" width="3.4" height="5.4" fill="#d9d0c9"/><rect x="458.5" y="705.9" width="3.5" height="5.4" fill="#d9d0c9"/><rect x="454.0" y="712.5" width="3.9" height="5.4" fill="#d9d0c9"/><rect x="458.1" y="712.5" width="3.9" height="5.4" fill="#d9d0c9"/><rect x="465.4" y="441.4" width="9.2" height="9.2" fill="#ebe7e3"/><rect x="466.0" y="441.9" width="4.1" height="3.4" fill="#d9d0c9"/><rect x="470.5" y="441.9" width="3.5" height="3.4" fill="#d9d0c9"/><rect x="466.0" y="446.5" width="3.4" height="3.4" fill="#d9d0c9"/><rect x="470.5" y="446.5" width="3.5" height="3.4" fill="#d9d0c9"/><rect x="465.4" y="453.4" width="9.2" height="9.2" fill="#ebe7e3"/><rect x="466.0" y="453.9" width="3.6" height="3.4" fill="#d9d0c9"/><rect x="471.0" y="453.9" width="3.0" height="3.4" fill="#d9d0c9"/><rect x="466.0" y="458.5" width="3.5" height="3.4" fill="#d9d0c9"/><rect x="470.8" y="458.5" width="3.2" height="3.4" fill="#d9d0c9"/><rect x="465.4" y="465.4" width="9.2" height="9.2" fill="#ebe7e3"/><rect x="466.0" y="465.9" width="4.1" height="3.4" fill="#d9d0c9"/><rect x="470.7" y="465.9" width="3.3" height="3.4" fill="#d9d0c9"/><rect x="470.9" y="470.5" width="3.1" height="3.4" fill="#d9d0c9"/><rect x="465.4" y="477.4" width="9.2" height="9.2" fill="#ebe7e3"/><rect x="466.0" y="477.9" width="4.1" height="3.4" fill="#d9d0c9"/><rect x="470.1" y="477.9" width="3.9" height="3.4" fill="#d9d0c9"/><rect x="466.0" y="482.5" width="3.2" height="3.4" fill="#d9d0c9"/><rect x="470.9" y="482.5" width="3.1" height="3.4" fill="#d9d0c9"/><rect x="465.4" y="489.4" width="9.2" height="9.2" fill="#ebe7e3"/><rect x="466.0" y="489.9" width="3.6" height="3.4" fill="#d9d0c9"/><rect x="470.7" y="489.9" width="3.3" height="3.4" fill="#d9d0c9"/><rect x="466.0" y="494.5" width="3.2" height="3.4" fill="#d9d0c9"/><rect x="470.9" y="494.5" width="3.1" height="3.4" fill="#d9d0c9"/><rect x="465.4" y="501.4" width="9.2" height="9.2" fill="#ebe7e3"/><rect x="466.0" y="501.9" width="3.7" height="3.4" fill="#d9d0c9"/><rect x="470.5" y="501.9" width="3.5" height="3.4" fill="#d9d0c9"/><rect x="466.0" y="506.5" width="3.8" height="3.4" fill="#d9d0c9"/><rect x="470.0" y="506.5" width="4.0" height="3.4" fill="#d9d0c9"/><rect x="465.4" y="513.4" width="9.2" height="9.2" fill="#ebe7e3"/><rect x="466.0" y="513.9" width="3.3" height="3.4" fill="#d9d0c9"/><rect x="470.3" y="513.9" width="3.7" height="3.4" fill="#d9d0c9"/><rect x="466.0" y="518.5" width="3.8" height="3.4" fill="#d9d0c9"/><rect x="465.4" y="525.4" width="9.2" height="9.2" fill="#ebe7e3"/><rect x="466.0" y="525.9" width="3.5" height="3.4" fill="#d9d0c9"/><rect x="470.1" y="525.9" width="3.9" height="3.4" fill="#d9d0c9"/><rect x="466.0" y="530.5" width="4.0" height="3.4" fill="#d9d0c9"/><rect x="470.7" y="530.5" width="3.3" height="3.4" fill="#d9d0c9"/><rect x="465.4" y="537.4" width="9.2" height="9.2" fill="#ebe7e3"/><rect x="466.0" y="537.9" width="3.5" height="3.4" fill="#d9d0c9"/><rect x="470.3" y="537.9" width="3.7" height="3.4" fill="#d9d0c9"/><rect x="470.9" y="542.5" width="3.1" height="3.4" fill="#d9d0c9"/><rect x="465.4" y="549.4" width="9.2" height="9.2" fill="#ebe7e3"/><rect x="470.2" y="549.9" width="3.8" height="3.4" fill="#d9d0c9"/><rect x="466.0" y="554.5" width="4.0" height="3.4" fill="#d9d0c9"/><rect x="470.2" y="554.5" width="3.8" height="3.4" fill="#d9d0c9"/><rect x="465.4" y="561.4" width="9.2" height="9.2" fill="#ebe7e3"/><rect x="466.0" y="561.9" width="4.0" height="3.4" fill="#d9d0c9"/><rect x="470.0" y="561.9" width="4.0" height="3.4" fill="#d9d0c9"/><rect x="466.0" y="566.5" width="4.1" height="3.4" fill="#d9d0c9"/><rect x="470.8" y="566.5" width="3.2" height="3.4" fill="#d9d0c9"/><rect x="465.4" y="573.4" width="9.2" height="9.2" fill="#ebe7e3"/><rect x="466.0" y="573.9" width="3.2" height="3.4" fill="#d9d0c9"/><rect x="470.6" y="573.9" width="3.4" height="3.4" fill="#d9d0c9"/><rect x="466.0" y="578.5" width="3.4" height="3.4" fill="#d9d0c9"/><rect x="470.5" y="578.5" width="3.5" height="3.4" fill="#d9d0c9"/><rect x="465.4" y="585.4" width="9.2" height="9.2" fill="#ebe7e3"/><rect x="470.6" y="585.9" width="3.4" height="3.4" fill="#d9d0c9"/><rect x="466.0" y="590.5" width="3.5" height="3.4" fill="#d9d0c9"/><rect x="470.0" y="590.5" width="4.0" height="3.4" fill="#d9d0c9"/><rect x="465.4" y="597.4" width="9.2" height="9.2" fill="#ebe7e3"/><rect x="466.0" y="597.9" width="4.0" height="3.4" fill="#d9d0c9"/><rect x="469.9" y="597.9" width="4.1" height="3.4" fill="#d9d0c9"/><rect x="466.0" y="602.5" width="3.7" height="3.4" fill="#d9d0c9"/><rect x="465.4" y="609.4" width="9.2" height="9.2" fill="#ebe7e3"/><rect x="466.0" y="609.9" width="3.4" height="3.4" fill="#d9d0c9"/><rect x="471.0" y="609.9" width="3.0" height="3.4" fill="#d9d0c9"/><rect x="466.0" y="614.5" width="3.1" height="3.4" fill="#d9d0c9"/><rect x="470.4" y="614.5" width="3.6" height="3.4" fill="#d9d0c9"/><rect x="465.4" y="621.4" width="9.2" height="9.2" fill="#ebe7e3"/><rect x="466.0" y="621.9" width="3.7" height="3.4" fill="#d9d0c9"/><rect x="466.0" y="626.5" width="3.3" height="3.4" fill="#d9d0c9"/><rect x="470.5" y="626.5" width="3.5" height="3.4" fill="#d9d0c9"/><rect x="465.4" y="633.4" width="9.2" height="9.2" fill="#ebe7e3"/><rect x="466.0" y="633.9" width="3.5" height="3.4" fill="#d9d0c9"/><rect x="470.6" y="633.9" width="3.4" height="3.4" fill="#d9d0c9"/><rect x="466.0" y="638.5" width="3.4" height="3.4" fill="#d9d0c9"/><rect x="470.4" y="638.5" width="3.6" height="3.4" fill="#d9d0c9"/><rect x="465.4" y="645.4" width="9.2" height="9.2" fill="#ebe7e3"/><rect x="466.0" y="645.9" width="4.1" height="3.4" fill="#d9d0c9"/><rect x="466.0" y="650.5" width="3.8" height="3.4" fill="#d9d0c9"/><rect x="470.2" y="650.5" width="3.8" height="3.4" fill="#d9d0c9"/><rect x="465.4" y="657.4" width="9.2" height="9.2" fill="#ebe7e3"/><rect x="466.0" y="657.9" width="3.1" height="3.4" fill="#d9d0c9"/><rect x="466.0" y="662.5" width="3.3" height="3.4" fill="#d9d0c9"/><rect x="470.7" y="662.5" width="3.3" height="3.4" fill="#d9d0c9"/><rect x="465.4" y="669.4" width="9.2" height="9.2" fill="#ebe7e3"/><rect x="466.0" y="674.5" width="3.9" height="3.4" fill="#d9d0c9"/><rect x="470.9" y="674.5" width="3.1" height="3.4" fill="#d9d0c9"/><rect x="465.4" y="681.4" width="9.2" height="9.2" fill="#ebe7e3"/><rect x="466.0" y="681.9" width="3.1" height="3.4" fill="#d9d0c9"/><rect x="466.0" y="686.5" width="3.3" height="3.4" fill="#d9d0c9"/><rect x="470.4" y="686.5" width="3.6" height="3.4" fill="#d9d0c9"/><rect x="465.4" y="693.4" width="9.2" height="9.2" fill="#ebe7e3"/><rect x="466.0" y="693.9" width="3.4" height="3.4" fill="#d9d0c9"/><rect x="466.0" y="698.5" width="3.4" height="3.4" fill="#d9d0c9"/><rect x="470.9" y="698.5" width="3.1" height="3.4" fill="#d9d0c9"/><rect x="465.4" y="705.4" width="9.2" height="13.2" fill="#ebe7e3"/><rect x="466.0" y="705.9" width="3.6" height="5.4" fill="#d9d0c9"/><rect x="470.9" y="705.9" width="3.1" height="5.4" fill="#d9d0c9"/><rect x="466.0" y="712.5" width="4.1" height="5.4" fill="#d9d0c9"/><rect x="470.4" y="712.5" width="3.6" height="5.4" fill="#d9d0c9"/><rect x="477.4" y="441.4" width="9.2" height="9.2" fill="#ebe7e3"/><rect x="478.0" y="441.9" width="3.7" height="3.4" fill="#d9d0c9"/><rect x="482.8" y="441.9" width="3.2" height="3.4" fill="#d9d0c9"/><rect x="478.0" y="446.5" width="3.5" height="3.4" fill="#d9d0c9"/><rect x="483.0" y="446.5" width="3.0" height="3.4" fill="#d9d0c9"/><rect x="477.4" y="453.4" width="9.2" height="9.2" fill="#ebe7e3"/><rect x="478.0" y="453.9" width="3.1" height="3.4" fill="#d9d0c9"/><rect x="482.5" y="453.9" width="3.5" height="3.4" fill="#d9d0c9"/><rect x="478.0" y="458.5" width="3.9" height="3.4" fill="#d9d0c9"/><rect x="482.7" y="458.5" width="3.3" height="3.4" fill="#d9d0c9"/><rect x="477.4" y="465.4" width="9.2" height="9.2" fill="#ebe7e3"/><rect x="478.0" y="465.9" width="3.0" height="3.4" fill="#d9d0c9"/><rect x="482.0" y="470.5" width="4.0" height="3.4" fill="#d9d0c9"/><rect x="477.4" y="477.4" width="9.2" height="9.2" fill="#ebe7e3"/><rect x="478.0" y="477.9" width="4.1" height="3.4" fill="#d9d0c9"/><rect x="482.2" y="477.9" width="3.8" height="3.4" fill="#d9d0c9"/><rect x="482.3" y="482.5" width="3.7" height="3.4" fill="#d9d0c9"/><rect x="477.4" y="489.4" width="9.2" height="9.2" fill="#ebe7e3"/><rect x="478.0" y="489.9" width="3.7" height="3.4" fill="#d9d0c9"/><rect x="482.3" y="489.9" width="3.7" height="3.4" fill="#d9d0c9"/><rect x="478.0" y="494.5" width="3.6" height="3.4" fill="#d9d0c9"/><rect x="482.4" y="494.5" width="3.6" height="3.4" fill="#d9d0c9"/><rect x="477.4" y="501.4" width="9.2" height="9.2" fill="#ebe7e3"/><rect x="482.2" y="501.9" width="3.8" height="3.4" fill="#d9d0c9"/><rect x="478.0" y="506.5" width="3.5" height="3.4" fill="#d9d0c9"/><rect x="482.3" y="506.5" width="3.7" height="3.4" fill="#d9d0c9"/><rect x="477.4" y="513.4" width="9.2" height="9.2" fill="#ebe7e3"/><rect x="478.0" y="513.9" width="3.9" height="3.4" fill="#d9d0c9"/><rect x="482.6" y="513.9" width="3.4" height="3.4" fill="#d9d0c9"/><rect x="478.0" y="518.5" width="3.9" height="3.4" fill="#d9d0c9"/><rect x="477.4" y="525.4" width="9.2" height="9.2" fill="#ebe7e3"/><rect x="478.0" y="525.9" width="3.3" height="3.4" fill="#d9d0c9"/><rect x="482.2" y="525.9" width="3.8" height="3.4" fill="#d9d0c9"/><rect x="478.0" y="530.5" width="3.6" height="3.4" fill="#d9d0c9"/><rect x="482.9" y="530.5" width="3.1" height="3.4" fill="#d9d0c9"/><rect x="477.4" y="537.4" width="9.2" height="9.2" fill="#ebe7e3"/><rect x="478.0" y="537.9" width="4.1" height="3.4" fill="#d9d0c9"/><rect x="482.4" y="537.9" width="3.6" height="3.4" fill="#d9d0c9"/><rect x="478.0" y="542.5" width="3.5" height="3.4" fill="#d9d0c9"/><rect x="482.8" y="542.5" width="3.2" height="3.4" fill="#d9d0c9"/><rect x="477.4" y="549.4" width="9.2" height="9.2" fill="#ebe7e3"/><rect x="478.0" y="549.9" width="3.6" height="3.4" fill="#d9d0c9"/><rect x="478.0" y="554.5" width="3.9" height="3.4" fill="#d9d0c9"/><rect x="482.8" y="554.5" width="3.2" height="3.4" fill="#d9d0c9"/><rect x="477.4" y="561.4" width="9.2" height="9.2" fill="#ebe7e3"/><rect x="478.0" y="561.9" width="3.2" height="3.4" fill="#d9d0c9"/><rect x="482.5" y="561.9" width="3.5" height="3.4" fill="#d9d0c9"/><rect x="478.0" y="566.5" width="3.3" height="3.4" fill="#d9d0c9"/><rect x="482.8" y="566.5" width="3.2" height="3.4" fill="#d9d0c9"/><rect x="477.4" y="573.4" width="9.2" height="9.2" fill="#ebe7e3"/><rect x="482.2" y="573.9" width="3.8" height="3.4" fill="#d9d0c9"/><rect x="478.0" y="578.5" width="4.1" height="3.4" fill="#d9d0c9"/><rect x="482.5" y="578.5" width="3.5" height="3.4" fill="#d9d0c9"/><rect x="477.4" y="585.4" width="9.2" height="9.2" fill="#ebe7e3"/><rect x="478.0" y="585.9" width="3.7" height="3.4" fill="#d9d0c9"/><rect x="482.1" y="585.9" width="3.9" height="3.4" fill="#d9d0c9"/><rect x="478.0" y="590.5" width="3.4" height="3.4" fill="#d9d0c9"/><rect x="477.4" y="597.4" width="9.2" height="9.2" fill="#ebe7e3"/><rect x="478.0" y="597.9" width="3.9" height="3.4" fill="#d9d0c9"/><rect x="482.9" y="597.9" width="3.1" height="3.4" fill="#d9d0c9"/><rect x="478.0" y="602.5" width="3.2" height="3.4" fill="#d9d0c9"/><rect x="482.3" y="602.5" width="3.7" height="3.4" fill="#d9d0c9"/><rect x="477.4" y="609.4" width="9.2" height="9.2" fill="#ebe7e3"/><rect x="478.0" y="609.9" width="3.1" height="3.4" fill="#d9d0c9"/><rect x="482.2" y="609.9" width="3.8" height="3.4" fill="#d9d0c9"/><rect x="477.4" y="621.4" width="9.2" height="9.2" fill="#ebe7e3"/><rect x="478.0" y="621.9" width="4.0" height="3.4" fill="#d9d0c9"/><rect x="482.7" y="621.9" width="3.3" height="3.4" fill="#d9d0c9"/><rect x="482.0" y="626.5" width="4.0" height="3.4" fill="#d9d0c9"/><rect x="477.4" y="633.4" width="9.2" height="9.2" fill="#ebe7e3"/><rect x="478.0" y="633.9" width="3.2" height="3.4" fill="#d9d0c9"/><rect x="483.0" y="633.9" width="3.0" height="3.4" fill="#d9d0c9"/><rect x="478.0" y="638.5" width="3.4" height="3.4" fill="#d9d0c9"/><rect x="483.0" y="638.5" width="3.0" height="3.4" fill="#d9d0c9"/><rect x="477.4" y="645.4" width="9.2" height="9.2" fill="#ebe7e3"/><rect x="478.0" y="645.9" width="3.8" height="3.4" fill="#d9d0c9"/><rect x="482.7" y="645.9" width="3.3" height="3.4" fill="#d9d0c9"/><rect x="481.9" y="650.5" width="4.1" height="3.4" fill="#d9d0c9"/><rect x="477.4" y="657.4" width="9.2" height="9.2" fill="#ebe7e3"/><rect x="478.0" y="657.9" width="3.6" height="3.4" fill="#d9d0c9"/><rect x="478.0" y="662.5" width="3.7" height="3.4" fill="#d9d0c9"/><rect x="482.1" y="662.5" width="3.9" height="3.4" fill="#d9d0c9"/><rect x="477.4" y="669.4" width="9.2" height="9.2" fill="#ebe7e3"/><rect x="478.0" y="669.9" width="4.1" height="3.4" fill="#d9d0c9"/><rect x="482.5" y="669.9" width="3.5" height="3.4" fill="#d9d0c9"/><rect x="478.0" y="674.5" width="3.9" height="3.4" fill="#d9d0c9"/><rect x="481.9" y="674.5" width="4.1" height="3.4" fill="#d9d0c9"/><rect x="477.4" y="681.4" width="9.2" height="9.2" fill="#ebe7e3"/><rect x="478.0" y="681.9" width="4.0" height="3.4" fill="#d9d0c9"/><rect x="482.6" y="681.9" width="3.4" height="3.4" fill="#d9d0c9"/><rect x="482.3" y="686.5" width="3.7" height="3.4" fill="#d9d0c9"/><rect x="477.4" y="693.4" width="9.2" height="9.2" fill="#ebe7e3"/><rect x="478.0" y="693.9" width="3.6" height="3.4" fill="#d9d0c9"/><rect x="482.1" y="693.9" width="3.9" height="3.4" fill="#d9d0c9"/><rect x="478.0" y="698.5" width="3.8" height="3.4" fill="#d9d0c9"/><rect x="482.8" y="698.5" width="3.2" height="3.4" fill="#d9d0c9"/><rect x="477.4" y="705.4" width="9.2" height="13.2" fill="#ebe7e3"/><rect x="478.0" y="705.9" width="3.4" height="5.4" fill="#d9d0c9"/><rect x="482.4" y="705.9" width="3.6" height="5.4" fill="#d9d0c9"/><rect x="478.0" y="712.5" width="3.1" height="5.4" fill="#d9d0c9"/><rect x="482.1" y="712.5" width="3.9" height="5.4" fill="#d9d0c9"/><rect x="489.4" y="441.4" width="9.2" height="9.2" fill="#ebe7e3"/><rect x="490.0" y="441.9" width="3.9" height="3.4" fill="#d9d0c9"/><rect x="490.0" y="446.5" width="3.5" height="3.4" fill="#d9d0c9"/><rect x="494.1" y="446.5" width="3.9" height="3.4" fill="#d9d0c9"/><rect x="489.4" y="453.4" width="9.2" height="9.2" fill="#ebe7e3"/><rect x="490.0" y="453.9" width="3.0" height="3.4" fill="#d9d0c9"/><rect x="494.9" y="453.9" width="3.1" height="3.4" fill="#d9d0c9"/><rect x="494.3" y="458.5" width="3.7" height="3.4" fill="#d9d0c9"/><rect x="489.4" y="465.4" width="9.2" height="9.2" fill="#ebe7e3"/><rect x="490.0" y="465.9" width="3.1" height="3.4" fill="#d9d0c9"/><rect x="494.4" y="465.9" width="3.6" height="3.4" fill="#d9d0c9"/><rect x="490.0" y="470.5" width="3.3" height="3.4" fill="#d9d0c9"/><rect x="494.4" y="470.5" width="3.6" height="3.4" fill="#d9d0c9"/><rect x="489.4" y="477.4" width="9.2" height="9.2" fill="#ebe7e3"/><rect x="490.0" y="477.9" width="3.7" height="3.4" fill="#d9d0c9"/><rect x="494.7" y="477.9" width="3.3" height="3.4" fill="#d9d0c9"/><rect x="490.0" y="482.5" width="3.3" height="3.4" fill="#d9d0c9"/><rect x="494.8" y="482.5" width="3.2" height="3.4" fill="#d9d0c9"/><rect x="489.4" y="489.4" width="9.2" height="9.2" fill="#ebe7e3"/><rect x="490.0" y="489.9" width="3.8" height="3.4" fill="#d9d0c9"/><rect x="494.4" y="489.9" width="3.6" height="3.4" fill="#d9d0c9"/><rect x="490.0" y="494.5" width="4.1" height="3.4" fill="#d9d0c9"/><rect x="494.6" y="494.5" width="3.4" height="3.4" fill="#d9d0c9"/><rect x="489.4" y="501.4" width="9.2" height="9.2" fill="#ebe7e3"/><rect x="490.0" y="501.9" width="3.7" height="3.4" fill="#d9d0c9"/><rect x="490.0" y="506.5" width="3.1" height="3.4" fill="#d9d0c9"/><rect x="494.6" y="506.5" width="3.4" height="3.4" fill="#d9d0c9"/><rect x="489.4" y="513.4" width="9.2" height="9.2" fill="#ebe7e3"/><rect x="490.0" y="513.9" width="3.9" height="3.4" fill="#d9d0c9"/><rect x="494.6" y="513.9" width="3.4" height="3.4" fill="#d9d0c9"/><rect x="490.0" y="518.5" width="3.1" height="3.4" fill="#d9d0c9"/><rect x="489.4" y="525.4" width="9.2" height="9.2" fill="#ebe7e3"/><rect x="490.0" y="525.9" width="3.3" height="3.4" fill="#d9d0c9"/><rect x="490.0" y="530.5" width="3.4" height="3.4" fill="#d9d0c9"/><rect x="494.5" y="530.5" width="3.5" height="3.4" fill="#d9d0c9"/><rect x="489.4" y="537.4" width="9.2" height="9.2" fill="#ebe7e3"/><rect x="490.0" y="537.9" width="3.1" height="3.4" fill="#d9d0c9"/><rect x="494.3" y="537.9" width="3.7" height="3.4" fill="#d9d0c9"/><rect x="494.6" y="542.5" width="3.4" height="3.4" fill="#d9d0c9"/><rect x="489.4" y="549.4" width="9.2" height="9.2" fill="#ebe7e3"/><rect x="490.0" y="549.9" width="3.1" height="3.4" fill="#d9d0c9"/><rect x="493.9" y="554.5" width="4.1" height="3.4" fill="#d9d0c9"/><rect x="489.4" y="561.4" width="9.2" height="9.2" fill="#ebe7e3"/><rect x="490.0" y="561.9" width="3.6" height="3.4" fill="#d9d0c9"/><rect x="490.0" y="566.5" width="3.6" height="3.4" fill="#d9d0c9"/><rect x="494.3" y="566.5" width="3.7" height="3.4" fill="#d9d0c9"/><rect x="489.4" y="573.4" width="9.2" height="9.2" fill="#ebe7e3"/><rect x="490.0" y="573.9" width="3.2" height="3.4" fill="#d9d0c9"/><rect x="494.7" y="578.5" width="3.3" height="3.4" fill="#d9d0c9"/><rect x="489.4" y="585.4" width="9.2" height="9.2" fill="#ebe7e3"/><rect x="490.0" y="585.9" width="3.1" height="3.4" fill="#d9d0c9"/><rect x="494.9" y="585.9" width="3.1" height="3.4" fill="#d9d0c9"/><rect x="494.7" y="590.5" width="3.3" height="3.4" fill="#d9d0c9"/><rect x="489.4" y="597.4" width="9.2" height="9.2" fill="#ebe7e3"/><rect x="490.0" y="597.9" width="3.7" height="3.4" fill="#d9d0c9"/><rect x="494.6" y="597.9" width="3.4" height="3.4" fill="#d9d0c9"/><rect x="494.6" y="602.5" width="3.4" height="3.4" fill="#d9d0c9"/><rect x="489.4" y="609.4" width="9.2" height="9.2" fill="#ebe7e3"/><rect x="490.0" y="609.9" width="3.9" height="3.4" fill="#d9d0c9"/><rect x="490.0" y="614.5" width="3.4" height="3.4" fill="#d9d0c9"/><rect x="494.3" y="614.5" width="3.7" height="3.4" fill="#d9d0c9"/><rect x="489.4" y="621.4" width="9.2" height="9.2" fill="#ebe7e3"/><rect x="490.0" y="621.9" width="3.5" height="3.4" fill="#d9d0c9"/><rect x="490.0" y="626.5" width="3.1" height="3.4" fill="#d9d0c9"/><rect x="489.4" y="633.4" width="9.2" height="9.2" fill="#ebe7e3"/><rect x="490.0" y="633.9" width="3.6" height="3.4" fill="#d9d0c9"/><rect x="494.3" y="633.9" width="3.7" height="3.4" fill="#d9d0c9"/><rect x="490.0" y="638.5" width="3.8" height="3.4" fill="#d9d0c9"/><rect x="489.4" y="645.4" width="9.2" height="9.2" fill="#ebe7e3"/><rect x="490.0" y="645.9" width="3.5" height="3.4" fill="#d9d0c9"/><rect x="494.7" y="645.9" width="3.3" height="3.4" fill="#d9d0c9"/><rect x="490.0" y="650.5" width="3.1" height="3.4" fill="#d9d0c9"/><rect x="494.7" y="650.5" width="3.3" height="3.4" fill="#d9d0c9"/><rect x="489.4" y="657.4" width="9.2" height="9.2" fill="#ebe7e3"/><rect x="490.0" y="657.9" width="3.1" height="3.4" fill="#d9d0c9"/><rect x="493.9" y="657.9" width="4.1" height="3.4" fill="#d9d0c9"/><rect x="490.0" y="662.5" width="3.2" height="3.4" fill="#d9d0c9"/><rect x="494.3" y="662.5" width="3.7" height="3.4" fill="#d9d0c9"/><rect x="489.4" y="669.4" width="9.2" height="9.2" fill="#ebe7e3"/><rect x="494.3" y="669.9" width="3.7" height="3.4" fill="#d9d0c9"/><rect x="490.0" y="674.5" width="3.0" height="3.4" fill="#d9d0c9"/><rect x="494.0" y="674.5" width="4.0" height="3.4" fill="#d9d0c9"/><rect x="489.4" y="681.4" width="9.2" height="9.2" fill="#ebe7e3"/><rect x="490.0" y="681.9" width="4.0" height="3.4" fill="#d9d0c9"/><rect x="494.6" y="681.9" width="3.4" height="3.4" fill="#d9d0c9"/><rect x="490.0" y="686.5" width="3.7" height="3.4" fill="#d9d0c9"/><rect x="494.4" y="686.5" width="3.6" height="3.4" fill="#d9d0c9"/><rect x="489.4" y="693.4" width="9.2" height="9.2" fill="#ebe7e3"/><rect x="490.0" y="693.9" width="3.3" height="3.4" fill="#d9d0c9"/><rect x="494.9" y="698.5" width="3.1" height="3.4" fill="#d9d0c9"/><rect x="489.4" y="705.4" width="9.2" height="13.2" fill="#ebe7e3"/><rect x="490.0" y="705.9" width="4.1" height="5.4" fill="#d9d0c9"/><rect x="490.0" y="712.5" width="3.7" height="5.4" fill="#d9d0c9"/><rect x="501.4" y="441.4" width="9.2" height="9.2" fill="#ebe7e3"/><rect x="502.0" y="441.9" width="3.4" height="3.4" fill="#d9d0c9"/><rect x="506.9" y="441.9" width="3.1" height="3.4" fill="#d9d0c9"/><rect x="502.0" y="446.5" width="3.0" height="3.4" fill="#d9d0c9"/><rect x="506.5" y="446.5" width="3.5" height="3.4" fill="#d9d0c9"/><rect x="501.4" y="453.4" width="9.2" height="9.2" fill="#ebe7e3"/><rect x="502.0" y="453.9" width="4.1" height="3.4" fill="#d9d0c9"/><rect x="506.4" y="453.9" width="3.6" height="3.4" fill="#d9d0c9"/><rect x="502.0" y="458.5" width="3.4" height="3.4" fill="#d9d0c9"/><rect x="506.1" y="458.5" width="3.9" height="3.4" fill="#d9d0c9"/><rect x="501.4" y="465.4" width="9.2" height="9.2" fill="#ebe7e3"/><rect x="502.0" y="465.9" width="3.8" height="3.4" fill="#d9d0c9"/><rect x="506.8" y="465.9" width="3.2" height="3.4" fill="#d9d0c9"/><rect x="502.0" y="470.5" width="3.1" height="3.4" fill="#d9d0c9"/><rect x="506.7" y="470.5" width="3.3" height="3.4" fill="#d9d0c9"/><rect x="501.4" y="477.4" width="9.2" height="9.2" fill="#ebe7e3"/><rect x="502.0" y="477.9" width="3.9" height="3.4" fill="#d9d0c9"/><rect x="506.0" y="477.9" width="4.0" height="3.4" fill="#d9d0c9"/><rect x="502.0" y="482.5" width="3.8" height="3.4" fill="#d9d0c9"/><rect x="506.2" y="482.5" width="3.8" height="3.4" fill="#d9d0c9"/><rect x="501.4" y="489.4" width="9.2" height="9.2" fill="#ebe7e3"/><rect x="502.0" y="489.9" width="3.7" height="3.4" fill="#d9d0c9"/><rect x="506.4" y="489.9" width="3.6" height="3.4" fill="#d9d0c9"/><rect x="502.0" y="494.5" width="4.1" height="3.4" fill="#d9d0c9"/><rect x="506.8" y="494.5" width="3.2" height="3.4" fill="#d9d0c9"/><rect x="501.4" y="501.4" width="9.2" height="9.2" fill="#ebe7e3"/><rect x="502.0" y="501.9" width="3.4" height="3.4" fill="#d9d0c9"/><rect x="506.3" y="501.9" width="3.7" height="3.4" fill="#d9d0c9"/><rect x="506.3" y="506.5" width="3.7" height="3.4" fill="#d9d0c9"/><rect x="501.4" y="513.4" width="9.2" height="9.2" fill="#ebe7e3"/><rect x="502.0" y="513.9" width="3.8" height="3.4" fill="#d9d0c9"/><rect x="506.9" y="513.9" width="3.1" height="3.4" fill="#d9d0c9"/><rect x="502.0" y="518.5" width="4.1" height="3.4" fill="#d9d0c9"/><rect x="501.4" y="525.4" width="9.2" height="9.2" fill="#ebe7e3"/><rect x="502.0" y="525.9" width="3.7" height="3.4" fill="#d9d0c9"/><rect x="506.4" y="525.9" width="3.6" height="3.4" fill="#d9d0c9"/><rect x="502.0" y="530.5" width="4.1" height="3.4" fill="#d9d0c9"/><rect x="506.5" y="530.5" width="3.5" height="3.4" fill="#d9d0c9"/><rect x="501.4" y="537.4" width="9.2" height="9.2" fill="#ebe7e3"/><rect x="502.0" y="537.9" width="3.8" height="3.4" fill="#d9d0c9"/><rect x="505.9" y="537.9" width="4.1" height="3.4" fill="#d9d0c9"/><rect x="506.7" y="542.5" width="3.3" height="3.4" fill="#d9d0c9"/><rect x="501.4" y="549.4" width="9.2" height="9.2" fill="#ebe7e3"/><rect x="502.0" y="549.9" width="4.1" height="3.4" fill="#d9d0c9"/><rect x="506.4" y="549.9" width="3.6" height="3.4" fill="#d9d0c9"/><rect x="502.0" y="554.5" width="3.8" height="3.4" fill="#d9d0c9"/><rect x="506.0" y="554.5" width="4.0" height="3.4" fill="#d9d0c9"/><rect x="501.4" y="561.4" width="9.2" height="9.2" fill="#ebe7e3"/><rect x="502.0" y="561.9" width="3.1" height="3.4" fill="#d9d0c9"/><rect x="506.7" y="561.9" width="3.3" height="3.4" fill="#d9d0c9"/><rect x="502.0" y="566.5" width="3.9" height="3.4" fill="#d9d0c9"/><rect x="506.7" y="566.5" width="3.3" height="3.4" fill="#d9d0c9"/><rect x="501.4" y="573.4" width="9.2" height="9.2" fill="#ebe7e3"/><rect x="502.0" y="573.9" width="3.9" height="3.4" fill="#d9d0c9"/><rect x="506.9" y="573.9" width="3.1" height="3.4" fill="#d9d0c9"/><rect x="502.0" y="578.5" width="3.8" height="3.4" fill="#d9d0c9"/><rect x="506.2" y="578.5" width="3.8" height="3.4" fill="#d9d0c9"/><rect x="501.4" y="585.4" width="9.2" height="9.2" fill="#ebe7e3"/><rect x="502.0" y="585.9" width="3.1" height="3.4" fill="#d9d0c9"/><rect x="506.7" y="585.9" width="3.3" height="3.4" fill="#d9d0c9"/><rect x="502.0" y="590.5" width="3.4" height="3.4" fill="#d9d0c9"/><rect x="501.4" y="597.4" width="9.2" height="9.2" fill="#ebe7e3"/><rect x="506.1" y="597.9" width="3.9" height="3.4" fill="#d9d0c9"/><rect x="505.9" y="602.5" width="4.1" height="3.4" fill="#d9d0c9"/><rect x="501.4" y="609.4" width="9.2" height="9.2" fill="#ebe7e3"/><rect x="502.0" y="609.9" width="3.6" height="3.4" fill="#d9d0c9"/><rect x="507.0" y="609.9" width="3.0" height="3.4" fill="#d9d0c9"/><rect x="502.0" y="614.5" width="3.9" height="3.4" fill="#d9d0c9"/><rect x="506.6" y="614.5" width="3.4" height="3.4" fill="#d9d0c9"/><rect x="501.4" y="621.4" width="9.2" height="9.2" fill="#ebe7e3"/><rect x="502.0" y="621.9" width="4.1" height="3.4" fill="#d9d0c9"/><rect x="505.9" y="626.5" width="4.1" height="3.4" fill="#d9d0c9"/><rect x="501.4" y="633.4" width="9.2" height="9.2" fill="#ebe7e3"/><rect x="506.5" y="633.9" width="3.5" height="3.4" fill="#d9d0c9"/><rect x="502.0" y="638.5" width="3.6" height="3.4" fill="#d9d0c9"/><rect x="506.9" y="638.5" width="3.1" height="3.4" fill="#d9d0c9"/><rect x="501.4" y="645.4" width="9.2" height="9.2" fill="#ebe7e3"/><rect x="502.0" y="645.9" width="3.7" height="3.4" fill="#d9d0c9"/><rect x="506.9" y="645.9" width="3.1" height="3.4" fill="#d9d0c9"/><rect x="506.5" y="650.5" width="3.5" height="3.4" fill="#d9d0c9"/><rect x="501.4" y="657.4" width="9.2" height="9.2" fill="#ebe7e3"/><rect x="502.0" y="657.9" width="3.2" height="3.4" fill="#d9d0c9"/><rect x="502.0" y="662.5" width="4.1" height="3.4" fill="#d9d0c9"/><rect x="506.0" y="662.5" width="4.0" height="3.4" fill="#d9d0c9"/><rect x="501.4" y="669.4" width="9.2" height="9.2" fill="#ebe7e3"/><rect x="506.6" y="669.9" width="3.4" height="3.4" fill="#d9d0c9"/><rect x="502.0" y="674.5" width="3.7" height="3.4" fill="#d9d0c9"/><rect x="506.0" y="674.5" width="4.0" height="3.4" fill="#d9d0c9"/><rect x="501.4" y="681.4" width="9.2" height="9.2" fill="#ebe7e3"/><rect x="502.0" y="681.9" width="3.2" height="3.4" fill="#d9d0c9"/><rect x="506.9" y="681.9" width="3.1" height="3.4" fill="#d9d0c9"/><rect x="502.0" y="686.5" width="3.3" height="3.4" fill="#d9d0c9"/><rect x="506.6" y="686.5" width="3.4" height="3.4" fill="#d9d0c9"/><rect x="501.4" y="693.4" width="9.2" height="9.2" fill="#ebe7e3"/><rect x="506.9" y="693.9" width="3.1" height="3.4" fill="#d9d0c9"/><rect x="502.0" y="698.5" width="3.6" height="3.4" fill="#d9d0c9"/><rect x="501.4" y="705.4" width="9.2" height="13.2" fill="#ebe7e3"/><rect x="502.0" y="705.9" width="3.8" height="5.4" fill="#d9d0c9"/><rect x="502.0" y="712.5" width="3.1" height="5.4" fill="#d9d0c9"/><rect x="506.9" y="712.5" width="3.1" height="5.4" fill="#d9d0c9"/><rect x="513.4" y="441.4" width="10.2" height="9.2" fill="#ebe7e3"/><rect x="514.0" y="441.9" width="3.7" height="3.4" fill="#d9d0c9"/><rect x="519.0" y="441.9" width="4.0" height="3.4" fill="#d9d0c9"/><rect x="514.0" y="446.5" width="3.5" height="3.4" fill="#d9d0c9"/><rect x="519.7" y="446.5" width="3.3" height="3.4" fill="#d9d0c9"/><rect x="513.4" y="453.4" width="10.2" height="9.2" fill="#ebe7e3"/><rect x="514.0" y="453.9" width="3.6" height="3.4" fill="#d9d0c9"/><rect x="519.7" y="453.9" width="3.3" height="3.4" fill="#d9d0c9"/><rect x="514.0" y="458.5" width="4.3" height="3.4" fill="#d9d0c9"/><rect x="518.7" y="458.5" width="4.3" height="3.4" fill="#d9d0c9"/><rect x="513.4" y="465.4" width="10.2" height="9.2" fill="#ebe7e3"/><rect x="514.0" y="465.9" width="3.9" height="3.4" fill="#d9d0c9"/><rect x="519.3" y="465.9" width="3.7" height="3.4" fill="#d9d0c9"/><rect x="514.0" y="470.5" width="3.1" height="3.4" fill="#d9d0c9"/><rect x="519.6" y="470.5" width="3.4" height="3.4" fill="#d9d0c9"/><rect x="513.4" y="477.4" width="10.2" height="9.2" fill="#ebe7e3"/><rect x="514.0" y="477.9" width="3.5" height="3.4" fill="#d9d0c9"/><rect x="519.1" y="477.9" width="3.9" height="3.4" fill="#d9d0c9"/><rect x="519.6" y="482.5" width="3.4" height="3.4" fill="#d9d0c9"/><rect x="513.4" y="489.4" width="10.2" height="9.2" fill="#ebe7e3"/><rect x="514.0" y="489.9" width="4.3" height="3.4" fill="#d9d0c9"/><rect x="518.6" y="489.9" width="4.4" height="3.4" fill="#d9d0c9"/><rect x="519.5" y="494.5" width="3.5" height="3.4" fill="#d9d0c9"/><rect x="513.4" y="501.4" width="10.2" height="9.2" fill="#ebe7e3"/><rect x="514.0" y="501.9" width="4.3" height="3.4" fill="#d9d0c9"/><rect x="518.6" y="501.9" width="4.4" height="3.4" fill="#d9d0c9"/><rect x="513.4" y="513.4" width="10.2" height="9.2" fill="#ebe7e3"/><rect x="514.0" y="513.9" width="3.7" height="3.4" fill="#d9d0c9"/><rect x="514.0" y="518.5" width="3.2" height="3.4" fill="#d9d0c9"/><rect x="519.7" y="518.5" width="3.3" height="3.4" fill="#d9d0c9"/><rect x="513.4" y="525.4" width="10.2" height="9.2" fill="#ebe7e3"/><rect x="514.0" y="525.9" width="3.3" height="3.4" fill="#d9d0c9"/><rect x="519.8" y="525.9" width="3.2" height="3.4" fill="#d9d0c9"/><rect x="514.0" y="530.5" width="3.4" height="3.4" fill="#d9d0c9"/><rect x="518.4" y="530.5" width="4.6" height="3.4" fill="#d9d0c9"/><rect x="513.4" y="537.4" width="10.2" height="9.2" fill="#ebe7e3"/><rect x="514.0" y="537.9" width="4.2" height="3.4" fill="#d9d0c9"/><rect x="518.4" y="537.9" width="4.6" height="3.4" fill="#d9d0c9"/><rect x="514.0" y="542.5" width="4.0" height="3.4" fill="#d9d0c9"/><rect x="519.9" y="542.5" width="3.1" height="3.4" fill="#d9d0c9"/><rect x="513.4" y="549.4" width="10.2" height="9.2" fill="#ebe7e3"/><rect x="514.0" y="549.9" width="3.8" height="3.4" fill="#d9d0c9"/><rect x="518.4" y="549.9" width="4.6" height="3.4" fill="#d9d0c9"/><rect x="514.0" y="554.5" width="3.4" height="3.4" fill="#d9d0c9"/><rect x="519.0" y="554.5" width="4.0" height="3.4" fill="#d9d0c9"/><rect x="513.4" y="561.4" width="10.2" height="9.2" fill="#ebe7e3"/><rect x="518.5" y="561.9" width="4.5" height="3.4" fill="#d9d0c9"/><rect x="514.0" y="566.5" width="4.2" height="3.4" fill="#d9d0c9"/><rect x="520.0" y="566.5" width="3.0" height="3.4" fill="#d9d0c9"/><rect x="513.4" y="573.4" width="10.2" height="9.2" fill="#ebe7e3"/><rect x="514.0" y="573.9" width="3.5" height="3.4" fill="#d9d0c9"/><rect x="519.1" y="573.9" width="3.9" height="3.4" fill="#d9d0c9"/><rect x="514.0" y="578.5" width="3.8" height="3.4" fill="#d9d0c9"/><rect x="518.7" y="578.5" width="4.3" height="3.4" fill="#d9d0c9"/><rect x="513.4" y="585.4" width="10.2" height="9.2" fill="#ebe7e3"/><rect x="514.0" y="585.9" width="4.4" height="3.4" fill="#d9d0c9"/><rect x="519.4" y="585.9" width="3.6" height="3.4" fill="#d9d0c9"/><rect x="514.0" y="590.5" width="3.1" height="3.4" fill="#d9d0c9"/><rect x="520.0" y="590.5" width="3.0" height="3.4" fill="#d9d0c9"/><rect x="513.4" y="597.4" width="10.2" height="9.2" fill="#ebe7e3"/><rect x="514.0" y="597.9" width="4.3" height="3.4" fill="#d9d0c9"/><rect x="519.9" y="597.9" width="3.1" height="3.4" fill="#d9d0c9"/><rect x="514.0" y="602.5" width="4.2" height="3.4" fill="#d9d0c9"/><rect x="519.8" y="602.5" width="3.2" height="3.4" fill="#d9d0c9"/><rect x="513.4" y="609.4" width="10.2" height="9.2" fill="#ebe7e3"/><rect x="514.0" y="609.9" width="3.9" height="3.4" fill="#d9d0c9"/><rect x="514.0" y="614.5" width="3.9" height="3.4" fill="#d9d0c9"/><rect x="519.4" y="614.5" width="3.6" height="3.4" fill="#d9d0c9"/><rect x="513.4" y="621.4" width="10.2" height="9.2" fill="#ebe7e3"/><rect x="514.0" y="621.9" width="3.4" height="3.4" fill="#d9d0c9"/><rect x="519.9" y="621.9" width="3.1" height="3.4" fill="#d9d0c9"/><rect x="514.0" y="626.5" width="3.9" height="3.4" fill="#d9d0c9"/><rect x="518.7" y="626.5" width="4.3" height="3.4" fill="#d9d0c9"/><rect x="513.4" y="633.4" width="10.2" height="9.2" fill="#ebe7e3"/><rect x="514.0" y="633.9" width="3.2" height="3.4" fill="#d9d0c9"/><rect x="518.5" y="633.9" width="4.5" height="3.4" fill="#d9d0c9"/><rect x="514.0" y="638.5" width="4.3" height="3.4" fill="#d9d0c9"/><rect x="519.1" y="638.5" width="3.9" height="3.4" fill="#d9d0c9"/><rect x="513.4" y="645.4" width="10.2" height="9.2" fill="#ebe7e3"/><rect x="514.0" y="645.9" width="3.5" height="3.4" fill="#d9d0c9"/><rect x="518.8" y="645.9" width="4.2" height="3.4" fill="#d9d0c9"/><rect x="514.0" y="650.5" width="3.1" height="3.4" fill="#d9d0c9"/><rect x="518.9" y="650.5" width="4.1" height="3.4" fill="#d9d0c9"/><rect x="513.4" y="657.4" width="10.2" height="9.2" fill="#ebe7e3"/><rect x="514.0" y="657.9" width="3.0" height="3.4" fill="#d9d0c9"/><rect x="518.8" y="657.9" width="4.2" height="3.4" fill="#d9d0c9"/><rect x="514.0" y="662.5" width="3.5" height="3.4" fill="#d9d0c9"/><rect x="518.7" y="662.5" width="4.3" height="3.4" fill="#d9d0c9"/><rect x="513.4" y="669.4" width="10.2" height="9.2" fill="#ebe7e3"/><rect x="518.9" y="669.9" width="4.1" height="3.4" fill="#d9d0c9"/><rect x="514.0" y="674.5" width="4.5" height="3.4" fill="#d9d0c9"/><rect x="518.6" y="674.5" width="4.4" height="3.4" fill="#d9d0c9"/><rect x="513.4" y="681.4" width="10.2" height="9.2" fill="#ebe7e3"/><rect x="514.0" y="681.9" width="3.6" height="3.4" fill="#d9d0c9"/><rect x="519.2" y="681.9" width="3.8" height="3.4" fill="#d9d0c9"/><rect x="514.0" y="686.5" width="4.6" height="3.4" fill="#d9d0c9"/><rect x="518.6" y="686.5" width="4.4" height="3.4" fill="#d9d0c9"/><rect x="513.4" y="693.4" width="10.2" height="9.2" fill="#ebe7e3"/><rect x="514.0" y="693.9" width="4.2" height="3.4" fill="#d9d0c9"/><rect x="519.9" y="693.9" width="3.1" height="3.4" fill="#d9d0c9"/><rect x="514.0" y="698.5" width="3.8" height="3.4" fill="#d9d0c9"/><rect x="513.4" y="705.4" width="10.2" height="13.2" fill="#ebe7e3"/><rect x="514.0" y="705.9" width="3.6" height="5.4" fill="#d9d0c9"/><rect x="519.9" y="705.9" width="3.1" height="5.4" fill="#d9d0c9"/><rect x="514.0" y="712.5" width="3.5" height="5.4" fill="#d9d0c9"/><rect x="519.0" y="712.5" width="4.0" height="5.4" fill="#d9d0c9"/><rect x="526.4" y="441.4" width="12.2" height="9.2" fill="#ebe7e3"/><rect x="527.0" y="441.9" width="3.4" height="3.4" fill="#d9d0c9"/><rect x="527.0" y="446.5" width="4.5" height="3.4" fill="#d9d0c9"/><rect x="533.7" y="446.5" width="4.3" height="3.4" fill="#d9d0c9"/><rect x="526.4" y="453.4" width="12.2" height="9.2" fill="#ebe7e3"/><rect x="527.0" y="453.9" width="5.3" height="3.4" fill="#d9d0c9"/><rect x="527.0" y="458.5" width="5.0" height="3.4" fill="#d9d0c9"/><rect x="534.2" y="458.5" width="3.8" height="3.4" fill="#d9d0c9"/><rect x="526.4" y="465.4" width="12.2" height="9.2" fill="#ebe7e3"/><rect x="527.0" y="465.9" width="3.7" height="3.4" fill="#d9d0c9"/><rect x="534.8" y="465.9" width="3.2" height="3.4" fill="#d9d0c9"/><rect x="527.0" y="470.5" width="4.8" height="3.4" fill="#d9d0c9"/><rect x="533.2" y="470.5" width="4.8" height="3.4" fill="#d9d0c9"/><rect x="526.4" y="477.4" width="12.2" height="9.2" fill="#ebe7e3"/><rect x="527.0" y="477.9" width="4.6" height="3.4" fill="#d9d0c9"/><rect x="527.0" y="482.5" width="4.4" height="3.4" fill="#d9d0c9"/><rect x="533.8" y="482.5" width="4.2" height="3.4" fill="#d9d0c9"/><rect x="526.4" y="489.4" width="12.2" height="9.2" fill="#ebe7e3"/><rect x="532.8" y="489.9" width="5.2" height="3.4" fill="#d9d0c9"/><rect x="527.0" y="494.5" width="3.5" height="3.4" fill="#d9d0c9"/><rect x="534.4" y="494.5" width="3.6" height="3.4" fill="#d9d0c9"/><rect x="526.4" y="501.4" width="12.2" height="9.2" fill="#ebe7e3"/><rect x="527.0" y="506.5" width="5.2" height="3.4" fill="#d9d0c9"/><rect x="533.5" y="506.5" width="4.5" height="3.4" fill="#d9d0c9"/><rect x="526.4" y="513.4" width="12.2" height="9.2" fill="#ebe7e3"/><rect x="527.0" y="513.9" width="5.1" height="3.4" fill="#d9d0c9"/><rect x="534.1" y="513.9" width="3.9" height="3.4" fill="#d9d0c9"/><rect x="527.0" y="518.5" width="5.3" height="3.4" fill="#d9d0c9"/><rect x="533.4" y="518.5" width="4.6" height="3.4" fill="#d9d0c9"/><rect x="526.4" y="525.4" width="12.2" height="9.2" fill="#ebe7e3"/><rect x="527.0" y="525.9" width="3.2" height="3.4" fill="#d9d0c9"/><rect x="534.4" y="525.9" width="3.6" height="3.4" fill="#d9d0c9"/><rect x="527.0" y="530.5" width="4.6" height="3.4" fill="#d9d0c9"/><rect x="532.7" y="530.5" width="5.3" height="3.4" fill="#d9d0c9"/><rect x="526.4" y="537.4" width="12.2" height="9.2" fill="#ebe7e3"/><rect x="534.8" y="537.9" width="3.2" height="3.4" fill="#d9d0c9"/><rect x="527.0" y="542.5" width="5.3" height="3.4" fill="#d9d0c9"/><rect x="533.0" y="542.5" width="5.0" height="3.4" fill="#d9d0c9"/><rect x="526.4" y="549.4" width="12.2" height="9.2" fill="#ebe7e3"/><rect x="527.0" y="549.9" width="3.9" height="3.4" fill="#d9d0c9"/><rect x="534.3" y="549.9" width="3.7" height="3.4" fill="#d9d0c9"/><rect x="527.0" y="554.5" width="4.5" height="3.4" fill="#d9d0c9"/><rect x="534.9" y="554.5" width="3.1" height="3.4" fill="#d9d0c9"/><rect x="526.4" y="561.4" width="12.2" height="9.2" fill="#ebe7e3"/><rect x="527.0" y="561.9" width="5.5" height="3.4" fill="#d9d0c9"/><rect x="534.3" y="561.9" width="3.7" height="3.4" fill="#d9d0c9"/><rect x="527.0" y="566.5" width="4.5" height="3.4" fill="#d9d0c9"/><rect x="533.8" y="566.5" width="4.2" height="3.4" fill="#d9d0c9"/><rect x="526.4" y="573.4" width="12.2" height="9.2" fill="#ebe7e3"/><rect x="527.0" y="573.9" width="4.0" height="3.4" fill="#d9d0c9"/><rect x="534.3" y="573.9" width="3.7" height="3.4" fill="#d9d0c9"/><rect x="527.0" y="578.5" width="4.7" height="3.4" fill="#d9d0c9"/><rect x="526.4" y="585.4" width="12.2" height="9.2" fill="#ebe7e3"/><rect x="532.5" y="585.9" width="5.5" height="3.4" fill="#d9d0c9"/><rect x="527.0" y="590.5" width="4.7" height="3.4" fill="#d9d0c9"/><rect x="534.5" y="590.5" width="3.5" height="3.4" fill="#d9d0c9"/><rect x="526.4" y="597.4" width="12.2" height="9.2" fill="#ebe7e3"/><rect x="527.0" y="597.9" width="3.0" height="3.4" fill="#d9d0c9"/><rect x="534.9" y="597.9" width="3.1" height="3.4" fill="#d9d0c9"/><rect x="526.4" y="609.4" width="12.2" height="9.2" fill="#ebe7e3"/><rect x="527.0" y="609.9" width="4.2" height="3.4" fill="#d9d0c9"/><rect x="534.8" y="609.9" width="3.2" height="3.4" fill="#d9d0c9"/><rect x="532.5" y="614.5" width="5.5" height="3.4" fill="#d9d0c9"/><rect x="526.4" y="621.4" width="12.2" height="9.2" fill="#ebe7e3"/><rect x="527.0" y="621.9" width="3.3" height="3.4" fill="#d9d0c9"/><rect x="532.8" y="621.9" width="5.2" height="3.4" fill="#d9d0c9"/><rect x="526.4" y="633.4" width="12.2" height="9.2" fill="#ebe7e3"/><rect x="527.0" y="633.9" width="5.4" height="3.4" fill="#d9d0c9"/><rect x="532.9" y="633.9" width="5.1" height="3.4" fill="#d9d0c9"/><rect x="527.0" y="638.5" width="4.8" height="3.4" fill="#d9d0c9"/><rect x="532.8" y="638.5" width="5.2" height="3.4" fill="#d9d0c9"/><rect x="526.4" y="645.4" width="12.2" height="9.2" fill="#ebe7e3"/><rect x="527.0" y="645.9" width="4.9" height="3.4" fill="#d9d0c9"/><rect x="533.3" y="645.9" width="4.7" height="3.4" fill="#d9d0c9"/><rect x="527.0" y="650.5" width="4.4" height="3.4" fill="#d9d0c9"/><rect x="533.6" y="650.5" width="4.4" height="3.4" fill="#d9d0c9"/><rect x="526.4" y="657.4" width="12.2" height="9.2" fill="#ebe7e3"/><rect x="532.8" y="657.9" width="5.2" height="3.4" fill="#d9d0c9"/><rect x="527.0" y="662.5" width="4.2" height="3.4" fill="#d9d0c9"/><rect x="533.1" y="662.5" width="4.9" height="3.4" fill="#d9d0c9"/><rect x="526.4" y="669.4" width="12.2" height="9.2" fill="#ebe7e3"/><rect x="527.0" y="669.9" width="4.7" height="3.4" fill="#d9d0c9"/><rect x="535.0" y="669.9" width="3.0" height="3.4" fill="#d9d0c9"/><rect x="527.0" y="674.5" width="4.1" height="3.4" fill="#d9d0c9"/><rect x="535.0" y="674.5" width="3.0" height="3.4" fill="#d9d0c9"/><rect x="526.4" y="681.4" width="12.2" height="9.2" fill="#ebe7e3"/><rect x="527.0" y="681.9" width="3.8" height="3.4" fill="#d9d0c9"/><rect x="533.4" y="681.9" width="4.6" height="3.4" fill="#d9d0c9"/><rect x="527.0" y="686.5" width="4.6" height="3.4" fill="#d9d0c9"/><rect x="534.7" y="686.5" width="3.3" height="3.4" fill="#d9d0c9"/><rect x="526.4" y="693.4" width="12.2" height="9.2" fill="#ebe7e3"/><rect x="527.0" y="693.9" width="4.0" height="3.4" fill="#d9d0c9"/><rect x="533.2" y="693.9" width="4.8" height="3.4" fill="#d9d0c9"/><rect x="527.0" y="698.5" width="5.2" height="3.4" fill="#d9d0c9"/><rect x="533.2" y="698.5" width="4.8" height="3.4" fill="#d9d0c9"/><rect x="526.4" y="705.4" width="12.2" height="13.2" fill="#ebe7e3"/><rect x="527.0" y="705.9" width="4.3" height="5.4" fill="#d9d0c9"/><rect x="532.9" y="705.9" width="5.1" height="5.4" fill="#d9d0c9"/><rect x="527.0" y="712.5" width="3.4" height="5.4" fill="#d9d0c9"/></g>
<clipPath id="ne"><polygon points="560,232 590,204 640,178 671,164 732,145 732,266 560,264"/></clipPath>
<g clip-path="url(#ne)"><g transform="rotate(-15 660 210)"><rect x="541.4" y="111.4" width="13.2" height="13.2" fill="#eddfdd"/><rect x="542.0" y="112.0" width="5.4" height="12.0" fill="#dbd2cb"/><rect x="548.6" y="112.0" width="5.4" height="12.0" fill="#d5cbc3"/><rect x="541.4" y="127.4" width="13.2" height="13.2" fill="#e9e1dd"/><rect x="541.4" y="143.4" width="13.2" height="13.2" fill="#eddfdd"/><rect x="542.0" y="144.0" width="12.0" height="12.0" fill="#d9d0c9"/><rect x="541.4" y="159.4" width="13.2" height="13.2" fill="#e9e1dd"/><rect x="541.4" y="175.4" width="13.2" height="13.2" fill="#e9e1dd"/><rect x="542.0" y="176.0" width="12.0" height="12.0" fill="#d9d0c9"/><rect x="541.4" y="191.4" width="13.2" height="13.2" fill="#e8e3df"/><rect x="541.4" y="207.4" width="13.2" height="13.2" fill="#e8e3df"/><rect x="542.0" y="208.0" width="12.0" height="12.0" fill="#cfc5bd"/><rect x="541.4" y="223.4" width="13.2" height="13.2" fill="#e8e3df"/><rect x="542.0" y="224.0" width="5.4" height="12.0" fill="#dbd2cb"/><rect x="541.4" y="239.4" width="13.2" height="13.2" fill="#eddfdd"/><rect x="541.4" y="255.4" width="13.2" height="13.2" fill="#e8e3df"/><rect x="542.0" y="256.0" width="12.0" height="12.0" fill="#d9d0c9"/><rect x="541.4" y="271.4" width="13.2" height="13.2" fill="#eddfdd"/><rect x="542.0" y="272.0" width="5.4" height="12.0" fill="#d9d0c9"/><rect x="548.6" y="272.0" width="5.4" height="12.0" fill="#d9d0c9"/><rect x="541.4" y="287.4" width="13.2" height="13.2" fill="#e9e1dd"/><rect x="542.0" y="288.0" width="5.4" height="5.4" fill="#dbd2cb"/><rect x="542.0" y="294.6" width="5.4" height="5.4" fill="#d9d0c9"/><rect x="548.6" y="288.0" width="5.4" height="5.4" fill="#d9d0c9"/><rect x="548.6" y="294.6" width="5.4" height="5.4" fill="#d5cbc3"/><rect x="557.4" y="111.4" width="13.2" height="13.2" fill="#e9e1dd"/><rect x="558.0" y="112.0" width="5.4" height="12.0" fill="#cfc5bd"/><rect x="564.6" y="112.0" width="5.4" height="12.0" fill="#cfc5bd"/><rect x="557.4" y="127.4" width="13.2" height="13.2" fill="#e9e1dd"/><rect x="558.0" y="128.0" width="5.4" height="12.0" fill="#d9d0c9"/><rect x="564.6" y="128.0" width="5.4" height="12.0" fill="#d9d0c9"/><rect x="557.4" y="143.4" width="13.2" height="13.2" fill="#eddfdd"/><rect x="557.4" y="159.4" width="13.2" height="13.2" fill="#eddfdd"/><rect x="557.4" y="175.4" width="13.2" height="13.2" fill="#e9e1dd"/><rect x="558.0" y="176.0" width="5.4" height="12.0" fill="#d9d0c9"/><rect x="564.6" y="176.0" width="5.4" height="12.0" fill="#cfc5bd"/><rect x="557.4" y="191.4" width="13.2" height="13.2" fill="#e6e2de"/><rect x="564.6" y="192.0" width="5.4" height="12.0" fill="#cfc5bd"/><rect x="557.4" y="207.4" width="13.2" height="13.2" fill="#e6e2de"/><rect x="558.0" y="208.0" width="12.0" height="12.0" fill="#d9d0c9"/><rect x="557.4" y="223.4" width="13.2" height="13.2" fill="#e9e1dd"/><rect x="557.4" y="239.4" width="13.2" height="13.2" fill="#e9e1dd"/><rect x="558.0" y="246.6" width="5.4" height="5.4" fill="#d9d0c9"/><rect x="564.6" y="240.0" width="5.4" height="5.4" fill="#d9d0c9"/><rect x="564.6" y="246.6" width="5.4" height="5.4" fill="#d9d0c9"/><rect x="557.4" y="255.4" width="13.2" height="13.2" fill="#e6e2de"/><rect x="558.0" y="256.0" width="12.0" height="5.4" fill="#d5cbc3"/><rect x="558.0" y="262.6" width="12.0" height="5.4" fill="#cfc5bd"/><rect x="557.4" y="271.4" width="13.2" height="13.2" fill="#e8e3df"/><rect x="558.0" y="272.0" width="12.0" height="12.0" fill="#dbd2cb"/><rect x="557.4" y="287.4" width="13.2" height="13.2" fill="#eddfdd"/><rect x="564.6" y="288.0" width="5.4" height="12.0" fill="#d9d0c9"/><rect x="573.4" y="111.4" width="13.2" height="13.2" fill="#e6e2de"/><rect x="573.4" y="127.4" width="13.2" height="13.2" fill="#e8e3df"/><rect x="573.4" y="143.4" width="13.2" height="13.2" fill="#e9e1dd"/><rect x="580.6" y="144.0" width="5.4" height="12.0" fill="#dbd2cb"/><rect x="573.4" y="159.4" width="13.2" height="13.2" fill="#eddfdd"/><rect x="573.4" y="175.4" width="13.2" height="13.2" fill="#e6e2de"/><rect x="574.0" y="176.0" width="5.4" height="12.0" fill="#d5cbc3"/><rect x="580.6" y="176.0" width="5.4" height="12.0" fill="#cfc5bd"/><rect x="573.4" y="191.4" width="13.2" height="13.2" fill="#e6e2de"/><rect x="574.0" y="192.0" width="5.4" height="12.0" fill="#d9d0c9"/><rect x="580.6" y="192.0" width="5.4" height="12.0" fill="#cfc5bd"/><rect x="573.4" y="207.4" width="13.2" height="13.2" fill="#e6e2de"/><rect x="573.4" y="223.4" width="13.2" height="13.2" fill="#e9e1dd"/><rect x="574.0" y="224.0" width="12.0" height="5.4" fill="#d9d0c9"/><rect x="574.0" y="230.6" width="12.0" height="5.4" fill="#d9d0c9"/><rect x="573.4" y="239.4" width="13.2" height="13.2" fill="#e6e2de"/><rect x="574.0" y="240.0" width="12.0" height="12.0" fill="#dbd2cb"/><rect x="573.4" y="255.4" width="13.2" height="13.2" fill="#eddfdd"/><rect x="574.0" y="262.6" width="5.4" height="5.4" fill="#d5cbc3"/><rect x="580.6" y="256.0" width="5.4" height="5.4" fill="#cfc5bd"/><rect x="580.6" y="262.6" width="5.4" height="5.4" fill="#d9d0c9"/><rect x="573.4" y="271.4" width="13.2" height="13.2" fill="#eddfdd"/><rect x="574.0" y="278.6" width="12.0" height="5.4" fill="#d5cbc3"/><rect x="573.4" y="287.4" width="13.2" height="13.2" fill="#eddfdd"/><rect x="574.0" y="288.0" width="5.4" height="12.0" fill="#d9d0c9"/><rect x="580.6" y="288.0" width="5.4" height="12.0" fill="#d9d0c9"/><rect x="589.4" y="111.4" width="13.2" height="13.2" fill="#e6e2de"/><rect x="590.0" y="112.0" width="12.0" height="5.4" fill="#cfc5bd"/><rect x="590.0" y="118.6" width="12.0" height="5.4" fill="#d9d0c9"/><rect x="589.4" y="127.4" width="13.2" height="13.2" fill="#e9e1dd"/><rect x="590.0" y="128.0" width="5.4" height="12.0" fill="#d9d0c9"/><rect x="596.6" y="128.0" width="5.4" height="12.0" fill="#d9d0c9"/><rect x="589.4" y="143.4" width="13.2" height="13.2" fill="#eddfdd"/><rect x="589.4" y="159.4" width="13.2" height="13.2" fill="#e6e2de"/><rect x="590.0" y="160.0" width="5.4" height="5.4" fill="#d5cbc3"/><rect x="590.0" y="166.6" width="5.4" height="5.4" fill="#d9d0c9"/><rect x="596.6" y="160.0" width="5.4" height="5.4" fill="#dbd2cb"/><rect x="596.6" y="166.6" width="5.4" height="5.4" fill="#cfc5bd"/><rect x="589.4" y="175.4" width="13.2" height="13.2" fill="#e6e2de"/><rect x="590.0" y="176.0" width="12.0" height="5.4" fill="#d9d0c9"/><rect x="590.0" y="182.6" width="12.0" height="5.4" fill="#d9d0c9"/><rect x="589.4" y="191.4" width="13.2" height="13.2" fill="#e8e3df"/><rect x="590.0" y="192.0" width="12.0" height="12.0" fill="#cfc5bd"/><rect x="589.4" y="207.4" width="13.2" height="13.2" fill="#e8e3df"/><rect x="589.4" y="223.4" width="13.2" height="13.2" fill="#e9e1dd"/><rect x="589.4" y="239.4" width="13.2" height="13.2" fill="#e6e2de"/><rect x="590.0" y="240.0" width="5.4" height="12.0" fill="#d9d0c9"/><rect x="596.6" y="240.0" width="5.4" height="12.0" fill="#d5cbc3"/><rect x="589.4" y="255.4" width="13.2" height="13.2" fill="#e6e2de"/><rect x="590.0" y="256.0" width="5.4" height="12.0" fill="#d9d0c9"/><rect x="596.6" y="256.0" width="5.4" height="12.0" fill="#d9d0c9"/><rect x="589.4" y="271.4" width="13.2" height="13.2" fill="#eddfdd"/><rect x="590.0" y="272.0" width="5.4" height="12.0" fill="#d9d0c9"/><rect x="596.6" y="272.0" width="5.4" height="12.0" fill="#cfc5bd"/><rect x="589.4" y="287.4" width="13.2" height="13.2" fill="#e9e1dd"/><rect x="590.0" y="294.6" width="5.4" height="5.4" fill="#d9d0c9"/><rect x="596.6" y="288.0" width="5.4" height="5.4" fill="#d5cbc3"/><rect x="596.6" y="294.6" width="5.4" height="5.4" fill="#d9d0c9"/><rect x="605.4" y="111.4" width="13.2" height="13.2" fill="#e9e1dd"/><rect x="605.4" y="127.4" width="13.2" height="13.2" fill="#e8e3df"/><rect x="605.4" y="143.4" width="13.2" height="13.2" fill="#e8e3df"/><rect x="606.0" y="144.0" width="5.4" height="5.4" fill="#cfc5bd"/><rect x="606.0" y="150.6" width="5.4" height="5.4" fill="#cfc5bd"/><rect x="612.6" y="150.6" width="5.4" height="5.4" fill="#d5cbc3"/><rect x="605.4" y="159.4" width="13.2" height="13.2" fill="#e8e3df"/><rect x="606.0" y="160.0" width="5.4" height="12.0" fill="#d9d0c9"/><rect x="612.6" y="160.0" width="5.4" height="12.0" fill="#dbd2cb"/><rect x="605.4" y="175.4" width="13.2" height="13.2" fill="#e9e1dd"/><rect x="605.4" y="191.4" width="13.2" height="13.2" fill="#eddfdd"/><rect x="606.0" y="192.0" width="12.0" height="12.0" fill="#dbd2cb"/><rect x="605.4" y="207.4" width="13.2" height="13.2" fill="#e9e1dd"/><rect x="606.0" y="208.0" width="12.0" height="12.0" fill="#d5cbc3"/><rect x="605.4" y="223.4" width="13.2" height="13.2" fill="#e6e2de"/><rect x="606.0" y="224.0" width="5.4" height="12.0" fill="#cfc5bd"/><rect x="612.6" y="224.0" width="5.4" height="12.0" fill="#d9d0c9"/><rect x="605.4" y="239.4" width="13.2" height="13.2" fill="#e6e2de"/><rect x="606.0" y="240.0" width="5.4" height="5.4" fill="#d9d0c9"/><rect x="612.6" y="240.0" width="5.4" height="5.4" fill="#d9d0c9"/><rect x="612.6" y="246.6" width="5.4" height="5.4" fill="#cfc5bd"/><rect x="605.4" y="255.4" width="13.2" height="13.2" fill="#eddfdd"/><rect x="606.0" y="256.0" width="12.0" height="5.4" fill="#d5cbc3"/><rect x="606.0" y="262.6" width="12.0" height="5.4" fill="#d9d0c9"/><rect x="605.4" y="271.4" width="13.2" height="13.2" fill="#e6e2de"/><rect x="606.0" y="272.0" width="5.4" height="12.0" fill="#d9d0c9"/><rect x="612.6" y="272.0" width="5.4" height="12.0" fill="#dbd2cb"/><rect x="605.4" y="287.4" width="13.2" height="13.2" fill="#e6e2de"/><rect x="606.0" y="288.0" width="5.4" height="5.4" fill="#d5cbc3"/><rect x="606.0" y="294.6" width="5.4" height="5.4" fill="#dbd2cb"/><rect x="612.6" y="288.0" width="5.4" height="5.4" fill="#d9d0c9"/><rect x="612.6" y="294.6" width="5.4" height="5.4" fill="#dbd2cb"/><rect x="621.4" y="111.4" width="13.2" height="13.2" fill="#e6e2de"/><rect x="621.4" y="127.4" width="13.2" height="13.2" fill="#eddfdd"/><rect x="622.0" y="128.0" width="12.0" height="12.0" fill="#d9d0c9"/><rect x="621.4" y="143.4" width="13.2" height="13.2" fill="#eddfdd"/><rect x="622.0" y="144.0" width="5.4" height="12.0" fill="#cfc5bd"/><rect x="628.6" y="144.0" width="5.4" height="12.0" fill="#cfc5bd"/><rect x="621.4" y="159.4" width="13.2" height="13.2" fill="#e6e2de"/><rect x="621.4" y="175.4" width="13.2" height="13.2" fill="#e6e2de"/><rect x="622.0" y="176.0" width="12.0" height="12.0" fill="#cfc5bd"/><rect x="621.4" y="191.4" width="13.2" height="13.2" fill="#e8e3df"/><rect x="622.0" y="192.0" width="5.4" height="12.0" fill="#cfc5bd"/><rect x="628.6" y="192.0" width="5.4" height="12.0" fill="#d5cbc3"/><rect x="621.4" y="207.4" width="13.2" height="13.2" fill="#e6e2de"/><rect x="622.0" y="208.0" width="5.4" height="12.0" fill="#d9d0c9"/><rect x="628.6" y="208.0" width="5.4" height="12.0" fill="#d9d0c9"/><rect x="621.4" y="223.4" width="13.2" height="13.2" fill="#e6e2de"/><rect x="622.0" y="224.0" width="12.0" height="12.0" fill="#dbd2cb"/><rect x="621.4" y="239.4" width="13.2" height="13.2" fill="#e8e3df"/><rect x="622.0" y="240.0" width="12.0" height="5.4" fill="#d9d0c9"/><rect x="622.0" y="246.6" width="12.0" height="5.4" fill="#dbd2cb"/><rect x="621.4" y="255.4" width="13.2" height="13.2" fill="#e6e2de"/><rect x="622.0" y="256.0" width="5.4" height="12.0" fill="#dbd2cb"/><rect x="628.6" y="256.0" width="5.4" height="12.0" fill="#d9d0c9"/><rect x="621.4" y="271.4" width="13.2" height="13.2" fill="#e8e3df"/><rect x="622.0" y="272.0" width="12.0" height="5.4" fill="#dbd2cb"/><rect x="622.0" y="278.6" width="12.0" height="5.4" fill="#d9d0c9"/><rect x="621.4" y="287.4" width="13.2" height="13.2" fill="#e6e2de"/><rect x="622.0" y="288.0" width="5.4" height="5.4" fill="#d9d0c9"/><rect x="622.0" y="294.6" width="5.4" height="5.4" fill="#d9d0c9"/><rect x="628.6" y="288.0" width="5.4" height="5.4" fill="#d5cbc3"/><rect x="628.6" y="294.6" width="5.4" height="5.4" fill="#cfc5bd"/><rect x="637.4" y="111.4" width="13.2" height="13.2" fill="#e9e1dd"/><rect x="638.0" y="112.0" width="5.4" height="5.4" fill="#d9d0c9"/><rect x="638.0" y="118.6" width="5.4" height="5.4" fill="#cfc5bd"/><rect x="644.6" y="112.0" width="5.4" height="5.4" fill="#d5cbc3"/><rect x="644.6" y="118.6" width="5.4" height="5.4" fill="#d9d0c9"/><rect x="637.4" y="127.4" width="13.2" height="13.2" fill="#e6e2de"/><rect x="638.0" y="128.0" width="12.0" height="12.0" fill="#d5cbc3"/><rect x="637.4" y="143.4" width="13.2" height="13.2" fill="#eddfdd"/><rect x="638.0" y="144.0" width="5.4" height="12.0" fill="#d5cbc3"/><rect x="644.6" y="144.0" width="5.4" height="12.0" fill="#dbd2cb"/><rect x="637.4" y="159.4" width="13.2" height="13.2" fill="#e9e1dd"/><rect x="638.0" y="160.0" width="5.4" height="12.0" fill="#d9d0c9"/><rect x="644.6" y="160.0" width="5.4" height="12.0" fill="#d9d0c9"/><rect x="637.4" y="175.4" width="13.2" height="13.2" fill="#e8e3df"/><rect x="638.0" y="176.0" width="5.4" height="12.0" fill="#d5cbc3"/><rect x="644.6" y="176.0" width="5.4" height="12.0" fill="#d9d0c9"/><rect x="637.4" y="191.4" width="13.2" height="13.2" fill="#eddfdd"/><rect x="638.0" y="192.0" width="12.0" height="12.0" fill="#dbd2cb"/><rect x="637.4" y="207.4" width="13.2" height="13.2" fill="#e9e1dd"/><rect x="637.4" y="223.4" width="13.2" height="13.2" fill="#e6e2de"/><rect x="638.0" y="224.0" width="12.0" height="12.0" fill="#cfc5bd"/><rect x="637.4" y="239.4" width="13.2" height="13.2" fill="#eddfdd"/><rect x="638.0" y="240.0" width="12.0" height="12.0" fill="#d5cbc3"/><rect x="637.4" y="255.4" width="13.2" height="13.2" fill="#e8e3df"/><rect x="638.0" y="256.0" width="12.0" height="12.0" fill="#d5cbc3"/><rect x="637.4" y="271.4" width="13.2" height="13.2" fill="#e6e2de"/><rect x="638.0" y="272.0" width="5.4" height="5.4" fill="#d5cbc3"/><rect x="638.0" y="278.6" width="5.4" height="5.4" fill="#d5cbc3"/><rect x="644.6" y="272.0" width="5.4" height="5.4" fill="#d9d0c9"/><rect x="644.6" y="278.6" width="5.4" height="5.4" fill="#d9d0c9"/><rect x="637.4" y="287.4" width="13.2" height="13.2" fill="#e9e1dd"/><rect x="638.0" y="288.0" width="5.4" height="5.4" fill="#dbd2cb"/><rect x="638.0" y="294.6" width="5.4" height="5.4" fill="#dbd2cb"/><rect x="644.6" y="288.0" width="5.4" height="5.4" fill="#d9d0c9"/><rect x="644.6" y="294.6" width="5.4" height="5.4" fill="#cfc5bd"/><rect x="653.4" y="111.4" width="13.2" height="13.2" fill="#e8e3df"/><rect x="653.4" y="127.4" width="13.2" height="13.2" fill="#e9e1dd"/><rect x="654.0" y="128.0" width="12.0" height="12.0" fill="#d9d0c9"/><rect x="653.4" y="143.4" width="13.2" height="13.2" fill="#e6e2de"/><rect x="654.0" y="144.0" width="12.0" height="5.4" fill="#d9d0c9"/><rect x="654.0" y="150.6" width="12.0" height="5.4" fill="#d9d0c9"/><rect x="653.4" y="159.4" width="13.2" height="13.2" fill="#e8e3df"/><rect x="654.0" y="160.0" width="5.4" height="12.0" fill="#dbd2cb"/><rect x="660.6" y="160.0" width="5.4" height="12.0" fill="#dbd2cb"/><rect x="653.4" y="175.4" width="13.2" height="13.2" fill="#eddfdd"/><rect x="654.0" y="176.0" width="5.4" height="12.0" fill="#d9d0c9"/><rect x="660.6" y="176.0" width="5.4" height="12.0" fill="#cfc5bd"/><rect x="653.4" y="191.4" width="13.2" height="13.2" fill="#eddfdd"/><rect x="654.0" y="192.0" width="5.4" height="12.0" fill="#d9d0c9"/><rect x="660.6" y="192.0" width="5.4" height="12.0" fill="#d9d0c9"/><rect x="653.4" y="207.4" width="13.2" height="13.2" fill="#e6e2de"/><rect x="654.0" y="208.0" width="12.0" height="5.4" fill="#cfc5bd"/><rect x="654.0" y="214.6" width="12.0" height="5.4" fill="#d9d0c9"/><rect x="653.4" y="223.4" width="13.2" height="13.2" fill="#eddfdd"/><rect x="654.0" y="224.0" width="5.4" height="12.0" fill="#d9d0c9"/><rect x="660.6" y="224.0" width="5.4" height="12.0" fill="#d9d0c9"/><rect x="653.4" y="239.4" width="13.2" height="13.2" fill="#eddfdd"/><rect x="653.4" y="255.4" width="13.2" height="13.2" fill="#e8e3df"/><rect x="653.4" y="271.4" width="13.2" height="13.2" fill="#e8e3df"/><rect x="654.0" y="272.0" width="5.4" height="12.0" fill="#d9d0c9"/><rect x="660.6" y="272.0" width="5.4" height="12.0" fill="#dbd2cb"/><rect x="653.4" y="287.4" width="13.2" height="13.2" fill="#eddfdd"/><rect x="669.4" y="111.4" width="13.2" height="13.2" fill="#e8e3df"/><rect x="670.0" y="112.0" width="12.0" height="5.4" fill="#cfc5bd"/><rect x="670.0" y="118.6" width="12.0" height="5.4" fill="#d5cbc3"/><rect x="669.4" y="127.4" width="13.2" height="13.2" fill="#eddfdd"/><rect x="669.4" y="143.4" width="13.2" height="13.2" fill="#e8e3df"/><rect x="669.4" y="159.4" width="13.2" height="13.2" fill="#e9e1dd"/><rect x="669.4" y="175.4" width="13.2" height="13.2" fill="#eddfdd"/><rect x="670.0" y="176.0" width="12.0" height="12.0" fill="#cfc5bd"/><rect x="669.4" y="191.4" width="13.2" height="13.2" fill="#eddfdd"/><rect x="670.0" y="192.0" width="12.0" height="12.0" fill="#dbd2cb"/><rect x="669.4" y="207.4" width="13.2" height="13.2" fill="#e9e1dd"/><rect x="670.0" y="208.0" width="12.0" height="12.0" fill="#d5cbc3"/><rect x="669.4" y="223.4" width="13.2" height="13.2" fill="#e9e1dd"/><rect x="669.4" y="239.4" width="13.2" height="13.2" fill="#e6e2de"/><rect x="670.0" y="240.0" width="12.0" height="12.0" fill="#cfc5bd"/><rect x="669.4" y="255.4" width="13.2" height="13.2" fill="#eddfdd"/><rect x="669.4" y="271.4" width="13.2" height="13.2" fill="#e6e2de"/><rect x="670.0" y="272.0" width="5.4" height="12.0" fill="#d5cbc3"/><rect x="676.6" y="272.0" width="5.4" height="12.0" fill="#cfc5bd"/><rect x="669.4" y="287.4" width="13.2" height="13.2" fill="#e8e3df"/><rect x="670.0" y="288.0" width="5.4" height="5.4" fill="#dbd2cb"/><rect x="670.0" y="294.6" width="5.4" height="5.4" fill="#d5cbc3"/><rect x="676.6" y="288.0" width="5.4" height="5.4" fill="#dbd2cb"/><rect x="676.6" y="294.6" width="5.4" height="5.4" fill="#d5cbc3"/><rect x="685.4" y="111.4" width="13.2" height="13.2" fill="#e8e3df"/><rect x="686.0" y="112.0" width="12.0" height="12.0" fill="#cfc5bd"/><rect x="685.4" y="127.4" width="13.2" height="13.2" fill="#e8e3df"/><rect x="685.4" y="143.4" width="13.2" height="13.2" fill="#eddfdd"/><rect x="686.0" y="144.0" width="5.4" height="12.0" fill="#dbd2cb"/><rect x="692.6" y="144.0" width="5.4" height="12.0" fill="#d9d0c9"/><rect x="685.4" y="159.4" width="13.2" height="13.2" fill="#e6e2de"/><rect x="686.0" y="160.0" width="12.0" height="12.0" fill="#cfc5bd"/><rect x="685.4" y="175.4" width="13.2" height="13.2" fill="#e9e1dd"/><rect x="685.4" y="191.4" width="13.2" height="13.2" fill="#e6e2de"/><rect x="685.4" y="207.4" width="13.2" height="13.2" fill="#e6e2de"/><rect x="685.4" y="223.4" width="13.2" height="13.2" fill="#eddfdd"/><rect x="685.4" y="239.4" width="13.2" height="13.2" fill="#eddfdd"/><rect x="686.0" y="240.0" width="5.4" height="12.0" fill="#d9d0c9"/><rect x="692.6" y="240.0" width="5.4" height="12.0" fill="#dbd2cb"/><rect x="685.4" y="255.4" width="13.2" height="13.2" fill="#e6e2de"/><rect x="692.6" y="256.0" width="5.4" height="12.0" fill="#d9d0c9"/><rect x="685.4" y="271.4" width="13.2" height="13.2" fill="#e9e1dd"/><rect x="685.4" y="287.4" width="13.2" height="13.2" fill="#e6e2de"/><rect x="686.0" y="288.0" width="5.4" height="5.4" fill="#cfc5bd"/><rect x="692.6" y="288.0" width="5.4" height="5.4" fill="#d5cbc3"/><rect x="692.6" y="294.6" width="5.4" height="5.4" fill="#d9d0c9"/><rect x="701.4" y="111.4" width="13.2" height="13.2" fill="#eddfdd"/><rect x="702.0" y="112.0" width="12.0" height="12.0" fill="#cfc5bd"/><rect x="701.4" y="127.4" width="13.2" height="13.2" fill="#e8e3df"/><rect x="702.0" y="128.0" width="12.0" height="12.0" fill="#d9d0c9"/><rect x="701.4" y="143.4" width="13.2" height="13.2" fill="#e9e1dd"/><rect x="702.0" y="144.0" width="12.0" height="12.0" fill="#d5cbc3"/><rect x="701.4" y="159.4" width="13.2" height="13.2" fill="#e6e2de"/><rect x="702.0" y="160.0" width="5.4" height="5.4" fill="#d9d0c9"/><rect x="708.6" y="160.0" width="5.4" height="5.4" fill="#d9d0c9"/><rect x="708.6" y="166.6" width="5.4" height="5.4" fill="#dbd2cb"/><rect x="701.4" y="175.4" width="13.2" height="13.2" fill="#eddfdd"/><rect x="702.0" y="176.0" width="5.4" height="12.0" fill="#d9d0c9"/><rect x="708.6" y="176.0" width="5.4" height="12.0" fill="#d5cbc3"/><rect x="701.4" y="191.4" width="13.2" height="13.2" fill="#e8e3df"/><rect x="702.0" y="192.0" width="5.4" height="12.0" fill="#dbd2cb"/><rect x="708.6" y="192.0" width="5.4" height="12.0" fill="#cfc5bd"/><rect x="701.4" y="207.4" width="13.2" height="13.2" fill="#eddfdd"/><rect x="702.0" y="208.0" width="5.4" height="5.4" fill="#d9d0c9"/><rect x="702.0" y="214.6" width="5.4" height="5.4" fill="#d5cbc3"/><rect x="708.6" y="208.0" width="5.4" height="5.4" fill="#d5cbc3"/><rect x="708.6" y="214.6" width="5.4" height="5.4" fill="#d9d0c9"/><rect x="701.4" y="223.4" width="13.2" height="13.2" fill="#e9e1dd"/><rect x="702.0" y="224.0" width="5.4" height="12.0" fill="#d5cbc3"/><rect x="701.4" y="239.4" width="13.2" height="13.2" fill="#e6e2de"/><rect x="702.0" y="240.0" width="5.4" height="12.0" fill="#dbd2cb"/><rect x="708.6" y="240.0" width="5.4" height="12.0" fill="#d9d0c9"/><rect x="701.4" y="255.4" width="13.2" height="13.2" fill="#eddfdd"/><rect x="702.0" y="256.0" width="5.4" height="12.0" fill="#cfc5bd"/><rect x="708.6" y="256.0" width="5.4" height="12.0" fill="#cfc5bd"/><rect x="701.4" y="271.4" width="13.2" height="13.2" fill="#e8e3df"/><rect x="702.0" y="272.0" width="12.0" height="12.0" fill="#cfc5bd"/><rect x="701.4" y="287.4" width="13.2" height="13.2" fill="#e9e1dd"/><rect x="702.0" y="288.0" width="12.0" height="5.4" fill="#d9d0c9"/><rect x="702.0" y="294.6" width="12.0" height="5.4" fill="#d5cbc3"/><rect x="717.4" y="111.4" width="13.2" height="13.2" fill="#e8e3df"/><rect x="718.0" y="112.0" width="12.0" height="12.0" fill="#dbd2cb"/><rect x="717.4" y="127.4" width="13.2" height="13.2" fill="#e6e2de"/><rect x="717.4" y="143.4" width="13.2" height="13.2" fill="#e9e1dd"/><rect x="718.0" y="144.0" width="12.0" height="12.0" fill="#cfc5bd"/><rect x="717.4" y="159.4" width="13.2" height="13.2" fill="#e6e2de"/><rect x="718.0" y="160.0" width="12.0" height="12.0" fill="#cfc5bd"/><rect x="717.4" y="175.4" width="13.2" height="13.2" fill="#e9e1dd"/><rect x="718.0" y="176.0" width="12.0" height="12.0" fill="#d5cbc3"/><rect x="717.4" y="191.4" width="13.2" height="13.2" fill="#e8e3df"/><rect x="717.4" y="207.4" width="13.2" height="13.2" fill="#e8e3df"/><rect x="717.4" y="223.4" width="13.2" height="13.2" fill="#e8e3df"/><rect x="718.0" y="224.0" width="12.0" height="12.0" fill="#d9d0c9"/><rect x="717.4" y="239.4" width="13.2" height="13.2" fill="#e9e1dd"/><rect x="717.4" y="255.4" width="13.2" height="13.2" fill="#e6e2de"/><rect x="718.0" y="256.0" width="12.0" height="12.0" fill="#d9d0c9"/><rect x="717.4" y="271.4" width="13.2" height="13.2" fill="#e6e2de"/><rect x="718.0" y="272.0" width="12.0" height="12.0" fill="#cfc5bd"/><rect x="717.4" y="287.4" width="13.2" height="13.2" fill="#e8e3df"/><rect x="718.0" y="288.0" width="5.4" height="5.4" fill="#d9d0c9"/><rect x="718.0" y="294.6" width="5.4" height="5.4" fill="#d9d0c9"/><rect x="724.6" y="288.0" width="5.4" height="5.4" fill="#cfc5bd"/><rect x="724.6" y="294.6" width="5.4" height="5.4" fill="#dbd2cb"/><rect x="733.4" y="111.4" width="13.2" height="13.2" fill="#e9e1dd"/><rect x="734.0" y="112.0" width="5.4" height="5.4" fill="#d5cbc3"/><rect x="734.0" y="118.6" width="5.4" height="5.4" fill="#dbd2cb"/><rect x="740.6" y="112.0" width="5.4" height="5.4" fill="#d9d0c9"/><rect x="740.6" y="118.6" width="5.4" height="5.4" fill="#dbd2cb"/><rect x="733.4" y="127.4" width="13.2" height="13.2" fill="#e9e1dd"/><rect x="733.4" y="143.4" width="13.2" height="13.2" fill="#e9e1dd"/><rect x="734.0" y="144.0" width="12.0" height="5.4" fill="#d5cbc3"/><rect x="733.4" y="159.4" width="13.2" height="13.2" fill="#eddfdd"/><rect x="733.4" y="175.4" width="13.2" height="13.2" fill="#e8e3df"/><rect x="734.0" y="176.0" width="5.4" height="12.0" fill="#cfc5bd"/><rect x="740.6" y="176.0" width="5.4" height="12.0" fill="#dbd2cb"/><rect x="733.4" y="191.4" width="13.2" height="13.2" fill="#e9e1dd"/><rect x="734.0" y="192.0" width="12.0" height="12.0" fill="#d9d0c9"/><rect x="733.4" y="207.4" width="13.2" height="13.2" fill="#e9e1dd"/><rect x="734.0" y="208.0" width="12.0" height="12.0" fill="#d9d0c9"/><rect x="733.4" y="223.4" width="13.2" height="13.2" fill="#e8e3df"/><rect x="733.4" y="239.4" width="13.2" height="13.2" fill="#e8e3df"/><rect x="733.4" y="255.4" width="13.2" height="13.2" fill="#e6e2de"/><rect x="733.4" y="271.4" width="13.2" height="13.2" fill="#e8e3df"/><rect x="733.4" y="287.4" width="13.2" height="13.2" fill="#eddfdd"/><rect x="734.0" y="288.0" width="5.4" height="5.4" fill="#d9d0c9"/><rect x="734.0" y="294.6" width="5.4" height="5.4" fill="#d5cbc3"/><rect x="740.6" y="288.0" width="5.4" height="5.4" fill="#dbd2cb"/><rect x="740.6" y="294.6" width="5.4" height="5.4" fill="#d9d0c9"/><rect x="749.4" y="111.4" width="13.2" height="13.2" fill="#eddfdd"/><rect x="756.6" y="112.0" width="5.4" height="12.0" fill="#d5cbc3"/><rect x="749.4" y="127.4" width="13.2" height="13.2" fill="#e8e3df"/><rect x="750.0" y="128.0" width="12.0" height="12.0" fill="#d9d0c9"/><rect x="749.4" y="143.4" width="13.2" height="13.2" fill="#eddfdd"/><rect x="749.4" y="159.4" width="13.2" height="13.2" fill="#eddfdd"/><rect x="750.0" y="160.0" width="12.0" height="5.4" fill="#d9d0c9"/><rect x="750.0" y="166.6" width="12.0" height="5.4" fill="#d5cbc3"/><rect x="749.4" y="175.4" width="13.2" height="13.2" fill="#e6e2de"/><rect x="750.0" y="176.0" width="12.0" height="12.0" fill="#dbd2cb"/><rect x="749.4" y="191.4" width="13.2" height="13.2" fill="#e6e2de"/><rect x="750.0" y="192.0" width="5.4" height="12.0" fill="#cfc5bd"/><rect x="756.6" y="192.0" width="5.4" height="12.0" fill="#dbd2cb"/><rect x="749.4" y="207.4" width="13.2" height="13.2" fill="#e9e1dd"/><rect x="750.0" y="208.0" width="12.0" height="12.0" fill="#dbd2cb"/><rect x="749.4" y="223.4" width="13.2" height="13.2" fill="#e6e2de"/><rect x="750.0" y="224.0" width="12.0" height="5.4" fill="#d9d0c9"/><rect x="750.0" y="230.6" width="12.0" height="5.4" fill="#d9d0c9"/><rect x="749.4" y="239.4" width="13.2" height="13.2" fill="#e8e3df"/><rect x="750.0" y="240.0" width="5.4" height="5.4" fill="#cfc5bd"/><rect x="750.0" y="246.6" width="5.4" height="5.4" fill="#d5cbc3"/><rect x="756.6" y="240.0" width="5.4" height="5.4" fill="#d5cbc3"/><rect x="756.6" y="246.6" width="5.4" height="5.4" fill="#cfc5bd"/><rect x="749.4" y="255.4" width="13.2" height="13.2" fill="#e6e2de"/><rect x="749.4" y="271.4" width="13.2" height="13.2" fill="#e8e3df"/><rect x="750.0" y="272.0" width="5.4" height="12.0" fill="#d9d0c9"/><rect x="756.6" y="272.0" width="5.4" height="12.0" fill="#d9d0c9"/><rect x="749.4" y="287.4" width="13.2" height="13.2" fill="#e6e2de"/><rect x="750.0" y="288.0" width="5.4" height="5.4" fill="#d9d0c9"/><rect x="750.0" y="294.6" width="5.4" height="5.4" fill="#d9d0c9"/><rect x="756.6" y="288.0" width="5.4" height="5.4" fill="#d5cbc3"/><rect x="756.6" y="294.6" width="5.4" height="5.4" fill="#cfc5bd"/><rect x="765.4" y="111.4" width="13.2" height="13.2" fill="#eddfdd"/><rect x="766.0" y="112.0" width="12.0" height="12.0" fill="#dbd2cb"/><rect x="765.4" y="127.4" width="13.2" height="13.2" fill="#e8e3df"/><rect x="766.0" y="128.0" width="12.0" height="12.0" fill="#d9d0c9"/><rect x="765.4" y="143.4" width="13.2" height="13.2" fill="#e6e2de"/><rect x="765.4" y="159.4" width="13.2" height="13.2" fill="#e9e1dd"/><rect x="765.4" y="175.4" width="13.2" height="13.2" fill="#e6e2de"/><rect x="766.0" y="176.0" width="5.4" height="12.0" fill="#d5cbc3"/><rect x="772.6" y="176.0" width="5.4" height="12.0" fill="#cfc5bd"/><rect x="765.4" y="191.4" width="13.2" height="13.2" fill="#e8e3df"/><rect x="766.0" y="192.0" width="5.4" height="12.0" fill="#d5cbc3"/><rect x="772.6" y="192.0" width="5.4" height="12.0" fill="#cfc5bd"/><rect x="765.4" y="207.4" width="13.2" height="13.2" fill="#e8e3df"/><rect x="765.4" y="223.4" width="13.2" height="13.2" fill="#e8e3df"/><rect x="765.4" y="239.4" width="13.2" height="13.2" fill="#eddfdd"/><rect x="766.0" y="240.0" width="12.0" height="12.0" fill="#d5cbc3"/><rect x="765.4" y="255.4" width="13.2" height="13.2" fill="#eddfdd"/><rect x="766.0" y="256.0" width="5.4" height="12.0" fill="#d5cbc3"/><rect x="772.6" y="256.0" width="5.4" height="12.0" fill="#cfc5bd"/><rect x="765.4" y="271.4" width="13.2" height="13.2" fill="#e6e2de"/><rect x="765.4" y="287.4" width="13.2" height="13.2" fill="#eddfdd"/><rect x="766.0" y="288.0" width="12.0" height="5.4" fill="#d5cbc3"/><rect x="766.0" y="294.6" width="12.0" height="5.4" fill="#cfc5bd"/></g></g>
<polygon points="349.0,200.0 376.0,222.0 404.0,238.0 431.0,250.0 458.0,256.0 520.0,256.0 520.0,262.0 430.0,262.0 386.0,248.0 349.0,232.0" fill="#ebdbe8" />
<polygon points="349.0,240.0 386.0,256.0 430.0,270.0 470.0,276.0 500.0,290.0 490.0,330.0 450.0,330.0 349.0,310.0" fill="#e9dde3" fill-opacity="0.6"/>
<polygon points="421.0,0.0 600.0,0.0 588.0,25.0 577.0,52.0 561.0,79.0 549.0,105.0 544.0,130.0 548.0,160.0 552.0,172.0 540.0,178.0 513.0,192.0 486.0,203.0 458.0,204.0 431.0,196.0 409.0,186.0 388.0,171.0 374.0,153.0 365.0,134.0 363.0,109.0 367.0,85.0 381.0,60.0 393.0,38.0" fill="#cdebb0" />
<polygon points="385.0,38.0 401.0,36.0 397.6,60.0 391.8,112.5 384.0,116.4 391.8,153.4 384.0,163.0 374.3,153.4 364.6,134.0 362.6,108.6 366.5,85.3 381.0,60.0" fill="#add19e" />
<polygon points="384.0,163.0 392.0,153.0 410.0,175.0 432.0,188.0 409.0,186.0 388.0,171.0" fill="#c3d6a2" />
<polygon points="480.0,180.0 510.0,172.0 535.0,165.0 520.0,185.0 490.0,195.0" fill="#b9dca0" />
<polygon points="464.0,0.0 485.0,0.0 474.0,18.0 456.0,38.0 451.0,60.0 451.0,104.0 430.0,104.0 431.0,60.0 440.0,34.0 452.0,14.0" fill="#dcdce4" />
<polygon points="572.0,0.0 592.0,0.0 580.0,40.0 560.0,80.0 545.0,115.0 538.0,153.0 514.0,153.0 530.0,100.0 548.0,50.0" fill="#dcdce4" />
<rect x="458" y="8" width="6" height="5" fill="#c9b9a9"/>
<rect x="450" y="20" width="6" height="6" fill="#c9b9a9"/>
<rect x="442" y="34" width="5" height="7" fill="#c9b9a9"/>
<rect x="436" y="50" width="5" height="9" fill="#c9b9a9"/>
<rect x="433" y="66" width="5" height="9" fill="#c9b9a9"/>
<rect x="432" y="84" width="6" height="9" fill="#c9b9a9"/>
<rect x="552" y="30" width="5" height="6" fill="#c9b9a9"/>
<rect x="546" y="48" width="5" height="6" fill="#c9b9a9"/>
<rect x="540" y="66" width="5" height="6" fill="#c9b9a9"/>
<rect x="535" y="84" width="5" height="6" fill="#c9b9a9"/>
<rect x="531" y="100" width="6" height="10" fill="#c9b9a9"/>
<rect x="527" y="122" width="6" height="10" fill="#c9b9a9"/>
<rect x="522" y="140" width="7" height="8" fill="#c9b9a9"/>
<polygon points="548.0,0.0 568.0,0.0 514.6,148.0 490.0,148.0" fill="#bbbbcc" />
<polyline points="545.0,8.0 459.0,124.7" fill="none" stroke="#bbbbcc" stroke-width="10.5" stroke-linejoin="round" stroke-linecap="round" stroke-linecap="butt"/>
<polyline points="453.0,52.0 453.0,124.0" fill="none" stroke="#bbbbcc" stroke-width="5" stroke-linejoin="round" stroke-linecap="round" />
<polyline points="453.0,52.0 476.0,27.0" fill="none" stroke="#bbbbcc" stroke-width="5" stroke-linejoin="round" stroke-linecap="round" />
<polyline points="474.0,26.0 566.0,14.0" fill="none" stroke="#bbbbcc" stroke-width="5" stroke-linejoin="round" stroke-linecap="round" />
<polyline points="455.0,127.0 518.0,128.0" fill="none" stroke="#bbbbcc" stroke-width="5" stroke-linejoin="round" stroke-linecap="round" />
<polyline points="520.0,112.0 514.0,146.0" fill="none" stroke="#bbbbcc" stroke-width="4" stroke-linejoin="round" stroke-linecap="round" />
<polygon points="477.0,0.0 512.0,0.0 510.0,26.0 474.0,26.0" fill="#bbbbcc" />
<polyline points="482.0,2.0 481.0,22.0" fill="none" stroke="#cfc3b6" stroke-width="1.6" stroke-linejoin="round" stroke-linecap="round" />
<polyline points="490.0,2.0 489.0,22.0" fill="none" stroke="#cfc3b6" stroke-width="1.6" stroke-linejoin="round" stroke-linecap="round" />
<polyline points="498.0,2.0 497.0,22.0" fill="none" stroke="#cfc3b6" stroke-width="1.6" stroke-linejoin="round" stroke-linecap="round" />
<polyline points="505.0,2.0 504.0,22.0" fill="none" stroke="#cfc3b6" stroke-width="1.6" stroke-linejoin="round" stroke-linecap="round" />
<polyline points="492.6,28.0 492.6,50.0" fill="none" stroke="#fff" stroke-width="1" stroke-linejoin="round" stroke-linecap="round" />
<path d="M467 -2 C455 12 443 28 434 46 C424 66 419 92 421 114 C424 138 442 156 470 164 C500 170 525 166 548 160" fill="none" stroke="#a8a8a8" stroke-width="5" stroke-linejoin="round" stroke-linecap="round" />
<path d="M467 -2 C455 12 443 28 434 46 C424 66 419 92 421 114 C424 138 442 156 470 164 C500 170 525 166 548 160" fill="none" stroke="#ffffff" stroke-width="3.6" stroke-linejoin="round" stroke-linecap="round" />
<path d="M467 -2 C455 12 443 28 434 46 C424 66 419 92 421 114 C424 138 442 156 470 164 C500 170 525 166 548 160" fill="none" stroke="#c8c8c8" stroke-width="0.6" stroke-linejoin="round" stroke-linecap="round" />
<polyline points="409.0,161.0 433.0,139.0" fill="none" stroke="#999" stroke-width="1.2" stroke-linejoin="round" stroke-linecap="round" />
<polyline points="449.0,200.0 453.0,182.0" fill="none" stroke="#999" stroke-width="1.2" stroke-linejoin="round" stroke-linecap="round" />
<polygon points="548.0,130.0 552.0,98.0 600.0,70.0 645.0,48.0 732.0,22.0 732.0,50.0 553.0,147.0" fill="#ebdbe8" />
<polygon points="592.0,0.0 732.0,0.0 732.0,22.0 645.0,48.0 600.0,70.0 552.0,98.0 562.0,80.0 580.0,40.0" fill="#efebe4" />
<rect x="605" y="5" width="10" height="12" fill="#d6ccc5"/>
<rect x="630" y="10" width="8" height="12" fill="#d6ccc5"/>
<rect x="650" y="5" width="10" height="10" fill="#d6ccc5"/>
<rect x="690" y="0" width="20" height="6" fill="#d6ccc5"/>
<rect x="612" y="60" width="14" height="8" fill="#d6ccc5"/>
<rect x="695" y="40" width="10" height="10" fill="#d6ccc5"/>
<polygon points="599.0,80.0 606.0,78.0 608.0,92.0 601.0,94.0" fill="#cdebb0" />
<polygon points="553.0,147.0 732.0,50.0 732.0,67.0 697.0,84.0 645.0,115.0 600.0,140.0 563.0,165.0 552.0,172.0" fill="#c6e4a8" />
<polygon points="703.0,38.0 722.0,34.0 724.0,48.0 705.0,50.0" fill="#aad3df" />
<polyline points="553.0,147.0 732.0,50.0" fill="none" stroke="#fff" stroke-width="1.6" stroke-linejoin="round" stroke-linecap="round" />
<polygon points="349.0,0.0 378.0,0.0 421.0,0.0 393.0,38.0 381.0,60.0 366.5,85.0 362.6,108.6 364.6,134.0 374.3,153.4 388.0,171.0 409.0,186.4 431.0,196.0 458.3,204.0 485.6,202.8 513.0,191.9 540.0,178.0 549.0,172.7 563.0,165.0 600.0,140.0 645.0,115.0 697.0,84.0 732.0,66.0 732.0,133.0 689.0,143.0 671.0,151.0 640.0,167.0 590.0,194.0 549.0,219.0 540.0,223.3 513.0,235.6 485.6,241.6 458.3,241.0 431.0,235.6 403.6,224.6 376.3,208.0 349.0,186.4 349.0,57.0 352.0,55.0" fill="#aad3df" />
<polygon points="349.0,0.0 378.0,0.0 352.0,55.0 349.0,57.0" fill="#f1ede6" />
<polygon points="349.0,0.0 367.0,0.0 360.0,10.0 349.0,12.0" fill="#ead6e6" />
<path d="M349 13 Q362 10 369 0" fill="none" stroke="#999" stroke-width="2.2" stroke-linejoin="round" stroke-linecap="round" />
<path d="M349 13 Q362 10 369 0" fill="none" stroke="#eee" stroke-width="1" stroke-linejoin="round" stroke-linecap="round" />
<polyline points="350.0,57.0 378.0,0.0" fill="none" stroke="#b5d9a4" stroke-width="1.8" stroke-linejoin="round" stroke-linecap="round" />
<polyline points="350.0,50.0 372.0,0.0" fill="none" stroke="#ccc" stroke-width="1.2" stroke-linejoin="round" stroke-linecap="round" stroke-dasharray="1 1"/>
<polyline points="398.8,0.0 364.6,60.0 349.0,100.0" fill="none" stroke="#a88bb8" stroke-width="2.6" stroke-linejoin="round" stroke-linecap="round" stroke-opacity="0.7" stroke-dasharray="8 3 2 3"/>
<polyline points="395.0,203.0 436.0,222.0 472.0,223.0 513.0,214.0 549.0,192.0 574.0,180.0 640.0,140.0 732.0,94.0" fill="none" stroke="#a88bb8" stroke-width="2.6" stroke-linejoin="round" stroke-linecap="round" stroke-opacity="0.7" stroke-dasharray="8 3 2 3"/>
<polyline points="356.0,190.0 356.0,719.0" fill="none" stroke="#a88bb8" stroke-width="2.6" stroke-linejoin="round" stroke-linecap="round" stroke-opacity="0.5"/>
<polyline points="600.0,23.0 732.0,23.0" fill="none" stroke="#a88bb8" stroke-width="1.8" stroke-linejoin="round" stroke-linecap="round" stroke-opacity="0.5" stroke-dasharray="8 3 2 3"/>
<polyline points="349.0,193.0 376.0,213.0 404.0,229.0 431.0,239.0 458.0,244.0 486.0,244.0 513.0,238.0 540.0,226.0 590.0,199.0" fill="none" stroke="#b9dca0" stroke-width="1.2" stroke-linejoin="round" stroke-linecap="round" />
<polyline points="349.0,198.0 376.0,218.0 404.0,233.0 431.0,243.0 458.0,249.0 486.0,249.0 513.0,243.0 540.0,231.0 590.0,203.0" fill="none" stroke="#fff" stroke-width="2" stroke-linejoin="round" stroke-linecap="round" />
<polygon points="497.0,372.0 509.0,320.0 509.0,372.0 493.5,420.0 478.0,420.0" fill="#b9dca0" />
<polygon points="349.0,480.0 404.0,480.0 425.0,455.0 404.0,550.0 380.0,587.0 361.0,623.0 349.0,630.0" fill="#e8e4df" />
<rect x="362" y="505" width="14" height="22" fill="#d3cac3"/>
<rect x="385" y="500" width="12" height="18" fill="#d3cac3"/>
<rect x="364" y="570" width="10" height="14" fill="#d3cac3"/>
<rect x="352" y="540" width="8" height="20" fill="#d3cac3"/>
<polygon points="470.0,425.0 481.0,425.0 462.0,475.0 444.0,525.0 430.0,590.0 414.0,600.0 420.0,545.0 446.0,478.0" fill="#c6e4a8" />
<polygon points="410.0,600.0 425.0,590.0 440.0,612.0 479.0,618.0 479.0,628.0 428.0,634.0 407.0,611.0" fill="#cfe6b8" />
<polygon points="518.0,285.0 544.0,284.0 545.0,339.0 532.0,340.0 514.0,320.0" fill="#c8facc" />
<polygon points="349.0,655.0 400.0,660.0 420.0,690.0 425.0,719.0 349.0,719.0" fill="#c6e4a8" />
<polygon points="540.0,590.0 600.0,575.0 690.0,562.0 690.0,585.0 630.0,610.0 560.0,624.0 540.0,624.0" fill="#e4e0e0" />
<rect x="563" y="582" width="60" height="38" fill="#d9d0c9"/>
<polygon points="581.0,624.0 624.0,624.0 618.0,719.0 540.0,719.0 537.0,670.0 581.0,668.0" fill="#c8facc" />
<rect x="543" y="627" width="37" height="40" fill="#d9d0c9"/>
<polygon points="631.0,580.0 654.0,576.0 654.0,611.0 631.0,611.0" fill="#c8facc" />
<ellipse cx="572" cy="683" rx="9" ry="5" fill="#aad3df" fill-opacity="0.6"/>
<polyline points="598.0,626.0 588.0,650.0 580.0,690.0 588.0,719.0" fill="none" stroke="#fff" stroke-width="1.4" stroke-linejoin="round" stroke-linecap="round" />
<polyline points="560.0,705.0 580.0,690.0" fill="none" stroke="#3b5fd6" stroke-width="1" stroke-linejoin="round" stroke-linecap="round" stroke-dasharray="1.5 2"/>
<polyline points="597.0,0.0 592.0,25.0 586.0,45.0 578.0,70.0 566.0,90.0 554.0,106.0 550.0,125.0 550.0,145.0 557.0,165.0 566.0,185.0 579.0,199.0 582.0,210.0 579.0,227.0 573.0,236.0" fill="none" stroke="#555" stroke-width="3.6" stroke-linejoin="round" stroke-linecap="round" />
<polyline points="597.0,0.0 592.0,25.0 586.0,45.0 578.0,70.0 566.0,90.0 554.0,106.0 550.0,125.0 550.0,145.0 557.0,165.0 566.0,185.0 579.0,199.0 582.0,210.0 579.0,227.0 573.0,236.0" fill="none" stroke="#ddd" stroke-width="1.08" stroke-linejoin="round" stroke-linecap="round" stroke-dasharray="4 3"/>
<polyline points="557.0,80.0 600.0,60.0 645.0,42.0 732.0,8.0" fill="none" stroke="#555" stroke-width="4.2" stroke-linejoin="round" stroke-linecap="round" />
<polyline points="557.0,80.0 600.0,60.0 645.0,42.0 732.0,8.0" fill="none" stroke="#ddd" stroke-width="1.26" stroke-linejoin="round" stroke-linecap="round" stroke-dasharray="4 3"/>
<polyline points="600.0,0.0 610.0,30.0 640.0,48.0 700.0,28.0 732.0,20.0" fill="none" stroke="#b5b5b5" stroke-width="0.9" stroke-linejoin="round" stroke-linecap="round" />
<polyline points="602.0,0.0 613.0,30.0 642.0,48.0 700.0,30.0 732.0,22.0" fill="none" stroke="#b5b5b5" stroke-width="0.9" stroke-linejoin="round" stroke-linecap="round" />
<polyline points="604.0,0.0 616.0,30.0 644.0,48.0 700.0,32.0 732.0,24.0" fill="none" stroke="#b5b5b5" stroke-width="0.9" stroke-linejoin="round" stroke-linecap="round" />
<polyline points="606.0,0.0 619.0,30.0 646.0,48.0 700.0,34.0 732.0,26.0" fill="none" stroke="#b5b5b5" stroke-width="0.9" stroke-linejoin="round" stroke-linecap="round" />
<polyline points="608.0,0.0 622.0,30.0 648.0,48.0 700.0,36.0 732.0,28.0" fill="none" stroke="#b5b5b5" stroke-width="0.9" stroke-linejoin="round" stroke-linecap="round" />
<polyline points="610.0,0.0 625.0,30.0 650.0,48.0 700.0,38.0 732.0,30.0" fill="none" stroke="#b5b5b5" stroke-width="0.9" stroke-linejoin="round" stroke-linecap="round" />
<polyline points="590.0,0.0 598.0,35.0 620.0,55.0" fill="none" stroke="#b5b5b5" stroke-width="0.9" stroke-linejoin="round" stroke-linecap="round" />
<polyline points="587.0,0.0 598.0,37.0 620.0,57.0" fill="none" stroke="#b5b5b5" stroke-width="0.9" stroke-linejoin="round" stroke-linecap="round" />
<polyline points="584.0,0.0 598.0,39.0 620.0,59.0" fill="none" stroke="#b5b5b5" stroke-width="0.9" stroke-linejoin="round" stroke-linecap="round" />
<polyline points="581.0,0.0 598.0,41.0 620.0,61.0" fill="none" stroke="#b5b5b5" stroke-width="0.9" stroke-linejoin="round" stroke-linecap="round" />
<polyline points="578.0,0.0 598.0,43.0 620.0,63.0" fill="none" stroke="#b5b5b5" stroke-width="0.9" stroke-linejoin="round" stroke-linecap="round" />
<polyline points="650.0,50.0 690.0,32.0 732.0,24.0" fill="none" stroke="#aaa" stroke-width="0.9" stroke-linejoin="round" stroke-linecap="round" />
<polyline points="650.0,52.5 690.0,34.5 732.0,26.5" fill="none" stroke="#aaa" stroke-width="0.9" stroke-linejoin="round" stroke-linecap="round" />
<polyline points="650.0,55.0 690.0,37.0 732.0,29.0" fill="none" stroke="#aaa" stroke-width="0.9" stroke-linejoin="round" stroke-linecap="round" />
<polyline points="650.0,57.5 690.0,39.5 732.0,31.5" fill="none" stroke="#aaa" stroke-width="0.9" stroke-linejoin="round" stroke-linecap="round" />
<polyline points="700.0,34.0 694.0,48.0 700.0,60.0 732.0,48.0" fill="none" stroke="#aaa" stroke-width="0.9" stroke-linejoin="round" stroke-linecap="round" />
<polyline points="600.0,52.0 680.0,22.0 732.0,4.0" fill="none" stroke="#888" stroke-width="1.3" stroke-linejoin="round" stroke-linecap="round" />
<polyline points="562.0,92.0 620.0,45.0 655.0,0.0" fill="none" stroke="#888" stroke-width="1.3" stroke-linejoin="round" stroke-linecap="round" />
<polyline points="565.0,58.0 590.0,25.0 605.0,0.0" fill="none" stroke="#888" stroke-width="1.3" stroke-linejoin="round" stroke-linecap="round" />
<polyline points="590.0,30.0 640.0,52.0 660.0,73.0 666.0,89.0" fill="none" stroke="#888" stroke-width="1.3" stroke-linejoin="round" stroke-linecap="round" />
<polyline points="663.0,89.0 682.0,147.0" fill="none" stroke="#555" stroke-width="3.2" stroke-linejoin="round" stroke-linecap="round" />
<polyline points="663.0,89.0 682.0,147.0" fill="none" stroke="#ddd" stroke-width="0.96" stroke-linejoin="round" stroke-linecap="round" stroke-dasharray="4 3"/>
<polyline points="668.0,88.0 687.0,146.0" fill="none" stroke="#555" stroke-width="3.2" stroke-linejoin="round" stroke-linecap="round" />
<polyline points="668.0,88.0 687.0,146.0" fill="none" stroke="#ddd" stroke-width="0.96" stroke-linejoin="round" stroke-linecap="round" stroke-dasharray="4 3"/>
<polyline points="580.0,88.0 619.0,80.0 640.0,52.0" fill="none" stroke="#aaa" stroke-width="3" stroke-linejoin="round" stroke-linecap="round" />
<polyline points="580.0,88.0 619.0,80.0 640.0,52.0" fill="none" stroke="#fff" stroke-width="2" stroke-linejoin="round" stroke-linecap="round" />
<polyline points="566.0,123.0 645.0,98.0" fill="none" stroke="#aaa" stroke-width="3" stroke-linejoin="round" stroke-linecap="round" />
<polyline points="566.0,123.0 645.0,98.0" fill="none" stroke="#fff" stroke-width="2" stroke-linejoin="round" stroke-linecap="round" />
<polyline points="600.0,85.0 606.0,112.0" fill="none" stroke="#fff" stroke-width="2" stroke-linejoin="round" stroke-linecap="round" />
<polyline points="623.0,77.0 628.0,103.0" fill="none" stroke="#fff" stroke-width="2" stroke-linejoin="round" stroke-linecap="round" />
<polyline points="349.0,218.0 396.0,234.0 441.0,246.0 506.0,247.0 541.0,240.0 587.0,197.0 650.0,183.0 732.0,170.0" fill="none" stroke="#555" stroke-width="3.6" stroke-linejoin="round" stroke-linecap="round" />
<polyline points="349.0,218.0 396.0,234.0 441.0,246.0 506.0,247.0 541.0,240.0 587.0,197.0 650.0,183.0 732.0,170.0" fill="none" stroke="#ddd" stroke-width="1.08" stroke-linejoin="round" stroke-linecap="round" stroke-dasharray="4 3"/>
<polyline points="349.0,226.0 400.0,238.0 440.0,250.0" fill="none" stroke="#777" stroke-width="1.6" stroke-linejoin="round" stroke-linecap="round" />
<polyline points="358.0,352.0 411.0,325.0 440.0,320.0" fill="none" stroke="#aaa" stroke-width="3.4" stroke-linejoin="round" stroke-linecap="round" />
<polyline points="358.0,352.0 411.0,325.0 440.0,320.0" fill="none" stroke="#fff" stroke-width="2.2" stroke-linejoin="round" stroke-linecap="round" />
<polyline points="349.0,370.0 415.6,340.0 460.0,315.0 509.0,287.8 545.0,250.0" fill="none" stroke="#555" stroke-width="4" stroke-linejoin="round" stroke-linecap="round" />
<polyline points="349.0,370.0 415.6,340.0 460.0,315.0 509.0,287.8 545.0,250.0" fill="none" stroke="#ddd" stroke-width="1.2" stroke-linejoin="round" stroke-linecap="round" stroke-dasharray="4 3"/>
<polyline points="520.0,276.0 509.0,305.0 485.0,330.0 464.0,354.0 450.0,385.0 438.0,420.0 431.6,440.0 401.0,541.0 379.6,586.8 361.0,623.5 349.0,639.0" fill="none" stroke="#555" stroke-width="4" stroke-linejoin="round" stroke-linecap="round" />
<polyline points="520.0,276.0 509.0,305.0 485.0,330.0 464.0,354.0 450.0,385.0 438.0,420.0 431.6,440.0 401.0,541.0 379.6,586.8 361.0,623.5 349.0,639.0" fill="none" stroke="#ddd" stroke-width="1.2" stroke-linejoin="round" stroke-linecap="round" stroke-dasharray="4 3"/>
<polyline points="519.0,276.0 506.5,305.0 480.0,330.0 459.0,354.0 446.0,385.0 435.0,420.0 429.1,440.0 399.5,541.0 378.6,586.8 361.0,623.5 349.0,639.0" fill="none" stroke="#555" stroke-width="4" stroke-linejoin="round" stroke-linecap="round" />
<polyline points="519.0,276.0 506.5,305.0 480.0,330.0 459.0,354.0 446.0,385.0 435.0,420.0 429.1,440.0 399.5,541.0 378.6,586.8 361.0,623.5 349.0,639.0" fill="none" stroke="#ddd" stroke-width="1.2" stroke-linejoin="round" stroke-linecap="round" stroke-dasharray="4 3"/>
<polyline points="525.0,276.0 512.0,309.0 497.0,346.0 474.0,420.0 465.0,440.0 440.0,495.0 404.0,550.0" fill="none" stroke="#555" stroke-width="3.4" stroke-linejoin="round" stroke-linecap="round" />
<polyline points="525.0,276.0 512.0,309.0 497.0,346.0 474.0,420.0 465.0,440.0 440.0,495.0 404.0,550.0" fill="none" stroke="#ddd" stroke-width="1.02" stroke-linejoin="round" stroke-linecap="round" stroke-dasharray="4 3"/>
<polyline points="524.0,276.0 510.5,309.0 494.5,346.0 471.0,420.0 461.0,440.0 437.5,495.0 405.0,550.0" fill="none" stroke="#555" stroke-width="3.4" stroke-linejoin="round" stroke-linecap="round" />
<polyline points="524.0,276.0 510.5,309.0 494.5,346.0 471.0,420.0 461.0,440.0 437.5,495.0 405.0,550.0" fill="none" stroke="#ddd" stroke-width="1.02" stroke-linejoin="round" stroke-linecap="round" stroke-dasharray="4 3"/>
<polyline points="523.0,276.0 509.0,309.0 492.0,346.0 468.0,420.0 457.0,440.0 435.0,495.0 406.0,550.0" fill="none" stroke="#555" stroke-width="3.4" stroke-linejoin="round" stroke-linecap="round" />
<polyline points="523.0,276.0 509.0,309.0 492.0,346.0 468.0,420.0 457.0,440.0 435.0,495.0 406.0,550.0" fill="none" stroke="#ddd" stroke-width="1.02" stroke-linejoin="round" stroke-linecap="round" stroke-dasharray="4 3"/>
<polyline points="404.0,550.0 401.0,577.6 407.0,611.0 428.5,636.0 479.0,633.0" fill="none" stroke="#666" stroke-width="2.2" stroke-linejoin="round" stroke-linecap="round" />
<polyline points="380.0,587.0 382.6,623.5 398.0,654.0 420.0,680.0 440.0,719.0" fill="none" stroke="#666" stroke-width="2.2" stroke-linejoin="round" stroke-linecap="round" />
<polyline points="349.0,307.0 474.0,313.0 495.0,309.0 509.0,309.0" fill="none" stroke="#aaa" stroke-width="4.4" stroke-linejoin="round" stroke-linecap="round" />
<polyline points="349.0,307.0 474.0,313.0 495.0,309.0 509.0,309.0" fill="none" stroke="#fff" stroke-width="3" stroke-linejoin="round" stroke-linecap="round" />
<polyline points="509.0,309.0 481.8,420.0 462.0,470.0" fill="none" stroke="#aaa" stroke-width="3.6" stroke-linejoin="round" stroke-linecap="round" />
<polyline points="509.0,309.0 481.8,420.0 462.0,470.0" fill="none" stroke="#fff" stroke-width="2.4" stroke-linejoin="round" stroke-linecap="round" />
<polyline points="459.0,471.0 490.0,515.0 517.0,560.0" fill="none" stroke="#aaa" stroke-width="3.6" stroke-linejoin="round" stroke-linecap="round" />
<polyline points="459.0,471.0 490.0,515.0 517.0,560.0" fill="none" stroke="#fff" stroke-width="2.4" stroke-linejoin="round" stroke-linecap="round" />
<polyline points="349.0,378.0 420.0,345.0 500.0,322.0" fill="none" stroke="#777" stroke-width="1.6" stroke-linejoin="round" stroke-linecap="round" />
<polyline points="349.0,632.0 420.0,634.0 479.0,630.0 541.0,606.0 640.0,574.0 732.0,546.0" fill="none" stroke="#5a5a5a" stroke-width="1.6" stroke-linejoin="round" stroke-linecap="round" />
<polyline points="349.0,636.5 420.0,636.4 479.0,631.8 541.0,607.0 640.0,574.9 732.0,546.9" fill="none" stroke="#5a5a5a" stroke-width="1.6" stroke-linejoin="round" stroke-linecap="round" />
<polyline points="349.0,641.0 420.0,638.8 479.0,633.6 541.0,608.1 640.0,575.8 732.0,547.8" fill="none" stroke="#5a5a5a" stroke-width="1.6" stroke-linejoin="round" stroke-linecap="round" />
<polyline points="349.0,645.5 420.0,641.2 479.0,635.4 541.0,609.1 640.0,576.7 732.0,548.7" fill="none" stroke="#5a5a5a" stroke-width="1.6" stroke-linejoin="round" stroke-linecap="round" />
<polyline points="349.0,650.0 420.0,643.6 479.0,637.2 541.0,610.2 640.0,577.6 732.0,549.6" fill="none" stroke="#5a5a5a" stroke-width="1.6" stroke-linejoin="round" stroke-linecap="round" />
<polyline points="349.0,654.5 420.0,646.0 479.0,639.0 541.0,611.2 640.0,578.5 732.0,550.5" fill="none" stroke="#5a5a5a" stroke-width="1.6" stroke-linejoin="round" stroke-linecap="round" />
<polyline points="420.0,634.0 479.0,630.0 541.0,606.0 640.0,574.0 732.0,546.0" fill="none" stroke="#ddd" stroke-width="0.6" stroke-linejoin="round" stroke-linecap="round" stroke-dasharray="3 3"/>
<polyline points="420.0,638.8 479.0,633.6 541.0,608.1 640.0,575.8 732.0,547.8" fill="none" stroke="#ddd" stroke-width="0.6" stroke-linejoin="round" stroke-linecap="round" stroke-dasharray="3 3"/>
<polyline points="420.0,643.6 479.0,637.2 541.0,610.2 640.0,577.6 732.0,549.6" fill="none" stroke="#ddd" stroke-width="0.6" stroke-linejoin="round" stroke-linecap="round" stroke-dasharray="3 3"/>
<polyline points="349.0,655.0 380.0,650.0 420.0,640.0 479.0,632.0" fill="none" stroke="#666" stroke-width="1.4" stroke-linejoin="round" stroke-linecap="round" />
<polyline points="349.0,659.0 380.0,652.4 420.0,641.2 479.0,632.0" fill="none" stroke="#666" stroke-width="1.4" stroke-linejoin="round" stroke-linecap="round" />
<polyline points="349.0,663.0 380.0,654.8 420.0,642.4 479.0,632.0" fill="none" stroke="#666" stroke-width="1.4" stroke-linejoin="round" stroke-linecap="round" />
<path d="M349 668 Q395 660 420 690 Q430 705 432 719" fill="none" stroke="#777" stroke-width="2.2" stroke-linejoin="round" stroke-linecap="round" />
<path d="M349 668 Q395 660 420 690 Q430 705 432 719" fill="none" stroke="#eee" stroke-width="0.8" stroke-linejoin="round" stroke-linecap="round" />
<path d="M360 640 Q400 650 412 680 Q418 700 416 719" fill="none" stroke="#777" stroke-width="2.2" stroke-linejoin="round" stroke-linecap="round" />
<path d="M360 640 Q400 650 412 680 Q418 700 416 719" fill="none" stroke="#eee" stroke-width="0.8" stroke-linejoin="round" stroke-linecap="round" />
<circle cx="441" cy="628" r="4" fill="none" stroke="#666" stroke-width="1.6"/>
<polyline points="621.0,179.0 634.0,270.0 636.0,330.0 630.0,500.0 627.0,560.0 616.0,719.0" fill="none" stroke="#666" stroke-width="2.6" stroke-linejoin="round" stroke-linecap="round" />
<polyline points="621.0,179.0 634.0,270.0 636.0,330.0 630.0,500.0 627.0,560.0 616.0,719.0" fill="none" stroke="#bbb" stroke-width="1.2" stroke-linejoin="round" stroke-linecap="round" />
<rect x="619.9" y="185" width="4" height="4" fill="#5b6fc4"/>
<rect x="625.6" y="225" width="4" height="4" fill="#5b6fc4"/>
<rect x="630.9" y="262" width="4" height="4" fill="#5b6fc4"/>
<rect x="633.0" y="300" width="4" height="4" fill="#5b6fc4"/>
<rect x="633.6" y="340" width="4" height="4" fill="#5b6fc4"/>
<rect x="632.5" y="372" width="4" height="4" fill="#5b6fc4"/>
<rect x="631.4" y="405" width="4" height="4" fill="#5b6fc4"/>
<rect x="630.3" y="436" width="4" height="4" fill="#5b6fc4"/>
<rect x="629.5" y="458" width="4" height="4" fill="#5b6fc4"/>
<rect x="628.4" y="490" width="4" height="4" fill="#5b6fc4"/>
<rect x="627.3" y="514" width="4" height="4" fill="#5b6fc4"/>
<rect x="626.5" y="530" width="4" height="4" fill="#5b6fc4"/>
<rect x="625.0" y="560" width="4" height="4" fill="#5b6fc4"/>
<rect x="622.2" y="600" width="4" height="4" fill="#5b6fc4"/>
<rect x="619.5" y="640" width="4" height="4" fill="#5b6fc4"/>
<rect x="616.7" y="680" width="4" height="4" fill="#5b6fc4"/>
<polyline points="621.0,230.0 653.0,220.0 660.0,240.0 625.0,250.0" fill="none" stroke="#888" stroke-width="1.6" stroke-linejoin="round" stroke-linecap="round" />
<polyline points="520.0,288.0 732.0,292.0" fill="none" stroke="#c3c78a" stroke-width="5.6" stroke-linejoin="round" stroke-linecap="round" />
<polyline points="640.0,302.0 732.0,304.0" fill="none" stroke="#c3c78a" stroke-width="5.6" stroke-linejoin="round" stroke-linecap="round" />
<polyline points="640.0,320.0 732.0,322.0" fill="none" stroke="#c3c78a" stroke-width="5.6" stroke-linejoin="round" stroke-linecap="round" />
<polyline points="540.0,338.0 732.0,340.0" fill="none" stroke="#c3c78a" stroke-width="5.6" stroke-linejoin="round" stroke-linecap="round" />
<polyline points="417.0,367.0 732.0,369.0" fill="none" stroke="#c3c78a" stroke-width="5.6" stroke-linejoin="round" stroke-linecap="round" />
<polyline points="349.0,360.0 365.0,372.0 380.0,378.0 417.0,367.0" fill="none" stroke="#c3c78a" stroke-width="5.6" stroke-linejoin="round" stroke-linecap="round" />
<polyline points="520.0,396.0 732.0,398.0" fill="none" stroke="#c3c78a" stroke-width="5.6" stroke-linejoin="round" stroke-linecap="round" />
<polyline points="647.0,420.0 732.0,421.0" fill="none" stroke="#c3c78a" stroke-width="5.6" stroke-linejoin="round" stroke-linecap="round" />
<polyline points="520.0,441.0 732.0,443.0" fill="none" stroke="#c3c78a" stroke-width="5.6" stroke-linejoin="round" stroke-linecap="round" />
<polyline points="576.0,276.0 575.0,420.0 568.0,561.0 563.6,579.0 539.0,610.0 536.0,652.0 533.0,683.0 530.0,722.0" fill="none" stroke="#c3c78a" stroke-width="5.6" stroke-linejoin="round" stroke-linecap="round" />
<polyline points="660.0,296.0 654.0,612.0 665.0,628.0 684.0,650.0" fill="none" stroke="#c3c78a" stroke-width="5.6" stroke-linejoin="round" stroke-linecap="round" />
<polyline points="642.0,285.0 641.0,445.0" fill="none" stroke="#c3c78a" stroke-width="5.6" stroke-linejoin="round" stroke-linecap="round" />
<polyline points="689.0,290.0 686.0,719.0" fill="none" stroke="#c3c78a" stroke-width="5.6" stroke-linejoin="round" stroke-linecap="round" />
<polyline points="704.0,285.0 702.0,445.0" fill="none" stroke="#c3c78a" stroke-width="5.6" stroke-linejoin="round" stroke-linecap="round" />
<polyline points="728.0,296.0 725.0,719.0" fill="none" stroke="#c3c78a" stroke-width="5.6" stroke-linejoin="round" stroke-linecap="round" />
<polyline points="383.0,372.0 383.0,477.0" fill="none" stroke="#c3c78a" stroke-width="5.6" stroke-linejoin="round" stroke-linecap="round" />
<polyline points="396.0,372.0 396.0,477.0" fill="none" stroke="#c3c78a" stroke-width="5.6" stroke-linejoin="round" stroke-linecap="round" />
<polyline points="349.0,488.0 396.0,475.0" fill="none" stroke="#c3c78a" stroke-width="5.6" stroke-linejoin="round" stroke-linecap="round" />
<polyline points="356.0,500.0 358.0,552.0 385.0,561.0 404.0,582.0 541.0,588.0" fill="none" stroke="#c3c78a" stroke-width="5.6" stroke-linejoin="round" stroke-linecap="round" />
<polyline points="619.0,518.0 540.0,580.0 480.0,628.0 434.0,698.0 422.0,719.0" fill="none" stroke="#c3c78a" stroke-width="5.6" stroke-linejoin="round" stroke-linecap="round" />
<polyline points="540.0,616.0 672.0,616.0" fill="none" stroke="#c3c78a" stroke-width="5.6" stroke-linejoin="round" stroke-linecap="round" />
<polyline points="650.0,574.0 732.0,574.0" fill="none" stroke="#c3c78a" stroke-width="5.6" stroke-linejoin="round" stroke-linecap="round" />
<polyline points="647.0,622.0 622.0,719.0" fill="none" stroke="#c3c78a" stroke-width="5.6" stroke-linejoin="round" stroke-linecap="round" />
<polyline points="600.0,518.0 640.0,517.0" fill="none" stroke="#c3c78a" stroke-width="5.6" stroke-linejoin="round" stroke-linecap="round" />
<polyline points="628.0,545.0 627.0,560.0 616.0,722.0" fill="none" stroke="#c3c78a" stroke-width="5.6" stroke-linejoin="round" stroke-linecap="round" />
<polyline points="732.0,138.0 700.0,150.0 684.0,157.0 663.0,188.0 658.0,225.0 663.0,261.0 667.0,310.0 662.0,340.0" fill="none" stroke="#c3c78a" stroke-width="5.6" stroke-linejoin="round" stroke-linecap="round" />
<polyline points="560.0,498.0 732.0,498.0" fill="none" stroke="#c3c78a" stroke-width="5.6" stroke-linejoin="round" stroke-linecap="round" />
<polyline points="520.0,288.0 732.0,292.0" fill="none" stroke="#f7fabf" stroke-width="4.4" stroke-linejoin="round" stroke-linecap="round" />
<polyline points="640.0,302.0 732.0,304.0" fill="none" stroke="#f7fabf" stroke-width="4.4" stroke-linejoin="round" stroke-linecap="round" />
<polyline points="640.0,320.0 732.0,322.0" fill="none" stroke="#f7fabf" stroke-width="4.4" stroke-linejoin="round" stroke-linecap="round" />
<polyline points="540.0,338.0 732.0,340.0" fill="none" stroke="#f7fabf" stroke-width="4.4" stroke-linejoin="round" stroke-linecap="round" />
<polyline points="417.0,367.0 732.0,369.0" fill="none" stroke="#f7fabf" stroke-width="4.4" stroke-linejoin="round" stroke-linecap="round" />
<polyline points="349.0,360.0 365.0,372.0 380.0,378.0 417.0,367.0" fill="none" stroke="#f7fabf" stroke-width="4.4" stroke-linejoin="round" stroke-linecap="round" />
<polyline points="520.0,396.0 732.0,398.0" fill="none" stroke="#f7fabf" stroke-width="4.4" stroke-linejoin="round" stroke-linecap="round" />
<polyline points="647.0,420.0 732.0,421.0" fill="none" stroke="#f7fabf" stroke-width="4.4" stroke-linejoin="round" stroke-linecap="round" />
<polyline points="520.0,441.0 732.0,443.0" fill="none" stroke="#f7fabf" stroke-width="4.4" stroke-linejoin="round" stroke-linecap="round" />
<polyline points="576.0,276.0 575.0,420.0 568.0,561.0 563.6,579.0 539.0,610.0 536.0,652.0 533.0,683.0 530.0,722.0" fill="none" stroke="#f7fabf" stroke-width="4.4" stroke-linejoin="round" stroke-linecap="round" />
<polyline points="660.0,296.0 654.0,612.0 665.0,628.0 684.0,650.0" fill="none" stroke="#f7fabf" stroke-width="4.4" stroke-linejoin="round" stroke-linecap="round" />
<polyline points="642.0,285.0 641.0,445.0" fill="none" stroke="#f7fabf" stroke-width="4.4" stroke-linejoin="round" stroke-linecap="round" />
<polyline points="689.0,290.0 686.0,719.0" fill="none" stroke="#f7fabf" stroke-width="4.4" stroke-linejoin="round" stroke-linecap="round" />
<polyline points="704.0,285.0 702.0,445.0" fill="none" stroke="#f7fabf" stroke-width="4.4" stroke-linejoin="round" stroke-linecap="round" />
<polyline points="728.0,296.0 725.0,719.0" fill="none" stroke="#f7fabf" stroke-width="4.4" stroke-linejoin="round" stroke-linecap="round" />
<polyline points="383.0,372.0 383.0,477.0" fill="none" stroke="#f7fabf" stroke-width="4.4" stroke-linejoin="round" stroke-linecap="round" />
<polyline points="396.0,372.0 396.0,477.0" fill="none" stroke="#f7fabf" stroke-width="4.4" stroke-linejoin="round" stroke-linecap="round" />
<polyline points="349.0,488.0 396.0,475.0" fill="none" stroke="#f7fabf" stroke-width="4.4" stroke-linejoin="round" stroke-linecap="round" />
<polyline points="356.0,500.0 358.0,552.0 385.0,561.0 404.0,582.0 541.0,588.0" fill="none" stroke="#f7fabf" stroke-width="4.4" stroke-linejoin="round" stroke-linecap="round" />
<polyline points="619.0,518.0 540.0,580.0 480.0,628.0 434.0,698.0 422.0,719.0" fill="none" stroke="#f7fabf" stroke-width="4.4" stroke-linejoin="round" stroke-linecap="round" />
<polyline points="540.0,616.0 672.0,616.0" fill="none" stroke="#f7fabf" stroke-width="4.4" stroke-linejoin="round" stroke-linecap="round" />
<polyline points="650.0,574.0 732.0,574.0" fill="none" stroke="#f7fabf" stroke-width="4.4" stroke-linejoin="round" stroke-linecap="round" />
<polyline points="647.0,622.0 622.0,719.0" fill="none" stroke="#f7fabf" stroke-width="4.4" stroke-linejoin="round" stroke-linecap="round" />
<polyline points="600.0,518.0 640.0,517.0" fill="none" stroke="#f7fabf" stroke-width="4.4" stroke-linejoin="round" stroke-linecap="round" />
<polyline points="628.0,545.0 627.0,560.0 616.0,722.0" fill="none" stroke="#f7fabf" stroke-width="4.4" stroke-linejoin="round" stroke-linecap="round" />
<polyline points="732.0,138.0 700.0,150.0 684.0,157.0 663.0,188.0 658.0,225.0 663.0,261.0 667.0,310.0 662.0,340.0" fill="none" stroke="#f7fabf" stroke-width="4.4" stroke-linejoin="round" stroke-linecap="round" />
<polyline points="560.0,498.0 732.0,498.0" fill="none" stroke="#f7fabf" stroke-width="4.4" stroke-linejoin="round" stroke-linecap="round" />
<circle cx="372" cy="548" r="9" fill="none" stroke="#c3c78a" stroke-width="5.6"/><circle cx="372" cy="548" r="9" fill="none" stroke="#f7fabf" stroke-width="4.4"/>
<polyline points="540.0,277.0 732.0,284.0" fill="none" stroke="#e0b088" stroke-width="4.4" stroke-linejoin="round" stroke-linecap="round" />
<polyline points="540.0,277.0 732.0,284.0" fill="none" stroke="#fcd6a4" stroke-width="3.2" stroke-linejoin="round" stroke-linecap="round" />
<polyline points="349.0,240.0 386.0,252.0 430.0,266.0 541.0,267.0 732.0,273.0" fill="none" stroke="#c05a72" stroke-width="10.9" stroke-linejoin="round" stroke-linecap="round" />
<polyline points="349.0,240.0 386.0,252.0 430.0,266.0 541.0,267.0 732.0,273.0" fill="none" stroke="#e892a2" stroke-width="9.5" stroke-linejoin="round" stroke-linecap="round" />
<polyline points="349.0,240.0 386.0,252.0 430.0,266.0 541.0,267.0 732.0,273.0" fill="none" stroke="#b85068" stroke-width="0.7" stroke-linejoin="round" stroke-linecap="round" />
<polyline points="592.0,-2.0 588.0,22.0 582.0,42.0 574.0,68.0 562.0,88.0 550.0,104.0 545.0,120.0 543.0,142.0 547.0,165.0 552.0,180.0 566.0,250.0 574.0,268.0" fill="none" stroke="#c05a72" stroke-width="7.4" stroke-linejoin="round" stroke-linecap="round" />
<polyline points="592.0,-2.0 588.0,22.0 582.0,42.0 574.0,68.0 562.0,88.0 550.0,104.0 545.0,120.0 543.0,142.0 547.0,165.0 552.0,180.0 566.0,250.0 574.0,268.0" fill="none" stroke="#e892a2" stroke-width="6" stroke-linejoin="round" stroke-linecap="round" />
<polyline points="548.0,160.0 552.0,180.0 566.0,250.0" fill="none" stroke="#fff" stroke-width="2.6" stroke-linejoin="round" stroke-linecap="round" stroke-dasharray="5 4"/>
<path d="M560 235 Q548 255 530 270" fill="none" stroke="#c05a72" stroke-width="7.4" stroke-linejoin="round" stroke-linecap="round" />
<path d="M560 235 Q548 255 530 270" fill="none" stroke="#e892a2" stroke-width="6" stroke-linejoin="round" stroke-linecap="round" />
<path d="M560 235 Q548 255 530 270" fill="none" stroke="#fff" stroke-width="2.6" stroke-linejoin="round" stroke-linecap="round" stroke-dasharray="4 3"/>
<path d="M566 271 C538 273 519 294 514 320 L510 350 Q512 395 541 422" fill="none" stroke="#c05a72" stroke-width="13.4" stroke-linejoin="round" stroke-linecap="round" stroke-linecap="butt"/>
<path d="M566 271 C538 273 519 294 514 320 L510 350 Q512 395 541 422" fill="none" stroke="#e892a2" stroke-width="12" stroke-linejoin="round" stroke-linecap="round" stroke-linecap="butt"/>
<path d="M470 266 Q510 268 516 300" fill="none" stroke="#c05a72" stroke-width="5.4" stroke-linejoin="round" stroke-linecap="round" />
<path d="M470 266 Q510 268 516 300" fill="none" stroke="#e892a2" stroke-width="4" stroke-linejoin="round" stroke-linecap="round" />
<polyline points="349.0,389.0 454.0,410.0 541.0,430.0" fill="none" stroke="#c05a72" stroke-width="11.4" stroke-linejoin="round" stroke-linecap="round" />
<polyline points="349.0,389.0 454.0,410.0 541.0,430.0" fill="none" stroke="#e892a2" stroke-width="10" stroke-linejoin="round" stroke-linecap="round" />
<polyline points="541.0,429.0 732.0,433.0" fill="none" stroke="#c05a72" stroke-width="9.4" stroke-linejoin="round" stroke-linecap="round" />
<polyline points="541.0,429.0 732.0,433.0" fill="none" stroke="#e892a2" stroke-width="8" stroke-linejoin="round" stroke-linecap="round" />
<rect x="605" y="426.5" width="2.6" height="11" fill="#f7fabf"/>
<rect x="620" y="426.5" width="2.6" height="11" fill="#f7fabf"/>
<rect x="648" y="426.5" width="2.6" height="11" fill="#f7fabf"/>
<rect x="660" y="426.5" width="2.6" height="11" fill="#f7fabf"/>
<rect x="690" y="426.5" width="2.6" height="11" fill="#f7fabf"/>
<rect x="703" y="426.5" width="2.6" height="11" fill="#f7fabf"/>
<polyline points="548.0,448.0 546.0,470.0 543.0,500.0 533.0,561.0 522.0,622.0 514.0,668.0 498.0,722.0" fill="none" stroke="#c05a72" stroke-width="12.4" stroke-linejoin="round" stroke-linecap="round" />
<polyline points="548.0,448.0 546.0,470.0 543.0,500.0 533.0,561.0 522.0,622.0 514.0,668.0 498.0,722.0" fill="none" stroke="#e892a2" stroke-width="11" stroke-linejoin="round" stroke-linecap="round" />
<path d="M527 429 Q540 433 546 452 L550 452 Q556 433 570 429 Z" fill="#e892a2" stroke="#c05a72" stroke-width="0.8"/>
<path d="M512 360 Q515 400 540 415 Q548 425 548 448" fill="none" stroke="#c05a72" stroke-width="10.4" stroke-linejoin="round" stroke-linecap="round" />
<path d="M512 360 Q515 400 540 415 Q548 425 548 448" fill="none" stroke="#e892a2" stroke-width="9" stroke-linejoin="round" stroke-linecap="round" />
<path d="M535 440 Q545 450 546 470 M560 440 Q552 450 550 470 M540 432 Q548 440 548 455" fill="none" stroke="#b04a62" stroke-width="0.7"/>
<path d="M514 668 Q508 690 490 722" fill="none" stroke="#c05a72" stroke-width="6.4" stroke-linejoin="round" stroke-linecap="round" />
<path d="M514 668 Q508 690 490 722" fill="none" stroke="#e892a2" stroke-width="5" stroke-linejoin="round" stroke-linecap="round" />
<path d="M514 668 Q520 690 528 722" fill="none" stroke="#c05a72" stroke-width="6.4" stroke-linejoin="round" stroke-linecap="round" />
<path d="M514 668 Q520 690 528 722" fill="none" stroke="#e892a2" stroke-width="5" stroke-linejoin="round" stroke-linecap="round" />
<path d="M682 268 Q695 260 700 242 Q705 230 712 242 Q720 260 732 264 L732 270 Z" fill="#e892a2" stroke="#c05a72" stroke-width="0.8"/>
<ellipse cx="707" cy="262" rx="6" ry="5" fill="#c8e6b0"/>
<path d="M690 268 Q698 262 700 250 M724 268 Q716 262 714 250" fill="none" stroke="#b04a62" stroke-width="0.8"/>
<polyline points="667.0,-2.0 695.0,180.0 699.0,200.0 706.6,296.0" fill="none" stroke="#c98a52" stroke-width="6.2" stroke-linejoin="round" stroke-linecap="round" />
<polyline points="667.0,-2.0 695.0,180.0 699.0,200.0 706.6,296.0" fill="none" stroke="#fcd6a4" stroke-width="5" stroke-linejoin="round" stroke-linecap="round" />
<path d="M522.9 5.5 L524.2 9 L529 11.5 L529 13 L524.2 12 L523.8 15.2 L525.6 16.8 L525.6 17.6 L522.9 17 L520.2 17.6 L520.2 16.8 L522 15.2 L521.6 12 L516.8 13 L516.8 11.5 L521.6 9 Z" fill="#8461c4"/>
<text x="522.5" y="28.9" font-size="9.6" fill="#8461c4" text-anchor="middle" font-style="italic" stroke="#fff" stroke-width="1.6" stroke-linejoin="round" paint-order="stroke" stroke-opacity="0.5">Charles</text>
<text x="522.5" y="40.9" font-size="9.6" fill="#8461c4" text-anchor="middle" font-style="italic" stroke="#fff" stroke-width="1.6" stroke-linejoin="round" paint-order="stroke" stroke-opacity="0.5">B. Wheeler</text>
<text x="522.5" y="52.9" font-size="9.6" fill="#8461c4" text-anchor="middle" font-style="italic" stroke="#fff" stroke-width="1.6" stroke-linejoin="round" paint-order="stroke" stroke-opacity="0.5">Downtown</text>
<text x="522.5" y="64.6" font-size="9.6" fill="#8461c4" text-anchor="middle" font-style="italic" stroke="#fff" stroke-width="1.6" stroke-linejoin="round" paint-order="stroke" stroke-opacity="0.5">Airport</text>
<text x="362" y="45" font-size="9.5" fill="#a47fb3" text-anchor="middle" stroke="#aad3df" stroke-width="1.5" stroke-linejoin="round" paint-order="stroke" transform="rotate(-62 362 45)" >Kansas</text>
<text x="398" y="22" font-size="9.5" fill="#a47fb3" text-anchor="middle" stroke="#aad3df" stroke-width="1.5" stroke-linejoin="round" paint-order="stroke" transform="rotate(-62 398 22)" >Missouri</text>
<text x="372" y="178" font-size="9.5" fill="#4d80b3" text-anchor="middle" stroke="#aad3df" stroke-width="1.5" stroke-linejoin="round" paint-order="stroke" transform="rotate(43 372 178)" >Missouri River</text>
<text x="556" y="180" font-size="10.8" fill="#a983b6" text-anchor="middle" stroke="#aad3df" stroke-width="1.5" stroke-linejoin="round" paint-order="stroke" transform="rotate(-28 556 180)" >Clay County</text>
<text x="505" y="230" font-size="10.8" fill="#a983b6" text-anchor="middle" stroke="#aad3df" stroke-width="1.5" stroke-linejoin="round" paint-order="stroke" transform="rotate(-21 505 230)" >Jackson County</text>
<text x="732" y="19" font-size="10" fill="#9a7ba8" text-anchor="end" stroke="#f2efe9" stroke-width="1.5" stroke-linejoin="round" paint-order="stroke" >North Kan</text>
<text x="615" y="52" font-size="9.6" fill="#666" text-anchor="middle" stroke="#f2efe9" stroke-width="2" stroke-linejoin="round" paint-order="stroke" transform="rotate(-27 615 52)" >BNSF Brookfield Subdivision</text>
<text x="643" y="180" font-size="9.6" fill="#666" text-anchor="middle" stroke="#f2efe9" stroke-width="2" stroke-linejoin="round" paint-order="stroke" transform="rotate(-11 643 180)" >KC Metro Subdivision</text>
<rect x="660.5" y="55" width="33" height="16" rx="2.5" fill="#f9e3c4" stroke="#b08a5e" stroke-width="1"/>
<text x="677" y="67" font-size="10" fill="#5a3e1e" text-anchor="middle" >MO 9</text>
<rect x="384.5" y="238.5" width="46" height="53" rx="2" fill="#f5d5db" stroke="#d49aa6" stroke-width="1"/>
<text x="407.5" y="251" font-size="10.2" fill="#7a2236" text-anchor="middle" >I 70</text>
<text x="407.5" y="262.6" font-size="10.2" fill="#7a2236" text-anchor="middle" >US 24</text>
<text x="407.5" y="274.3" font-size="10.2" fill="#7a2236" text-anchor="middle" >US 40</text>
<text x="407.5" y="286" font-size="10.2" fill="#7a2236" text-anchor="middle" >US 169</text>
<text x="473" y="256" font-size="9.4" fill="#222" text-anchor="middle" stroke="#f6f2ef" stroke-width="2" stroke-linejoin="round" paint-order="stroke" >Woodswether Road</text>
<text x="476" y="273" font-size="9.8" fill="#b83b55" text-anchor="middle" font-style="italic" stroke="#b83b55" stroke-width="0.5">2A</text>
<text x="513" y="274" font-size="9.8" fill="#b83b55" text-anchor="middle" font-style="italic" stroke="#b83b55" stroke-width="0.5">2B</text>
<text x="532" y="274" font-size="9.8" fill="#b83b55" text-anchor="middle" font-style="italic" stroke="#b83b55" stroke-width="0.5">2C</text>
<text x="582" y="273" font-size="9.8" fill="#b83b55" text-anchor="middle" font-style="italic" stroke="#b83b55" stroke-width="0.5">2A</text>
<text x="607" y="274" font-size="9.8" fill="#b83b55" text-anchor="middle" font-style="italic" stroke="#b83b55" stroke-width="0.5">2C</text>
<text x="666" y="278" font-size="9.8" fill="#b83b55" text-anchor="middle" font-style="italic" stroke="#b83b55" stroke-width="0.5">2E</text>
<text x="524" y="297" font-size="9.8" fill="#b83b55" text-anchor="middle" font-style="italic" stroke="#b83b55" stroke-width="0.5">2Y</text>
<text x="519" y="320" font-size="9.8" fill="#b83b55" text-anchor="middle" font-style="italic" stroke="#b83b55" stroke-width="0.5">2X</text>
<text x="510" y="336" font-size="9.8" fill="#b83b55" text-anchor="middle" font-style="italic" stroke="#b83b55" stroke-width="0.5">2W</text>
<text x="530" y="401" font-size="9.8" fill="#b83b55" text-anchor="middle" font-style="italic" stroke="#b83b55" stroke-width="0.5">N</text>
<text x="525" y="411" font-size="9.8" fill="#b83b55" text-anchor="middle" font-style="italic" stroke="#b83b55" stroke-width="0.5">2D</text>
<text x="456" y="412" font-size="9.8" fill="#b83b55" text-anchor="middle" font-style="italic" stroke="#b83b55" stroke-width="0.5">1B</text>
<text x="506" y="431" font-size="9.8" fill="#b83b55" text-anchor="middle" font-style="italic" stroke="#b83b55" stroke-width="0.5">2T</text>
<text x="545" y="434" font-size="9.8" fill="#b83b55" text-anchor="middle" font-style="italic" stroke="#b83b55" stroke-width="0.5">2V</text>
<text x="557" y="435" font-size="9.8" fill="#b83b55" text-anchor="middle" font-style="italic" stroke="#b83b55" stroke-width="0.5">2R</text>
<text x="586" y="431" font-size="9.8" fill="#b83b55" text-anchor="middle" font-style="italic" stroke="#b83b55" stroke-width="0.5">2T</text>
<text x="616" y="434" font-size="9.8" fill="#b83b55" text-anchor="middle" font-style="italic" stroke="#b83b55" stroke-width="0.5">2S</text>
<text x="546" y="481" font-size="9.8" fill="#b83b55" text-anchor="middle" font-style="italic" stroke="#b83b55" stroke-width="0.5">2U</text>
<text x="545" y="490" font-size="9.8" fill="#b83b55" text-anchor="middle" font-style="italic" stroke="#b83b55" stroke-width="0.5">1D</text>
<text x="529" y="595" font-size="9.8" fill="#b83b55" text-anchor="middle" font-style="italic" stroke="#b83b55" stroke-width="0.5">1C</text>
<text x="513" y="660" font-size="9.8" fill="#b83b55" text-anchor="middle" font-style="italic" stroke="#b83b55" stroke-width="0.5">1B</text>
<text x="504" y="692" font-size="9.8" fill="#b83b55" text-anchor="middle" font-style="italic" stroke="#b83b55" stroke-width="0.5">1A</text>
<text x="564" y="322" font-size="9.5" fill="#222" text-anchor="middle" stroke="#f6f2ef" stroke-width="2" stroke-linejoin="round" paint-order="stroke" >West 9th St</text>
<text x="656" y="305" font-size="9.5" fill="#222" text-anchor="middle" stroke="#fff" stroke-width="2" stroke-linejoin="round" paint-order="stroke" transform="rotate(-90 656 305)" >Walnut Street</text>
<text x="716" y="237" font-size="9.5" fill="#222" text-anchor="middle" stroke="#fff" stroke-width="2" stroke-linejoin="round" paint-order="stroke" transform="rotate(66 716 237)" >Cherry Street</text>
<text x="396" y="399" font-size="9.5" fill="#222" text-anchor="middle" stroke="#e892a2" stroke-width="1" stroke-linejoin="round" paint-order="stroke" transform="rotate(13.5 396 399)" >B. Dillingham Freeway</text>
<text x="433" y="492" font-size="9.5" fill="#555" text-anchor="middle" stroke="#f2efe9" stroke-width="1.5" stroke-linejoin="round" paint-order="stroke" transform="rotate(-63 433 492)" >BNSF Track 0698 Coal Route</text>
<text x="373" y="515" font-size="9.5" fill="#222" text-anchor="middle" stroke="#f7fabf" stroke-width="1.5" stroke-linejoin="round" paint-order="stroke" transform="rotate(-76 373 515)" >American Royal Drive</text>
<text x="405" y="503" font-size="9.5" fill="#555" text-anchor="middle" stroke="#f2efe9" stroke-width="1.5" stroke-linejoin="round" paint-order="stroke" transform="rotate(-68 405 503)" >Kansas City Terminal RR</text>
<text x="470" y="587" font-size="9.3" fill="#222" text-anchor="middle" stroke="#f7fabf" stroke-width="1.5" stroke-linejoin="round" paint-order="stroke" transform="rotate(2.5 470 587)" >Avenida Cesar E. Chavez</text>
<text x="572" y="498" font-size="9.5" fill="#222" text-anchor="middle" stroke="#f7fabf" stroke-width="1.5" stroke-linejoin="round" paint-order="stroke" transform="rotate(-88 572 498)" >Broadway Boulevard</text>
<text x="673" y="490" font-size="9.5" fill="#222" text-anchor="middle" stroke="#fff" stroke-width="2" stroke-linejoin="round" paint-order="stroke" transform="rotate(-90 673 490)" >McGee Street</text>
<text x="691" y="470" font-size="9.5" fill="#222" text-anchor="middle" stroke="#fff" stroke-width="2" stroke-linejoin="round" paint-order="stroke" transform="rotate(-90 691 470)" >Oak Street</text>
<text x="726" y="470" font-size="9.5" fill="#222" text-anchor="middle" stroke="#fff" stroke-width="2" stroke-linejoin="round" paint-order="stroke" transform="rotate(-90 726 470)" >Holmes Street</text>
<text x="722" y="617" font-size="9.5" fill="#222" text-anchor="middle" stroke="#fff" stroke-width="2" stroke-linejoin="round" paint-order="stroke" transform="rotate(-90 722 617)" >Holmes Street</text>
<text x="624" y="653" font-size="9.5" fill="#222" text-anchor="middle" stroke="#fff" stroke-width="2" stroke-linejoin="round" paint-order="stroke" transform="rotate(-86 624 653)" >Main Street</text>
<text x="538" y="705" font-size="9.5" fill="#222" text-anchor="middle" stroke="#fff" stroke-width="2" stroke-linejoin="round" paint-order="stroke" transform="rotate(62 538 705)" >Penn</text>
<rect x="597" y="582" width="7" height="6" fill="#5b6fc4"/>
<text x="605.5" y="595" font-size="10.6" fill="#4a5fc4" text-anchor="middle" font-weight="bold" stroke="#fff" stroke-width="1.6" stroke-linejoin="round" paint-order="stroke" >Kansas</text>
<text x="605.5" y="607.5" font-size="10.6" fill="#4a5fc4" text-anchor="middle" font-weight="bold" stroke="#fff" stroke-width="1.6" stroke-linejoin="round" paint-order="stroke" >City Union</text>
<text x="605.5" y="619.5" font-size="10.6" fill="#4a5fc4" text-anchor="middle" font-weight="bold" stroke="#fff" stroke-width="1.6" stroke-linejoin="round" paint-order="stroke" >Station</text>
<text x="654" y="637" font-size="10" fill="#a0473d" text-anchor="middle" font-style="italic" stroke="#fff" stroke-width="1.5" stroke-linejoin="round" paint-order="stroke" >Crown</text>
<text x="654" y="648" font-size="10" fill="#a0473d" text-anchor="middle" font-style="italic" stroke="#fff" stroke-width="1.5" stroke-linejoin="round" paint-order="stroke" >Center</text>
<defs><linearGradient id="rg" x1="0" y1="0" x2="0" y2="1"><stop offset="0" stop-color="#d9534a"/><stop offset="1" stop-color="#c23a32"/></linearGradient><linearGradient id="bg" x1="0" y1="0" x2="0" y2="1"><stop offset="0" stop-color="#4a95d2"/><stop offset="1" stop-color="#3579b5"/></linearGradient></defs>
<circle cx="598.3" cy="340" r="19.2" fill="#ff7f2a" fill-opacity="0.6" stroke="#fb6a0c" stroke-width="3"/>
<path d="M442.10 234.20 A12.3 12.3 0 0 1 466.70 234.20 C466.70 240.96 458.70 251.78 454.40 261.25 C450.09 251.78 442.10 240.96 442.10 234.20 Z" fill="url(#rg)" fill-opacity="0.92"/>
<path d="M449.09999999999997 228.89999999999998L459.7 239.5M459.7 228.89999999999998L449.09999999999997 239.5" stroke="#fff" stroke-width="3.2" stroke-linecap="round"/>
<path d="M618.20 228.70 A12.3 12.3 0 0 1 642.80 228.70 C642.80 235.46 634.80 245.79 630.50 255.00 C626.20 245.79 618.20 235.46 618.20 228.70 Z" fill="url(#rg)" fill-opacity="0.92"/>
<path d="M625.2 223.39999999999998L635.8 234.0M635.8 223.39999999999998L625.2 234.0" stroke="#fff" stroke-width="3.2" stroke-linecap="round"/>
<path d="M399.10 353.60 A12.3 12.3 0 0 1 423.70 353.60 C423.70 360.37 415.70 370.11 411.40 379.00 C407.09 370.11 399.10 360.37 399.10 353.60 Z" fill="url(#rg)" fill-opacity="0.92"/>
<path d="M406.09999999999997 348.3L416.7 358.90000000000003M416.7 348.3L406.09999999999997 358.90000000000003" stroke="#fff" stroke-width="3.2" stroke-linecap="round"/>
<path d="M482.00 452.50 A12.3 12.3 0 0 1 506.60 452.50 C506.60 459.26 498.61 468.69 494.30 477.40 C490.00 468.69 482.00 459.26 482.00 452.50 Z" fill="url(#rg)" fill-opacity="0.92"/>
<path d="M489.0 447.2L499.6 457.8M499.6 447.2L489.0 457.8" stroke="#fff" stroke-width="3.2" stroke-linecap="round"/>
<path d="M658.10 400.00 A12.3 12.3 0 0 1 682.70 400.00 C682.70 406.76 674.70 417.03 670.40 426.20 C666.10 417.03 658.10 406.76 658.10 400.00 Z" fill="url(#rg)" fill-opacity="0.92"/>
<path d="M665.1 394.7L675.6999999999999 405.3M675.6999999999999 394.7L665.1 405.3" stroke="#fff" stroke-width="3.2" stroke-linecap="round"/>
<path d="M704.00 419.00 A12.3 12.3 0 0 1 728.60 419.00 C728.60 425.76 720.60 435.64 716.30 444.60 C712.00 435.64 704.00 425.76 704.00 419.00 Z" fill="url(#rg)" fill-opacity="0.92"/>
<path d="M711.0 413.7L721.5999999999999 424.3M721.5999999999999 413.7L711.0 424.3" stroke="#fff" stroke-width="3.2" stroke-linecap="round"/>
<path d="M586.10 313.70 A12.2 12.2 0 0 1 610.50 313.70 C610.50 320.41 602.57 330.80 598.30 340.00 C594.03 330.80 586.10 320.41 586.10 313.70 Z" fill="url(#bg)"/>
<path d="M590.8 313.7H605.8M598.3 306.2V321.2" stroke="#fff" stroke-width="3.2" stroke-linecap="round"/>
</svg>
<div class="sc" style="top:680px;width:67px;height:18px;border-top:none">500 m</div>
<div class="sc" style="top:696px;width:82px;height:18px;border-bottom:none">2000 ft</div>
</div>
<div id="side">
 <div id="hdr">
  <div id="sin"><span class="ph">Search</span><span class="wh">Where is this?</span></div>
  <div id="sbtn"><svg width="34" height="34" viewBox="0 0 34 34"><circle cx="18" cy="16" r="6.8" fill="#c4cfff" stroke="#fff" stroke-width="1.6"/><line x1="7.5" y1="27" x2="13.2" y2="21" stroke="#fff" stroke-width="2.6" stroke-linecap="round"/></svg></div>
  <div id="dbtn"><svg width="38" height="34" viewBox="0 0 38 34"><path d="M12.2 20 V13 H9.4 L14.7 7.2 L20 13 H16.5 V17" fill="none" stroke="#fff" stroke-width="1.2" stroke-linejoin="round"/><path d="M12.2 26.6 V21.5 Q12.2 16.7 16.8 16.7 H22.7 V13 L28.8 18.6 L22.7 24.2 V21.6 H18.2 Q16.5 21.6 16.5 23.2 V26.6 Z" fill="#c8d2ff" stroke="#fff" stroke-width="1.2" stroke-linejoin="round"/></svg></div>
 </div>
 <h1>New Note</h1>
 <svg id="close" viewBox="0 0 14 14"><path d="M1 1L13 13M13 1L1 13" stroke="#6c757d" stroke-width="1.6"/></svg>
 <div class="al" id="a1">Spotted a mistake or something missing?<br>Let other mappers know so we can fix it.<br>Move the marker to the correct position<br>and type a note to explain the problem.</div>
 <div class="al" id="a2">You are not logged in. Please <a>log in</a> or <a>sign</a><br><a>up</a> if you want to receive updates for your<br>note.</div>
 <div id="ta">Your note is public and may be used to<br>update the map, so don't enter personal<br>information, or information from<br>copyrighted maps or directory listings.
  <svg id="grip" viewBox="0 0 12 12"><path d="M11 2L2 11M11 6L6 11M11 9.5L9.5 11" stroke="#777" stroke-width="1.1"/></svg></div>
 <div id="btn">Add Note</div>
</div>

</body></html>
